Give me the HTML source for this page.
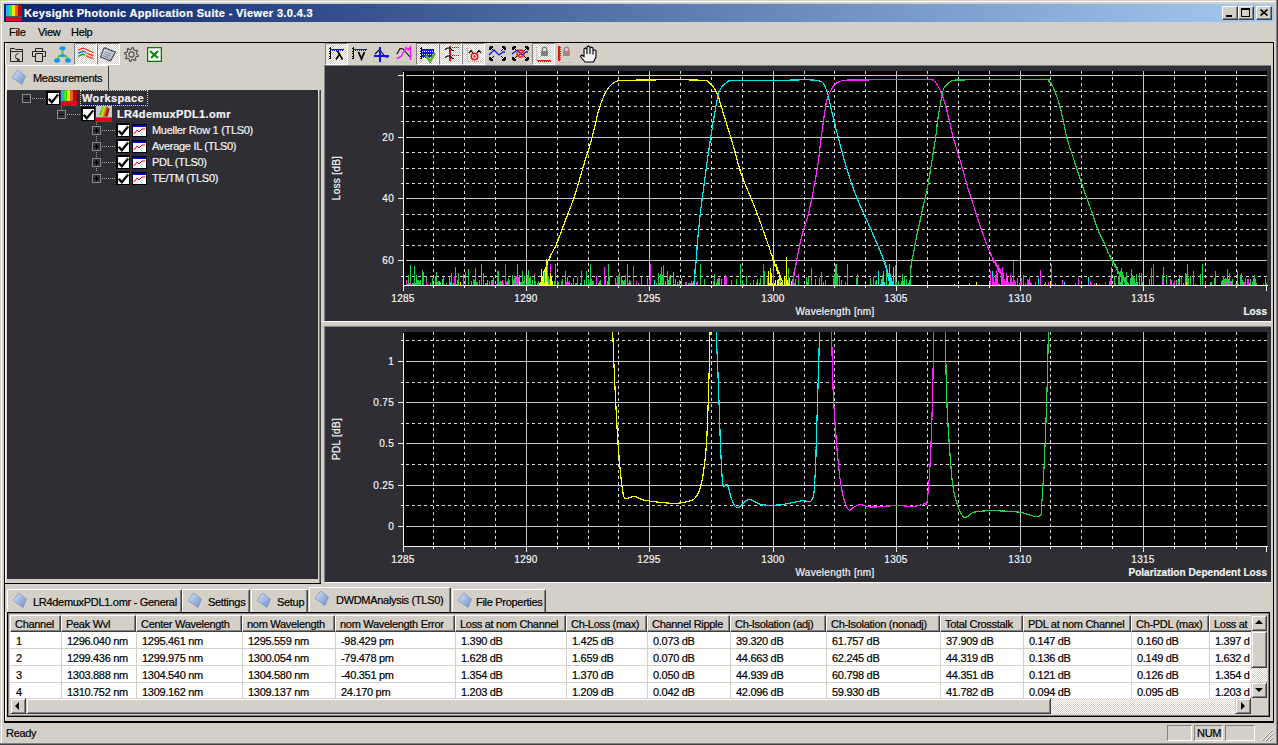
<!DOCTYPE html><html><head><meta charset="utf-8"><style>
*{margin:0;padding:0;box-sizing:border-box}
html,body{width:1278px;height:745px;overflow:hidden;background:#d4d0c8;font-family:"Liberation Sans", sans-serif;font-size:11px;color:#000}
.t{position:absolute;white-space:nowrap;line-height:13px;letter-spacing:-0.3px;-webkit-text-stroke:0.2px currentColor}
.a{position:absolute}
</style></head><body><div style="position:absolute;left:1px;top:1px;width:1275px;height:1px;background:#fff"></div><div style="position:absolute;left:1px;top:1px;width:1px;height:742px;background:#fff"></div><div style="position:absolute;left:1276px;top:0px;width:1px;height:744px;background:#808080"></div><div style="position:absolute;left:1277px;top:0px;width:1px;height:745px;background:#404040"></div><div style="position:absolute;left:0px;top:743px;width:1277px;height:1px;background:#808080"></div><div style="position:absolute;left:0px;top:744px;width:1278px;height:1px;background:#404040"></div><div style="position:absolute;left:4px;top:4px;width:1270px;height:18px;background:linear-gradient(to right,#0a246a,#a6caf0)"></div><svg class="a" style="left:6px;top:5px" width="16" height="16" viewBox="0 0 16 16"><rect x="0" y="0" width="3" height="11" fill="#1ab4f0"/><rect x="3" y="0" width="3" height="11" fill="#3ce61e"/><rect x="6" y="0" width="3" height="11" fill="#f0e600"/><rect x="9" y="0" width="3" height="11" fill="#e8641e"/><rect x="12" y="0" width="4" height="11" fill="#b40a0a"/><rect x="0" y="11" width="16" height="1" fill="#555"/><rect x="0" y="12" width="16" height="4" fill="#e8001e"/></svg><div class="t" style="left:24px;top:7px;color:#fff;font-weight:bold;font-size:11px;letter-spacing:0.35px">Keysight Photonic Application Suite - Viewer 3.0.4.3</div><div class="a" style="left:1222px;top:6px;width:16px;height:14px;background:#d4d0c8;border-top:1px solid #fff;border-left:1px solid #fff;border-right:1px solid #404040;border-bottom:1px solid #404040;box-shadow:inset -1px -1px 0 #808080"></div><div class="a" style="left:1226px;top:15px;width:6px;height:2px;background:#000"></div><div class="a" style="left:1238px;top:6px;width:16px;height:14px;background:#d4d0c8;border-top:1px solid #fff;border-left:1px solid #fff;border-right:1px solid #404040;border-bottom:1px solid #404040;box-shadow:inset -1px -1px 0 #808080"></div><div class="a" style="left:1241px;top:8px;width:9px;height:9px;border:1px solid #000;border-top-width:2px"></div><div class="a" style="left:1256px;top:6px;width:16px;height:14px;background:#d4d0c8;border-top:1px solid #fff;border-left:1px solid #fff;border-right:1px solid #404040;border-bottom:1px solid #404040;box-shadow:inset -1px -1px 0 #808080"></div><svg class="a" style="left:1260px;top:9px" width="8" height="7"><path d="M0.5 0.5L7.5 6.5M7.5 0.5L0.5 6.5" stroke="#000" stroke-width="1.6"/></svg><div class="t" style="left:9px;top:26px;">File</div><div class="t" style="left:38px;top:26px;">View</div><div class="t" style="left:71px;top:26px;">Help</div><div style="position:absolute;left:4px;top:42px;width:1270px;height:681px;border:1px solid #000;border-bottom-width:2px"></div><div style="position:absolute;left:5px;top:612px;width:1px;height:108px;background:#fff"></div><div style="position:absolute;left:5px;top:43px;width:1px;height:22px;background:#fff"></div><div class="a" style="left:74px;top:43px;width:23px;height:22px;background-color:#fff;background-image:linear-gradient(45deg,#d4d0c8 25%,transparent 25%,transparent 75%,#d4d0c8 75%),linear-gradient(45deg,#d4d0c8 25%,transparent 25%,transparent 75%,#d4d0c8 75%);background-size:2px 2px;background-position:0 0,1px 1px;border-top:1px solid #808080;border-left:1px solid #808080;border-right:1px solid #fff;border-bottom:1px solid #fff"></div><div class="a" style="left:97px;top:43px;width:23px;height:22px;background-color:#fff;background-image:linear-gradient(45deg,#d4d0c8 25%,transparent 25%,transparent 75%,#d4d0c8 75%),linear-gradient(45deg,#d4d0c8 25%,transparent 25%,transparent 75%,#d4d0c8 75%);background-size:2px 2px;background-position:0 0,1px 1px;border-top:1px solid #808080;border-left:1px solid #808080;border-right:1px solid #fff;border-bottom:1px solid #fff"></div><svg class="a" style="left:9px;top:47px" width="15" height="15" viewBox="0 0 15 15" fill="none" stroke="#222" stroke-width="1"><path d="M1.5 14.5V1.5H5.5L6.5 2.5H13.5V14.5Z"/><path d="M1.5 4.5H13.5"/><path d="M9.5 6.5A3 3 0 1 0 9.5 12.5"/><path d="M8.5 11.5l2 1.5-2 1" fill="#000"/></svg><svg class="a" style="left:32px;top:47px" width="15" height="15" viewBox="0 0 15 15" fill="none" stroke="#222" stroke-width="1"><path d="M3.5 4.5V1.5H10.5V4.5"/><path d="M3.5 9.5H0.5V4.5H13.5V9.5H11.5"/><path d="M3.5 6.5H10.5V14.5H3.5Z" fill="#d4d0c8"/></svg><svg class="a" style="left:54px;top:46px" width="17" height="17" viewBox="0 0 17 17"><path d="M8.5 2V8M3 14L5 10H12L14 14" stroke="#4ad04a" stroke-width="2" fill="none"/><ellipse cx="8.5" cy="2.2" rx="3" ry="2" fill="#1e90f0"/><ellipse cx="8.5" cy="9.5" rx="2.6" ry="1.6" fill="#1e90f0"/><ellipse cx="3" cy="14.5" rx="3" ry="2.2" fill="#1e90f0"/><ellipse cx="14" cy="14.5" rx="3" ry="2.2" fill="#1e90f0"/></svg><svg class="a" style="left:74px;top:43px" width="23" height="21" viewBox="74 43 23 21" fill="none" stroke-width="1.3"><path d="M78 7.5L80.5 6L83 5.2L85.5 6L88 7.2L90.5 8.5L93.5 9.5" stroke="#ff3a14" transform="translate(0,43)"/><path d="M78 10.5L80.5 9.2L83 8.3L86 9.5" stroke="#1464ff" transform="translate(0,43)"/><path d="M86.5 10.2L89.5 11.5L93.5 12.5" stroke="#ff3a14" transform="translate(0,43)"/><path d="M78 13.5L80.5 12.2L83 11.3L85 12" stroke="#109a10" transform="translate(0,43)"/><path d="M85.5 12.5L88.5 13.8L91 14.8L93.5 15.5" stroke="#ff3a14" transform="translate(0,43)"/></svg><svg class="a" style="left:97px;top:43px" width="23" height="21" viewBox="0 0 23 21"><defs><linearGradient id="ng" x1="0" y1="0" x2="1" y2="1"><stop offset="0" stop-color="#f4f6fa"/><stop offset="1" stop-color="#9aa4b8"/></linearGradient></defs><path d="M7 5L18.5 9L13.5 18L3.5 14Z" fill="url(#ng)" stroke="#3c4454" stroke-width="1.1" stroke-linejoin="round"/><path d="M7.5 8.5L14 11M6.5 10.5L13 13M5.5 12.5L11 14.5" stroke="#707888" stroke-width="0.9"/><path d="M8 4.5L9 5.5M11 5.8L12 6.8M14 7L15 8" stroke="#303848" stroke-width="1.3"/></svg><svg class="a" style="left:124px;top:47px" width="15" height="15" viewBox="0 0 15 15"><path d="M12.80 7.50 L14.47 8.16 L14.19 9.56 L12.40 9.53 L11.25 11.25 L11.96 12.89 L10.78 13.69 L9.53 12.40 L7.50 12.80 L6.84 14.47 L5.44 14.19 L5.47 12.40 L3.75 11.25 L2.11 11.96 L1.31 10.78 L2.60 9.53 L2.20 7.50 L0.53 6.84 L0.81 5.44 L2.60 5.47 L3.75 3.75 L3.04 2.11 L4.22 1.31 L5.47 2.60 L7.50 2.20 L8.16 0.53 L9.56 0.81 L9.53 2.60 L11.25 3.75 L12.89 3.04 L13.69 4.22 L12.40 5.47Z" fill="#d4d0c8" stroke="#505050" stroke-width="1.1" stroke-linejoin="round"/><circle cx="7.5" cy="7.5" r="2.6" fill="#d4d0c8" stroke="#505050" stroke-width="1.1"/></svg><svg class="a" style="left:147px;top:47px" width="15" height="15" viewBox="0 0 15 15"><rect x="0.5" y="0.5" width="14" height="14" fill="#fff" stroke="#0a7a0a" stroke-width="1.6"/><path d="M3 4L11 11M11 4L4 11" stroke="#0a8a0a" stroke-width="2.2"/></svg><div class="a" style="left:6px;top:65px;width:103px;height:26px;background:#d4d0c8;border-top:1px solid #fff;border-left:1px solid #fff;border-right:1px solid #404040;border-radius:2px 2px 0 0"></div><svg class="a" style="left:11px;top:69px" width="16" height="16" viewBox="0 0 16 16"><defs><linearGradient id="dg" x1="0" y1="0" x2="1" y2="1"><stop offset="0" stop-color="#dce8f8"/><stop offset="1" stop-color="#6a8cc8"/></linearGradient></defs><path d="M1 8.5L6.7 1L14.5 7L11 15.5Z" fill="url(#dg)" stroke="#7890c0" stroke-width="0.7"/></svg><div class="t" style="left:33px;top:72px;">Measurements</div><div style="position:absolute;left:7px;top:90px;width:311px;height:489px;background:#2e2e34"></div><div style="position:absolute;left:5px;top:90px;width:1px;height:493px;background:#fff"></div><div style="position:absolute;left:318px;top:90px;width:1px;height:490px;background:#d4d0c8"></div><div style="position:absolute;left:319px;top:90px;width:1px;height:493px;background:#808080"></div><div style="position:absolute;left:320px;top:90px;width:1px;height:494px;background:#404040"></div><div style="position:absolute;left:318px;top:90px;width:1px;height:1px;background:#fff"></div><div style="position:absolute;left:4px;top:583px;width:317px;height:1px;background:#000"></div><div class="a" style="left:22px;top:94px;width:9px;height:9px;border:1px solid #8a8a8a"></div><div style="position:absolute;left:24px;top:98px;width:5px;height:1px;background:#000"></div><div class="a" style="left:32px;top:98px;width:13px;height:1px;background-image:linear-gradient(to right,#a0a0a0 50%,transparent 50%);background-size:2px 1px"></div><div class="a" style="left:46px;top:91px;width:14px;height:14px;background:#fff;border:1px solid #000;box-shadow:inset 1px 1px 0 #000"></div><svg class="a" style="left:48px;top:93px" width="11" height="11" viewBox="0 0 11 11"><path d="M0.8 5.8L3.8 9.2L10.2 1.5" stroke="#000" stroke-width="2.3" fill="none"/></svg><svg class="a" style="left:61px;top:90px" width="16" height="16" viewBox="0 0 16 16"><rect x="0" y="0" width="3" height="11" rx="1" fill="#1ab4f0"/><rect x="3" y="0" width="3" height="11" rx="1" fill="#3ce61e"/><rect x="6" y="0" width="3" height="11" rx="1" fill="#f0e600"/><rect x="9" y="0" width="3" height="11" rx="1" fill="#e8641e"/><rect x="12" y="0" width="4" height="11" rx="1" fill="#b40a0a"/><rect x="0" y="11" width="16" height="1" fill="#555"/><rect x="0" y="12" width="16" height="4" fill="#e8001e"/></svg><div class="a" style="left:80px;top:90px;width:68px;height:16px;border:1px dotted #e8d890;border-bottom-color:#e8d890;box-shadow:inset 0 -1px 0 #10206a"></div><div class="t" style="left:82px;top:92px;color:#f4f4f4;font-weight:bold;font-size:11px;letter-spacing:0.4px">Workspace</div><div class="a" style="left:61px;top:106px;width:1px;height:4px;background-image:linear-gradient(to bottom,#a0a0a0 50%,transparent 50%);background-size:1px 2px"></div><div class="a" style="left:57px;top:110px;width:9px;height:9px;border:1px solid #8a8a8a"></div><div style="position:absolute;left:59px;top:114px;width:5px;height:1px;background:#000"></div><div class="a" style="left:67px;top:114px;width:13px;height:1px;background-image:linear-gradient(to right,#a0a0a0 50%,transparent 50%);background-size:2px 1px"></div><div class="a" style="left:81px;top:107px;width:14px;height:14px;background:#fff;border:1px solid #000;box-shadow:inset 1px 1px 0 #000"></div><svg class="a" style="left:83px;top:109px" width="11" height="11" viewBox="0 0 11 11"><path d="M0.8 5.8L3.8 9.2L10.2 1.5" stroke="#000" stroke-width="2.3" fill="none"/></svg><svg class="a" style="left:96px;top:106px" width="16" height="16" viewBox="0 0 16 16"><defs><linearGradient id="rb" x1="0" y1="0" x2="1" y2="0.3"><stop offset="0" stop-color="#1890e0"/><stop offset="0.3" stop-color="#20c820"/><stop offset="0.5" stop-color="#e8e800"/><stop offset="0.72" stop-color="#d05010"/><stop offset="1" stop-color="#800000"/></linearGradient></defs><rect x="0" y="0" width="16" height="11" fill="#c8c8c8"/><path d="M3 9L6.5 0.8L11.5 0.8L13.5 3L11.5 10.5L7 10.8Z" fill="url(#rb)"/><rect x="0" y="11" width="16" height="1" fill="#607870"/><rect x="0" y="12" width="16" height="4" fill="#e8001e"/></svg><div class="t" style="left:117px;top:108px;color:#f4f4f4;font-weight:bold;font-size:11px;letter-spacing:0.35px">LR4demuxPDL1.omr</div><div class="a" style="left:96px;top:122px;width:1px;height:50px;background-image:linear-gradient(to bottom,#a0a0a0 50%,transparent 50%);background-size:1px 2px"></div><div class="a" style="left:92px;top:126px;width:9px;height:9px;border:1px solid #8a8a8a"></div><div style="position:absolute;left:94px;top:130px;width:5px;height:1px;background:#000"></div><div style="position:absolute;left:96px;top:128px;width:1px;height:5px;background:#000"></div><div class="a" style="left:102px;top:130px;width:13px;height:1px;background-image:linear-gradient(to right,#a0a0a0 50%,transparent 50%);background-size:2px 1px"></div><div class="a" style="left:116px;top:123px;width:14px;height:14px;background:#fff;border:1px solid #000;box-shadow:inset 1px 1px 0 #000"></div><svg class="a" style="left:118px;top:125px" width="11" height="11" viewBox="0 0 11 11"><path d="M0.8 5.8L3.8 9.2L10.2 1.5" stroke="#000" stroke-width="2.3" fill="none"/></svg><svg class="a" style="left:132px;top:124px" width="15" height="13" viewBox="0 0 15 13"><rect x="0" y="0" width="15" height="13" fill="#000"/><rect x="1" y="1" width="13" height="11" fill="#fff"/><rect x="1" y="1" width="13" height="2" fill="#0000e0"/><path d="M2 10L5 6L7 8L10 5L13 5" stroke="#e00000" stroke-width="1" fill="none"/></svg><div class="t" style="left:152px;top:124px;color:#f4f4f4">Mueller Row 1 (TLS0)</div><div class="a" style="left:92px;top:142px;width:9px;height:9px;border:1px solid #8a8a8a"></div><div style="position:absolute;left:94px;top:146px;width:5px;height:1px;background:#000"></div><div style="position:absolute;left:96px;top:144px;width:1px;height:5px;background:#000"></div><div class="a" style="left:102px;top:146px;width:13px;height:1px;background-image:linear-gradient(to right,#a0a0a0 50%,transparent 50%);background-size:2px 1px"></div><div class="a" style="left:116px;top:139px;width:14px;height:14px;background:#fff;border:1px solid #000;box-shadow:inset 1px 1px 0 #000"></div><svg class="a" style="left:118px;top:141px" width="11" height="11" viewBox="0 0 11 11"><path d="M0.8 5.8L3.8 9.2L10.2 1.5" stroke="#000" stroke-width="2.3" fill="none"/></svg><svg class="a" style="left:132px;top:140px" width="15" height="13" viewBox="0 0 15 13"><rect x="0" y="0" width="15" height="13" fill="#000"/><rect x="1" y="1" width="13" height="11" fill="#fff"/><rect x="1" y="1" width="13" height="2" fill="#0000e0"/><path d="M2 10L5 6L7 8L10 5L13 5" stroke="#e00000" stroke-width="1" fill="none"/></svg><div class="t" style="left:152px;top:140px;color:#f4f4f4">Average IL (TLS0)</div><div class="a" style="left:92px;top:158px;width:9px;height:9px;border:1px solid #8a8a8a"></div><div style="position:absolute;left:94px;top:162px;width:5px;height:1px;background:#000"></div><div style="position:absolute;left:96px;top:160px;width:1px;height:5px;background:#000"></div><div class="a" style="left:102px;top:162px;width:13px;height:1px;background-image:linear-gradient(to right,#a0a0a0 50%,transparent 50%);background-size:2px 1px"></div><div class="a" style="left:116px;top:155px;width:14px;height:14px;background:#fff;border:1px solid #000;box-shadow:inset 1px 1px 0 #000"></div><svg class="a" style="left:118px;top:157px" width="11" height="11" viewBox="0 0 11 11"><path d="M0.8 5.8L3.8 9.2L10.2 1.5" stroke="#000" stroke-width="2.3" fill="none"/></svg><svg class="a" style="left:132px;top:156px" width="15" height="13" viewBox="0 0 15 13"><rect x="0" y="0" width="15" height="13" fill="#000"/><rect x="1" y="1" width="13" height="11" fill="#fff"/><rect x="1" y="1" width="13" height="2" fill="#0000e0"/><path d="M2 10L5 6L7 8L10 5L13 5" stroke="#e00000" stroke-width="1" fill="none"/></svg><div class="t" style="left:152px;top:156px;color:#f4f4f4">PDL (TLS0)</div><div class="a" style="left:92px;top:174px;width:9px;height:9px;border:1px solid #8a8a8a"></div><div style="position:absolute;left:94px;top:178px;width:5px;height:1px;background:#000"></div><div style="position:absolute;left:96px;top:176px;width:1px;height:5px;background:#000"></div><div class="a" style="left:102px;top:178px;width:13px;height:1px;background-image:linear-gradient(to right,#a0a0a0 50%,transparent 50%);background-size:2px 1px"></div><div class="a" style="left:116px;top:171px;width:14px;height:14px;background:#fff;border:1px solid #000;box-shadow:inset 1px 1px 0 #000"></div><svg class="a" style="left:118px;top:173px" width="11" height="11" viewBox="0 0 11 11"><path d="M0.8 5.8L3.8 9.2L10.2 1.5" stroke="#000" stroke-width="2.3" fill="none"/></svg><svg class="a" style="left:132px;top:172px" width="15" height="13" viewBox="0 0 15 13"><rect x="0" y="0" width="15" height="13" fill="#000"/><rect x="1" y="1" width="13" height="11" fill="#fff"/><rect x="1" y="1" width="13" height="2" fill="#0000e0"/><path d="M2 10L5 6L7 8L10 5L13 5" stroke="#e00000" stroke-width="1" fill="none"/></svg><div class="t" style="left:152px;top:172px;color:#f4f4f4">TE/TM (TLS0)</div><div style="position:absolute;left:321px;top:43px;width:952px;height:22px;background:#d4d0c8"></div><div class="a" style="left:325px;top:43px;width:23px;height:22px;background-color:#fff;background-image:linear-gradient(45deg,#d4d0c8 25%,transparent 25%,transparent 75%,#d4d0c8 75%),linear-gradient(45deg,#d4d0c8 25%,transparent 25%,transparent 75%,#d4d0c8 75%);background-size:2px 2px;background-position:0 0,1px 1px;border-top:1px solid #808080;border-left:1px solid #808080;border-right:1px solid #fff;border-bottom:1px solid #fff"></div><div class="a" style="left:416px;top:43px;width:23px;height:22px;background-color:#fff;background-image:linear-gradient(45deg,#d4d0c8 25%,transparent 25%,transparent 75%,#d4d0c8 75%),linear-gradient(45deg,#d4d0c8 25%,transparent 25%,transparent 75%,#d4d0c8 75%);background-size:2px 2px;background-position:0 0,1px 1px;border-top:1px solid #808080;border-left:1px solid #808080;border-right:1px solid #fff;border-bottom:1px solid #fff"></div><div class="a" style="left:439px;top:43px;width:23px;height:22px;background-color:#fff;background-image:linear-gradient(45deg,#d4d0c8 25%,transparent 25%,transparent 75%,#d4d0c8 75%),linear-gradient(45deg,#d4d0c8 25%,transparent 25%,transparent 75%,#d4d0c8 75%);background-size:2px 2px;background-position:0 0,1px 1px;border-top:1px solid #808080;border-left:1px solid #808080;border-right:1px solid #fff;border-bottom:1px solid #fff"></div><div class="a" style="left:462px;top:43px;width:23px;height:22px;background-color:#fff;background-image:linear-gradient(45deg,#d4d0c8 25%,transparent 25%,transparent 75%,#d4d0c8 75%),linear-gradient(45deg,#d4d0c8 25%,transparent 25%,transparent 75%,#d4d0c8 75%);background-size:2px 2px;background-position:0 0,1px 1px;border-top:1px solid #808080;border-left:1px solid #808080;border-right:1px solid #fff;border-bottom:1px solid #fff"></div><div class="a" style="left:532px;top:43px;width:23px;height:22px;background-color:#fff;background-image:linear-gradient(45deg,#d4d0c8 25%,transparent 25%,transparent 75%,#d4d0c8 75%),linear-gradient(45deg,#d4d0c8 25%,transparent 25%,transparent 75%,#d4d0c8 75%);background-size:2px 2px;background-position:0 0,1px 1px;border-top:1px solid #808080;border-left:1px solid #808080;border-right:1px solid #fff;border-bottom:1px solid #fff"></div><svg class="a" style="left:327px;top:44px" width="22" height="20" viewBox="0 0 22 20" shape-rendering="crispEdges"><path d="M3.5 3V15" stroke="#000" stroke-width="1.2"/><path d="M2 4.5h1M2 7h1M2 9.5h1M2 12h1M2 14.5h1" stroke="#000"/><rect x="4" y="4.5" width="13" height="1.5" fill="#1010f0"/><rect x="5" y="6.0" width="1" height="1" fill="#1010f0"/><rect x="7" y="6.0" width="1" height="1" fill="#1010f0"/><rect x="9" y="6.0" width="1" height="1" fill="#1010f0"/><rect x="11" y="6.0" width="1" height="1" fill="#1010f0"/><rect x="13" y="6.0" width="1" height="1" fill="#1010f0"/><rect x="15" y="6.0" width="1" height="1" fill="#1010f0"/><path d="M9.5 7.5H11L15.5 15.5M12.3 10.5L9 15.5" stroke="#000" stroke-width="1.7" fill="none" shape-rendering="auto"/></svg><svg class="a" style="left:350px;top:44px" width="22" height="20" viewBox="0 0 22 20" shape-rendering="crispEdges"><path d="M3.5 3V15" stroke="#000" stroke-width="1.2"/><path d="M2 4.5h1M2 7h1M2 9.5h1M2 12h1M2 14.5h1" stroke="#000"/><rect x="4" y="4.5" width="13" height="1.5" fill="#1010f0"/><rect x="5" y="6.0" width="1" height="1" fill="#1010f0"/><rect x="7" y="6.0" width="1" height="1" fill="#1010f0"/><rect x="9" y="6.0" width="1" height="1" fill="#1010f0"/><rect x="11" y="6.0" width="1" height="1" fill="#1010f0"/><rect x="13" y="6.0" width="1" height="1" fill="#1010f0"/><rect x="15" y="6.0" width="1" height="1" fill="#1010f0"/><path d="M8.5 8L11.5 15L14.5 8" stroke="#000" stroke-width="1.8" fill="none" shape-rendering="auto"/></svg><svg class="a" style="left:371px;top:44px" width="22" height="20" viewBox="0 0 22 20" shape-rendering="crispEdges"><path d="M2.5 9V18.5H18" stroke="#b8b8b8" stroke-dasharray="1 1" fill="none"/><path d="M4 10L8.5 5.5L14 12.5L17 13.5" stroke="#000" stroke-width="1.1" fill="none" shape-rendering="auto"/><rect x="8" y="3" width="1.5" height="15" fill="#1010f0"/><rect x="3" y="11" width="15" height="1.5" fill="#1010f0"/></svg><svg class="a" style="left:394px;top:44px" width="22" height="20" viewBox="0 0 22 20" shape-rendering="crispEdges"><path d="M2.5 9V18.5H18" stroke="#b8b8b8" stroke-dasharray="1 1" fill="none"/><path d="M3 10L6 4.5L9 5L16 13" stroke="#000" stroke-width="1.1" fill="none" shape-rendering="auto"/><path d="M3 14.5L7 12.5L9.5 8L12 3.5L14 6L16.5 3V16" stroke="#ff10ff" stroke-width="1.5" fill="none" shape-rendering="auto"/></svg><svg class="a" style="left:418px;top:44px" width="22" height="20" viewBox="0 0 22 20" shape-rendering="crispEdges"><path d="M3.5 3V15" stroke="#000" stroke-width="1.2"/><path d="M2 4.5h1M2 7h1M2 9.5h1M2 12h1M2 14.5h1" stroke="#000"/><rect x="4" y="5" width="12" height="1.5" fill="#1010f0"/><rect x="5" y="6.5" width="1" height="1" fill="#1010f0"/><rect x="7" y="6.5" width="1" height="1" fill="#1010f0"/><rect x="9" y="6.5" width="1" height="1" fill="#1010f0"/><rect x="11" y="6.5" width="1" height="1" fill="#1010f0"/><rect x="13" y="6.5" width="1" height="1" fill="#1010f0"/><rect x="15" y="6.5" width="1" height="1" fill="#1010f0"/><rect x="4" y="8" width="12" height="1.5" fill="#1010f0"/><rect x="5" y="9.5" width="1" height="1" fill="#1010f0"/><rect x="7" y="9.5" width="1" height="1" fill="#1010f0"/><rect x="9" y="9.5" width="1" height="1" fill="#1010f0"/><rect x="11" y="9.5" width="1" height="1" fill="#1010f0"/><rect x="13" y="9.5" width="1" height="1" fill="#1010f0"/><rect x="15" y="9.5" width="1" height="1" fill="#1010f0"/><rect x="4" y="11" width="12" height="1.5" fill="#1010f0"/><rect x="5" y="12.5" width="1" height="1" fill="#1010f0"/><rect x="7" y="12.5" width="1" height="1" fill="#1010f0"/><rect x="9" y="12.5" width="1" height="1" fill="#1010f0"/><rect x="11" y="12.5" width="1" height="1" fill="#1010f0"/><rect x="13" y="12.5" width="1" height="1" fill="#1010f0"/><rect x="15" y="12.5" width="1" height="1" fill="#1010f0"/><path d="M8 11.5L12 17.5L17 9" stroke="#50b030" stroke-width="2.4" fill="none" shape-rendering="auto"/></svg><svg class="a" style="left:441px;top:44px" width="22" height="20" viewBox="0 0 22 20" shape-rendering="crispEdges"><rect x="8" y="2" width="1.5" height="15" fill="#f01010"/><path d="M9 3.5h9M9 11.5h9" stroke="#f01010" stroke-dasharray="1 1"/><path d="M4 5.5L6.5 4L9 4L11.5 6.5L13 6.5M4 13.5L6.5 12L9 12L11.5 14.5L13 14.5" stroke="#000" stroke-width="1.1" fill="none" shape-rendering="auto"/></svg><svg class="a" style="left:464px;top:44px" width="22" height="20" viewBox="0 0 22 20" shape-rendering="crispEdges"><path d="M3.5 4V17.5H18" stroke="#b8b8b8" stroke-dasharray="1 1" fill="none"/><path d="M5 9L7 6.5L9 9M13 9L15 6.5L17 9" stroke="#000" stroke-width="1.2" fill="none" shape-rendering="auto"/><circle cx="10.5" cy="12.5" r="3.2" fill="#fff" stroke="#f01010" stroke-width="1.6" shape-rendering="auto"/><circle cx="10.5" cy="12.5" r="1.2" fill="#f01010" shape-rendering="auto"/></svg><svg class="a" style="left:487px;top:44px" width="22" height="20" viewBox="0 0 22 20" shape-rendering="crispEdges"><path d="M2.5 8V18.5H18" stroke="#b8b8b8" stroke-dasharray="1 1" fill="none"/><path d="M3 3h3M3 3v3M4 4l3 3M18 3h-3M18 3v3M17 4l-3 3M3 16h3M3 16v-3M4 15l3-3M18 16h-3M18 16v-3M17 15l-3-3" stroke="#000" stroke-width="1.4" fill="none"/><path d="M2 11L7 6L12 11L16 8L18 8" stroke="#1010f0" stroke-width="1.3" fill="none" shape-rendering="auto"/></svg><svg class="a" style="left:510px;top:44px" width="22" height="20" viewBox="0 0 22 20" shape-rendering="crispEdges"><path d="M2.5 8V18.5H18" stroke="#b8b8b8" stroke-dasharray="1 1" fill="none"/><path d="M3 3h3M3 3v3M4 4l3 3M18 3h-3M18 3v3M17 4l-3 3M3 16h3M3 16v-3M4 15l3-3M18 16h-3M18 16v-3M17 15l-3-3" stroke="#000" stroke-width="1.4" fill="none"/><path d="M2 10L7 6L12 11L16 8L18 8" stroke="#1010f0" stroke-width="1.3" fill="none" shape-rendering="auto"/><circle cx="10.5" cy="9.5" r="3.6" fill="none" stroke="#f01010" stroke-width="1.5" shape-rendering="auto"/><path d="M8 12L13 7" stroke="#f01010" stroke-width="1.5" shape-rendering="auto"/></svg><svg class="a" style="left:534px;top:44px" width="22" height="20" viewBox="0 0 22 20" shape-rendering="crispEdges"><path d="M2.5 3V16" stroke="#b8b8b8" stroke-dasharray="1 1"/><rect x="7" y="7" width="7" height="5" fill="#808080"/><path d="M8.3 7V5.5A2.2 2.2 0 0 1 12.7 5.5V7" stroke="#808080" stroke-width="1.5" fill="none" shape-rendering="auto"/><rect x="3" y="15.5" width="14" height="1.5" fill="#f01010"/><rect x="4" y="17.0" width="1" height="1" fill="#f01010"/><rect x="6" y="17.0" width="1" height="1" fill="#f01010"/><rect x="8" y="17.0" width="1" height="1" fill="#f01010"/><rect x="10" y="17.0" width="1" height="1" fill="#f01010"/><rect x="12" y="17.0" width="1" height="1" fill="#f01010"/><rect x="14" y="17.0" width="1" height="1" fill="#f01010"/><rect x="16" y="17.0" width="1" height="1" fill="#f01010"/></svg><svg class="a" style="left:556px;top:44px" width="22" height="20" viewBox="0 0 22 20" shape-rendering="crispEdges"><path d="M4 18.5H18" stroke="#b8b8b8" stroke-dasharray="1 1"/><rect x="2" y="2" width="1.5" height="15" fill="#f01010"/><rect x="3.5" y="3" width="1" height="1" fill="#f01010"/><rect x="3.5" y="5" width="1" height="1" fill="#f01010"/><rect x="3.5" y="7" width="1" height="1" fill="#f01010"/><rect x="3.5" y="9" width="1" height="1" fill="#f01010"/><rect x="3.5" y="11" width="1" height="1" fill="#f01010"/><rect x="3.5" y="13" width="1" height="1" fill="#f01010"/><rect x="3.5" y="15" width="1" height="1" fill="#f01010"/><rect x="7" y="7" width="7" height="5" fill="#909090"/><path d="M8.3 7V5.5A2.2 2.2 0 0 1 12.7 5.5V7" stroke="#909090" stroke-width="1.5" fill="none" shape-rendering="auto"/></svg><svg class="a" style="left:578px;top:44px" width="22" height="20" viewBox="0 0 22 20" shape-rendering="crispEdges"><path d="M7 18L2.5 12.5L3.5 11L6 12.5V5L7.5 4L9 5V10V3L10.5 2L12 3V10V4L13.5 3.2L15 4V10.5V6.5L16.5 5.8L18 6.5V13L15.5 18Z" fill="#f0f0f0" stroke="#000" stroke-width="1.1" shape-rendering="auto"/></svg><svg class="a" style="left:0;top:0" width="1278" height="745" viewBox="0 0 1278 745"><rect x="324" y="65" width="947" height="256" fill="#808080"/><rect x="325" y="66" width="946" height="256" fill="#fff"/><rect x="325" y="66" width="946" height="255" fill="#2e2e34"/><rect x="403" y="71" width="864" height="214" fill="#000"/><defs><clipPath id="c66"><rect x="404" y="71" width="864" height="214"/></clipPath></defs><g shape-rendering="crispEdges"><rect x="406" y="75" width="861" height="1" fill="#c8c8c8"/><line x1="406" y1="91.5" x2="1267" y2="91.5" stroke="#d8d8d8" stroke-width="1" stroke-dasharray="3 3"/><line x1="406" y1="106.5" x2="1267" y2="106.5" stroke="#d8d8d8" stroke-width="1" stroke-dasharray="3 3"/><line x1="406" y1="121.5" x2="1267" y2="121.5" stroke="#d8d8d8" stroke-width="1" stroke-dasharray="3 3"/><rect x="406" y="137" width="861" height="1" fill="#c8c8c8"/><line x1="406" y1="152.5" x2="1267" y2="152.5" stroke="#d8d8d8" stroke-width="1" stroke-dasharray="3 3"/><line x1="406" y1="168.5" x2="1267" y2="168.5" stroke="#d8d8d8" stroke-width="1" stroke-dasharray="3 3"/><line x1="406" y1="183.5" x2="1267" y2="183.5" stroke="#d8d8d8" stroke-width="1" stroke-dasharray="3 3"/><rect x="406" y="198" width="861" height="1" fill="#c8c8c8"/><line x1="406" y1="214.5" x2="1267" y2="214.5" stroke="#d8d8d8" stroke-width="1" stroke-dasharray="3 3"/><line x1="406" y1="229.5" x2="1267" y2="229.5" stroke="#d8d8d8" stroke-width="1" stroke-dasharray="3 3"/><line x1="406" y1="245.5" x2="1267" y2="245.5" stroke="#d8d8d8" stroke-width="1" stroke-dasharray="3 3"/><rect x="406" y="260" width="861" height="1" fill="#c8c8c8"/><line x1="406" y1="276.5" x2="1267" y2="276.5" stroke="#d8d8d8" stroke-width="1" stroke-dasharray="3 3"/><line x1="433.5" y1="71" x2="433.5" y2="285" stroke="#d8d8d8" stroke-width="1" stroke-dasharray="3 3"/><line x1="464.5" y1="71" x2="464.5" y2="285" stroke="#d8d8d8" stroke-width="1" stroke-dasharray="3 3"/><line x1="495.5" y1="71" x2="495.5" y2="285" stroke="#d8d8d8" stroke-width="1" stroke-dasharray="3 3"/><rect x="526" y="71" width="1" height="214" fill="#c8c8c8"/><line x1="557.5" y1="71" x2="557.5" y2="285" stroke="#d8d8d8" stroke-width="1" stroke-dasharray="3 3"/><line x1="588.5" y1="71" x2="588.5" y2="285" stroke="#d8d8d8" stroke-width="1" stroke-dasharray="3 3"/><line x1="618.5" y1="71" x2="618.5" y2="285" stroke="#d8d8d8" stroke-width="1" stroke-dasharray="3 3"/><rect x="649" y="71" width="1" height="214" fill="#c8c8c8"/><line x1="680.5" y1="71" x2="680.5" y2="285" stroke="#d8d8d8" stroke-width="1" stroke-dasharray="3 3"/><line x1="711.5" y1="71" x2="711.5" y2="285" stroke="#d8d8d8" stroke-width="1" stroke-dasharray="3 3"/><line x1="742.5" y1="71" x2="742.5" y2="285" stroke="#d8d8d8" stroke-width="1" stroke-dasharray="3 3"/><rect x="773" y="71" width="1" height="214" fill="#c8c8c8"/><line x1="804.5" y1="71" x2="804.5" y2="285" stroke="#d8d8d8" stroke-width="1" stroke-dasharray="3 3"/><line x1="834.5" y1="71" x2="834.5" y2="285" stroke="#d8d8d8" stroke-width="1" stroke-dasharray="3 3"/><line x1="865.5" y1="71" x2="865.5" y2="285" stroke="#d8d8d8" stroke-width="1" stroke-dasharray="3 3"/><rect x="896" y="71" width="1" height="214" fill="#c8c8c8"/><line x1="927.5" y1="71" x2="927.5" y2="285" stroke="#d8d8d8" stroke-width="1" stroke-dasharray="3 3"/><line x1="958.5" y1="71" x2="958.5" y2="285" stroke="#d8d8d8" stroke-width="1" stroke-dasharray="3 3"/><line x1="989.5" y1="71" x2="989.5" y2="285" stroke="#d8d8d8" stroke-width="1" stroke-dasharray="3 3"/><rect x="1020" y="71" width="1" height="214" fill="#c8c8c8"/><line x1="1050.5" y1="71" x2="1050.5" y2="285" stroke="#d8d8d8" stroke-width="1" stroke-dasharray="3 3"/><line x1="1081.5" y1="71" x2="1081.5" y2="285" stroke="#d8d8d8" stroke-width="1" stroke-dasharray="3 3"/><line x1="1112.5" y1="71" x2="1112.5" y2="285" stroke="#d8d8d8" stroke-width="1" stroke-dasharray="3 3"/><rect x="1143" y="71" width="1" height="214" fill="#c8c8c8"/><line x1="1174.5" y1="71" x2="1174.5" y2="285" stroke="#d8d8d8" stroke-width="1" stroke-dasharray="3 3"/><line x1="1205.5" y1="71" x2="1205.5" y2="285" stroke="#d8d8d8" stroke-width="1" stroke-dasharray="3 3"/><line x1="1236.5" y1="71" x2="1236.5" y2="285" stroke="#d8d8d8" stroke-width="1" stroke-dasharray="3 3"/></g><g clip-path="url(#c66)"><g shape-rendering="crispEdges"><rect x="677" y="282" width="1" height="3" fill="#20d040"/><rect x="506" y="282" width="1" height="3" fill="#ff20ff"/><rect x="837" y="274" width="1" height="11" fill="#20d040"/><rect x="537" y="283" width="1" height="2" fill="#20d040"/><rect x="581" y="271" width="1" height="14" fill="#20d040"/><rect x="856" y="278" width="1" height="7" fill="#20d040"/><rect x="604" y="267" width="1" height="18" fill="#ff20ff"/><rect x="1248" y="279" width="1" height="6" fill="#ff20ff"/><rect x="1052" y="284" width="1" height="1" fill="#ff20ff"/><rect x="1031" y="283" width="1" height="2" fill="#ff20ff"/><rect x="721" y="279" width="1" height="6" fill="#20d040"/><rect x="884" y="282" width="1" height="3" fill="#20d040"/><rect x="910" y="281" width="1" height="4" fill="#20d040"/><rect x="753" y="280" width="1" height="5" fill="#20d040"/><rect x="515" y="276" width="1" height="9" fill="#20d040"/><rect x="1050" y="284" width="1" height="1" fill="#ff20ff"/><rect x="498" y="271" width="1" height="14" fill="#20d040"/><rect x="673" y="272" width="1" height="13" fill="#20d040"/><rect x="821" y="272" width="1" height="13" fill="#20d040"/><rect x="647" y="278" width="1" height="7" fill="#20d040"/><rect x="417" y="280" width="1" height="5" fill="#20d040"/><rect x="456" y="284" width="1" height="1" fill="#20d040"/><rect x="1200" y="274" width="1" height="11" fill="#20d040"/><rect x="487" y="283" width="1" height="2" fill="#ff20ff"/><rect x="508" y="278" width="1" height="7" fill="#20d040"/><rect x="415" y="283" width="1" height="2" fill="#20d040"/><rect x="545" y="280" width="1" height="5" fill="#20d040"/><rect x="571" y="283" width="1" height="2" fill="#20d040"/><rect x="1232" y="279" width="1" height="6" fill="#20d040"/><rect x="1014" y="283" width="1" height="2" fill="#ff20ff"/><rect x="410" y="265" width="1" height="20" fill="#20d040"/><rect x="696" y="282" width="1" height="3" fill="#ff20ff"/><rect x="521" y="282" width="1" height="3" fill="#20d040"/><rect x="505" y="272" width="1" height="13" fill="#20d040"/><rect x="1249" y="283" width="1" height="2" fill="#20d040"/><rect x="617" y="284" width="1" height="1" fill="#20d040"/><rect x="719" y="278" width="1" height="7" fill="#20d040"/><rect x="590" y="264" width="1" height="21" fill="#20d040"/><rect x="565" y="271" width="1" height="14" fill="#20d040"/><rect x="792" y="279" width="1" height="6" fill="#20d040"/><rect x="1091" y="283" width="1" height="2" fill="#ff20ff"/><rect x="875" y="281" width="1" height="4" fill="#20d040"/><rect x="954" y="284" width="1" height="1" fill="#ffff00"/><rect x="1229" y="273" width="1" height="12" fill="#20d040"/><rect x="1028" y="280" width="1" height="5" fill="#ff20ff"/><rect x="588" y="279" width="1" height="6" fill="#20d040"/><rect x="1170" y="279" width="1" height="6" fill="#20d040"/><rect x="407" y="284" width="1" height="1" fill="#20d040"/><rect x="627" y="264" width="1" height="21" fill="#20d040"/><rect x="693" y="281" width="1" height="4" fill="#20d040"/><rect x="1105" y="282" width="1" height="3" fill="#ff20ff"/><rect x="432" y="278" width="1" height="7" fill="#20d040"/><rect x="1240" y="275" width="1" height="10" fill="#20d040"/><rect x="523" y="284" width="1" height="1" fill="#ffff00"/><rect x="477" y="282" width="1" height="3" fill="#20d040"/><rect x="629" y="280" width="1" height="5" fill="#ff20ff"/><rect x="628" y="283" width="1" height="2" fill="#20d040"/><rect x="1187" y="264" width="1" height="21" fill="#20d040"/><rect x="815" y="279" width="1" height="6" fill="#20d040"/><rect x="1131" y="269" width="1" height="16" fill="#20d040"/><rect x="825" y="280" width="1" height="5" fill="#20d040"/><rect x="629" y="280" width="1" height="5" fill="#20d040"/><rect x="1250" y="281" width="1" height="4" fill="#00e8f0"/><rect x="477" y="282" width="1" height="3" fill="#ff20ff"/><rect x="1205" y="281" width="1" height="4" fill="#20d040"/><rect x="725" y="275" width="1" height="10" fill="#ff20ff"/><rect x="416" y="282" width="1" height="3" fill="#ff20ff"/><rect x="550" y="278" width="1" height="7" fill="#20d040"/><rect x="522" y="271" width="1" height="14" fill="#20d040"/><rect x="475" y="268" width="1" height="17" fill="#20d040"/><rect x="463" y="274" width="1" height="11" fill="#20d040"/><rect x="694" y="281" width="1" height="4" fill="#20d040"/><rect x="1153" y="264" width="1" height="21" fill="#ff20ff"/><rect x="586" y="271" width="1" height="14" fill="#20d040"/><rect x="622" y="280" width="1" height="5" fill="#20d040"/><rect x="679" y="280" width="1" height="5" fill="#20d040"/><rect x="1178" y="279" width="1" height="6" fill="#ffff00"/><rect x="841" y="280" width="1" height="5" fill="#20d040"/><rect x="465" y="272" width="1" height="13" fill="#20d040"/><rect x="1244" y="283" width="1" height="2" fill="#20d040"/><rect x="493" y="277" width="1" height="8" fill="#ff20ff"/><rect x="539" y="283" width="1" height="2" fill="#ff20ff"/><rect x="450" y="282" width="1" height="3" fill="#00e8f0"/><rect x="638" y="283" width="1" height="2" fill="#20d040"/><rect x="1226" y="279" width="1" height="6" fill="#20d040"/><rect x="900" y="284" width="1" height="1" fill="#20d040"/><rect x="422" y="270" width="1" height="15" fill="#20d040"/><rect x="531" y="284" width="1" height="1" fill="#20d040"/><rect x="554" y="283" width="1" height="2" fill="#ff20ff"/><rect x="520" y="282" width="1" height="3" fill="#20d040"/><rect x="458" y="273" width="1" height="12" fill="#20d040"/><rect x="1252" y="282" width="1" height="3" fill="#20d040"/><rect x="573" y="281" width="1" height="4" fill="#ff20ff"/><rect x="491" y="280" width="1" height="5" fill="#ff20ff"/><rect x="670" y="275" width="1" height="10" fill="#20d040"/><rect x="532" y="280" width="1" height="5" fill="#20d040"/><rect x="794" y="283" width="1" height="2" fill="#20d040"/><rect x="685" y="282" width="1" height="3" fill="#ff20ff"/><rect x="740" y="264" width="1" height="21" fill="#20d040"/><rect x="452" y="284" width="1" height="1" fill="#20d040"/><rect x="1253" y="278" width="1" height="7" fill="#20d040"/><rect x="764" y="271" width="1" height="14" fill="#20d040"/><rect x="544" y="271" width="1" height="14" fill="#ff20ff"/><rect x="530" y="276" width="1" height="9" fill="#20d040"/><rect x="927" y="284" width="1" height="1" fill="#00e8f0"/><rect x="882" y="275" width="1" height="10" fill="#20d040"/><rect x="414" y="266" width="1" height="19" fill="#20d040"/><rect x="777" y="280" width="1" height="5" fill="#ff20ff"/><rect x="808" y="277" width="1" height="8" fill="#20d040"/><rect x="457" y="280" width="1" height="5" fill="#20d040"/><rect x="1254" y="275" width="1" height="10" fill="#20d040"/><rect x="548" y="276" width="1" height="9" fill="#20d040"/><rect x="743" y="284" width="1" height="1" fill="#20d040"/><rect x="587" y="284" width="1" height="1" fill="#ff20ff"/><rect x="1186" y="274" width="1" height="11" fill="#20d040"/><rect x="1243" y="282" width="1" height="3" fill="#20d040"/><rect x="1045" y="282" width="1" height="3" fill="#ff20ff"/><rect x="731" y="280" width="1" height="5" fill="#20d040"/><rect x="630" y="281" width="1" height="4" fill="#20d040"/><rect x="771" y="282" width="1" height="3" fill="#ff20ff"/><rect x="700" y="264" width="1" height="21" fill="#20d040"/><rect x="437" y="282" width="1" height="3" fill="#20d040"/><rect x="492" y="280" width="1" height="5" fill="#20d040"/><rect x="543" y="281" width="1" height="4" fill="#20d040"/><rect x="1007" y="276" width="1" height="9" fill="#00e8f0"/><rect x="507" y="283" width="1" height="2" fill="#ff20ff"/><rect x="834" y="274" width="1" height="11" fill="#20d040"/><rect x="736" y="282" width="1" height="3" fill="#ff20ff"/><rect x="435" y="276" width="1" height="9" fill="#20d040"/><rect x="663" y="265" width="1" height="20" fill="#20d040"/><rect x="409" y="283" width="1" height="2" fill="#20d040"/><rect x="453" y="283" width="1" height="2" fill="#20d040"/><rect x="901" y="281" width="1" height="4" fill="#20d040"/><rect x="471" y="281" width="1" height="4" fill="#20d040"/><rect x="1075" y="283" width="1" height="2" fill="#ff20ff"/><rect x="793" y="281" width="1" height="4" fill="#20d040"/><rect x="444" y="284" width="1" height="1" fill="#20d040"/><rect x="528" y="270" width="1" height="15" fill="#20d040"/><rect x="617" y="276" width="1" height="9" fill="#ff20ff"/><rect x="649" y="280" width="1" height="5" fill="#20d040"/><rect x="835" y="264" width="1" height="21" fill="#20d040"/><rect x="527" y="275" width="1" height="10" fill="#20d040"/><rect x="439" y="281" width="1" height="4" fill="#00e8f0"/><rect x="544" y="271" width="1" height="14" fill="#20d040"/><rect x="763" y="276" width="1" height="9" fill="#20d040"/><rect x="871" y="284" width="1" height="1" fill="#20d040"/><rect x="763" y="264" width="1" height="21" fill="#ff20ff"/><rect x="780" y="275" width="1" height="10" fill="#20d040"/><rect x="1179" y="275" width="1" height="10" fill="#00e8f0"/><rect x="674" y="284" width="1" height="1" fill="#20d040"/><rect x="599" y="281" width="1" height="4" fill="#20d040"/><rect x="1050" y="282" width="1" height="3" fill="#ffff00"/><rect x="592" y="281" width="1" height="4" fill="#20d040"/><rect x="545" y="276" width="1" height="9" fill="#00e8f0"/><rect x="1094" y="283" width="1" height="2" fill="#ff20ff"/><rect x="615" y="278" width="1" height="7" fill="#20d040"/><rect x="823" y="282" width="1" height="3" fill="#20d040"/><rect x="514" y="278" width="1" height="7" fill="#20d040"/><rect x="1215" y="271" width="1" height="14" fill="#20d040"/><rect x="1238" y="284" width="1" height="1" fill="#20d040"/><rect x="784" y="278" width="1" height="7" fill="#20d040"/><rect x="584" y="280" width="1" height="5" fill="#20d040"/><rect x="857" y="274" width="1" height="11" fill="#20d040"/><rect x="436" y="272" width="1" height="13" fill="#20d040"/><rect x="878" y="273" width="1" height="12" fill="#20d040"/><rect x="423" y="272" width="1" height="13" fill="#20d040"/><rect x="771" y="283" width="1" height="2" fill="#20d040"/><rect x="1142" y="282" width="1" height="3" fill="#20d040"/><rect x="463" y="281" width="1" height="4" fill="#ff20ff"/><rect x="662" y="275" width="1" height="10" fill="#20d040"/><rect x="697" y="281" width="1" height="4" fill="#20d040"/><rect x="876" y="280" width="1" height="5" fill="#20d040"/><rect x="1214" y="278" width="1" height="7" fill="#20d040"/><rect x="806" y="277" width="1" height="8" fill="#20d040"/><rect x="519" y="275" width="1" height="10" fill="#20d040"/><rect x="549" y="279" width="1" height="6" fill="#20d040"/><rect x="819" y="278" width="1" height="7" fill="#20d040"/><rect x="767" y="278" width="1" height="7" fill="#20d040"/><rect x="726" y="276" width="1" height="9" fill="#ff20ff"/><rect x="455" y="267" width="1" height="18" fill="#20d040"/><rect x="906" y="279" width="1" height="6" fill="#20d040"/><rect x="1223" y="276" width="1" height="9" fill="#20d040"/><rect x="1242" y="280" width="1" height="5" fill="#20d040"/><rect x="1141" y="273" width="1" height="12" fill="#ff20ff"/><rect x="1227" y="269" width="1" height="16" fill="#20d040"/><rect x="547" y="265" width="1" height="20" fill="#20d040"/><rect x="487" y="280" width="1" height="5" fill="#20d040"/><rect x="621" y="276" width="1" height="9" fill="#20d040"/><rect x="992" y="271" width="1" height="14" fill="#00e8f0"/><rect x="1266" y="283" width="1" height="2" fill="#20d040"/><rect x="1186" y="282" width="1" height="3" fill="#ffff00"/><rect x="1062" y="280" width="1" height="5" fill="#ff20ff"/><rect x="1139" y="273" width="1" height="12" fill="#20d040"/><rect x="565" y="284" width="1" height="1" fill="#ff20ff"/><rect x="1119" y="276" width="1" height="9" fill="#ff20ff"/><rect x="442" y="279" width="1" height="6" fill="#20d040"/><rect x="713" y="281" width="1" height="4" fill="#20d040"/><rect x="569" y="281" width="1" height="4" fill="#20d040"/><rect x="433" y="283" width="1" height="2" fill="#20d040"/><rect x="785" y="278" width="1" height="7" fill="#ff20ff"/><rect x="568" y="282" width="1" height="3" fill="#ff20ff"/><rect x="1211" y="282" width="1" height="3" fill="#20d040"/><rect x="903" y="281" width="1" height="4" fill="#20d040"/><rect x="473" y="279" width="1" height="6" fill="#ff20ff"/><rect x="600" y="280" width="1" height="5" fill="#20d040"/><rect x="524" y="276" width="1" height="9" fill="#20d040"/><rect x="624" y="280" width="1" height="5" fill="#20d040"/><rect x="1088" y="277" width="1" height="8" fill="#00e8f0"/><rect x="770" y="282" width="1" height="3" fill="#ff20ff"/><rect x="798" y="274" width="1" height="11" fill="#ff20ff"/><rect x="489" y="281" width="1" height="4" fill="#20d040"/><rect x="507" y="281" width="1" height="4" fill="#20d040"/><rect x="601" y="284" width="1" height="1" fill="#20d040"/><rect x="686" y="282" width="1" height="3" fill="#ff20ff"/><rect x="1231" y="281" width="1" height="4" fill="#20d040"/><rect x="406" y="280" width="1" height="5" fill="#ff20ff"/><rect x="1247" y="279" width="1" height="6" fill="#ff20ff"/><rect x="807" y="282" width="1" height="3" fill="#20d040"/><rect x="408" y="275" width="1" height="10" fill="#20d040"/><rect x="427" y="284" width="1" height="1" fill="#20d040"/><rect x="557" y="281" width="1" height="4" fill="#00e8f0"/><rect x="870" y="278" width="1" height="7" fill="#20d040"/><rect x="1030" y="282" width="1" height="3" fill="#ff20ff"/><rect x="779" y="275" width="1" height="10" fill="#20d040"/><rect x="654" y="280" width="1" height="5" fill="#00e8f0"/><rect x="1126" y="272" width="1" height="13" fill="#20d040"/><rect x="440" y="282" width="1" height="3" fill="#20d040"/><rect x="1178" y="280" width="1" height="5" fill="#20d040"/><rect x="618" y="275" width="1" height="10" fill="#20d040"/><rect x="426" y="277" width="1" height="8" fill="#20d040"/><rect x="760" y="278" width="1" height="7" fill="#20d040"/><rect x="1183" y="284" width="1" height="1" fill="#ff20ff"/><rect x="660" y="277" width="1" height="8" fill="#ff20ff"/><rect x="500" y="283" width="1" height="2" fill="#ff20ff"/><rect x="750" y="283" width="1" height="2" fill="#20d040"/><rect x="1137" y="282" width="1" height="3" fill="#20d040"/><rect x="608" y="273" width="1" height="12" fill="#ff20ff"/><rect x="713" y="282" width="1" height="3" fill="#ff20ff"/><rect x="542" y="281" width="1" height="4" fill="#ff20ff"/><rect x="593" y="281" width="1" height="4" fill="#ff20ff"/><rect x="1132" y="280" width="1" height="5" fill="#20d040"/><rect x="902" y="274" width="1" height="11" fill="#20d040"/><rect x="1110" y="278" width="1" height="7" fill="#ff20ff"/><rect x="1044" y="284" width="1" height="1" fill="#ffff00"/><rect x="725" y="279" width="1" height="6" fill="#20d040"/><rect x="1244" y="282" width="1" height="3" fill="#ff20ff"/><rect x="1078" y="278" width="1" height="7" fill="#ff20ff"/><rect x="616" y="283" width="1" height="2" fill="#ff20ff"/><rect x="580" y="283" width="1" height="2" fill="#00e8f0"/><rect x="497" y="271" width="1" height="14" fill="#ff20ff"/><rect x="491" y="282" width="1" height="3" fill="#20d040"/><rect x="486" y="283" width="1" height="2" fill="#20d040"/><rect x="619" y="272" width="1" height="13" fill="#20d040"/><rect x="1178" y="283" width="1" height="2" fill="#ff20ff"/><rect x="607" y="281" width="1" height="4" fill="#20d040"/><rect x="1173" y="283" width="1" height="2" fill="#20d040"/><rect x="665" y="281" width="1" height="4" fill="#20d040"/><rect x="1163" y="267" width="1" height="18" fill="#20d040"/><rect x="753" y="284" width="1" height="1" fill="#ff20ff"/><rect x="641" y="277" width="1" height="8" fill="#20d040"/><rect x="633" y="266" width="1" height="19" fill="#ff20ff"/><rect x="675" y="279" width="1" height="6" fill="#20d040"/><rect x="656" y="283" width="1" height="2" fill="#20d040"/><rect x="1126" y="282" width="1" height="3" fill="#ff20ff"/><rect x="526" y="284" width="1" height="1" fill="#20d040"/><rect x="1193" y="271" width="1" height="14" fill="#20d040"/><rect x="833" y="278" width="1" height="7" fill="#20d040"/><rect x="1051" y="264" width="1" height="21" fill="#ff20ff"/><rect x="589" y="283" width="1" height="2" fill="#20d040"/><rect x="561" y="284" width="1" height="1" fill="#20d040"/><rect x="460" y="282" width="1" height="3" fill="#ffff00"/><rect x="426" y="281" width="1" height="4" fill="#ff20ff"/><rect x="502" y="280" width="1" height="5" fill="#ff20ff"/><rect x="1235" y="284" width="1" height="1" fill="#20d040"/><rect x="1228" y="279" width="1" height="6" fill="#20d040"/><rect x="529" y="278" width="1" height="7" fill="#20d040"/><rect x="636" y="281" width="1" height="4" fill="#ff20ff"/><rect x="534" y="274" width="1" height="11" fill="#ff20ff"/><rect x="625" y="275" width="1" height="10" fill="#ff20ff"/><rect x="744" y="284" width="1" height="1" fill="#ff20ff"/><rect x="697" y="283" width="1" height="2" fill="#ff20ff"/><rect x="742" y="280" width="1" height="5" fill="#20d040"/><rect x="493" y="277" width="1" height="8" fill="#20d040"/><rect x="658" y="273" width="1" height="12" fill="#20d040"/><rect x="847" y="264" width="1" height="21" fill="#20d040"/><rect x="678" y="284" width="1" height="1" fill="#20d040"/><rect x="681" y="278" width="1" height="7" fill="#00e8f0"/><rect x="481" y="264" width="1" height="21" fill="#20d040"/><rect x="881" y="279" width="1" height="6" fill="#20d040"/><rect x="756" y="282" width="1" height="3" fill="#20d040"/><rect x="1245" y="279" width="1" height="6" fill="#20d040"/><rect x="896" y="282" width="1" height="3" fill="#20d040"/><rect x="573" y="278" width="1" height="7" fill="#20d040"/><rect x="500" y="281" width="1" height="4" fill="#20d040"/><rect x="1151" y="268" width="1" height="17" fill="#ff20ff"/><rect x="724" y="277" width="1" height="8" fill="#ff20ff"/><rect x="757" y="279" width="1" height="6" fill="#20d040"/><rect x="660" y="274" width="1" height="11" fill="#20d040"/><rect x="512" y="275" width="1" height="10" fill="#20d040"/><rect x="499" y="282" width="1" height="3" fill="#ff20ff"/><rect x="1224" y="279" width="1" height="6" fill="#20d040"/><rect x="413" y="283" width="1" height="2" fill="#20d040"/><rect x="505" y="264" width="1" height="21" fill="#ff20ff"/><rect x="591" y="279" width="1" height="6" fill="#20d040"/><rect x="1176" y="280" width="1" height="5" fill="#20d040"/><rect x="479" y="284" width="1" height="1" fill="#00e8f0"/><rect x="558" y="282" width="1" height="3" fill="#20d040"/><rect x="1153" y="282" width="1" height="3" fill="#20d040"/><rect x="718" y="278" width="1" height="7" fill="#ff20ff"/><rect x="907" y="284" width="1" height="1" fill="#20d040"/><rect x="516" y="276" width="1" height="9" fill="#ff20ff"/><rect x="438" y="283" width="1" height="2" fill="#00e8f0"/><rect x="567" y="277" width="1" height="8" fill="#20d040"/><rect x="608" y="264" width="1" height="21" fill="#20d040"/><rect x="412" y="283" width="1" height="2" fill="#20d040"/><rect x="535" y="281" width="1" height="4" fill="#ff20ff"/><rect x="517" y="264" width="1" height="21" fill="#20d040"/><rect x="538" y="282" width="1" height="3" fill="#ff20ff"/><rect x="650" y="264" width="1" height="21" fill="#ff20ff"/><rect x="1265" y="278" width="1" height="7" fill="#20d040"/><rect x="1190" y="276" width="1" height="9" fill="#20d040"/><rect x="575" y="283" width="1" height="2" fill="#00e8f0"/><rect x="1181" y="282" width="1" height="3" fill="#20d040"/><rect x="550" y="264" width="1" height="21" fill="#ff20ff"/><rect x="471" y="282" width="1" height="3" fill="#ff20ff"/><rect x="492" y="282" width="1" height="3" fill="#ff20ff"/><rect x="476" y="282" width="1" height="3" fill="#20d040"/><rect x="605" y="277" width="1" height="8" fill="#20d040"/><rect x="551" y="277" width="1" height="8" fill="#20d040"/><rect x="538" y="281" width="1" height="4" fill="#20d040"/><rect x="483" y="283" width="1" height="2" fill="#00e8f0"/><rect x="669" y="276" width="1" height="9" fill="#20d040"/><rect x="549" y="283" width="1" height="2" fill="#ff20ff"/><rect x="1185" y="273" width="1" height="12" fill="#20d040"/><rect x="976" y="282" width="1" height="3" fill="#ffff00"/><rect x="746" y="276" width="1" height="9" fill="#20d040"/><rect x="516" y="283" width="1" height="2" fill="#20d040"/><rect x="479" y="280" width="1" height="5" fill="#20d040"/><rect x="769" y="283" width="1" height="2" fill="#ff20ff"/><rect x="1250" y="279" width="1" height="6" fill="#20d040"/><rect x="566" y="282" width="1" height="3" fill="#ff20ff"/><rect x="1149" y="279" width="1" height="6" fill="#20d040"/><rect x="1055" y="283" width="1" height="2" fill="#ff20ff"/><rect x="895" y="265" width="1" height="20" fill="#20d040"/><rect x="1174" y="280" width="1" height="5" fill="#ff20ff"/><rect x="455" y="278" width="1" height="7" fill="#ff20ff"/><rect x="1171" y="280" width="1" height="5" fill="#20d040"/><rect x="1188" y="278" width="1" height="7" fill="#20d040"/><rect x="811" y="268" width="1" height="17" fill="#20d040"/><rect x="1162" y="275" width="1" height="10" fill="#20d040"/><rect x="1245" y="278" width="1" height="7" fill="#ff20ff"/><rect x="554" y="281" width="1" height="4" fill="#20d040"/><rect x="692" y="283" width="1" height="2" fill="#20d040"/><rect x="1237" y="279" width="1" height="6" fill="#00e8f0"/><rect x="716" y="283" width="1" height="2" fill="#20d040"/><rect x="667" y="271" width="1" height="14" fill="#20d040"/><rect x="736" y="279" width="1" height="6" fill="#20d040"/><rect x="483" y="273" width="1" height="12" fill="#20d040"/><rect x="836" y="264" width="1" height="21" fill="#20d040"/><rect x="1263" y="284" width="1" height="1" fill="#ff20ff"/><rect x="514" y="283" width="1" height="2" fill="#ff20ff"/><rect x="438" y="281" width="1" height="4" fill="#20d040"/><rect x="416" y="275" width="1" height="10" fill="#20d040"/><rect x="789" y="279" width="1" height="6" fill="#20d040"/><rect x="1226" y="282" width="1" height="3" fill="#ff20ff"/><rect x="689" y="283" width="1" height="2" fill="#ff20ff"/><rect x="1222" y="281" width="1" height="4" fill="#ff20ff"/><rect x="661" y="267" width="1" height="18" fill="#20d040"/><rect x="1035" y="282" width="1" height="3" fill="#ff20ff"/><rect x="690" y="283" width="1" height="2" fill="#ff20ff"/><rect x="704" y="279" width="1" height="6" fill="#20d040"/><rect x="561" y="281" width="1" height="4" fill="#ff20ff"/><rect x="1088" y="284" width="1" height="1" fill="#ff20ff"/><rect x="449" y="277" width="1" height="8" fill="#20d040"/><rect x="714" y="274" width="1" height="11" fill="#20d040"/><rect x="576" y="283" width="1" height="2" fill="#20d040"/><rect x="501" y="281" width="1" height="4" fill="#20d040"/><rect x="889" y="281" width="1" height="4" fill="#20d040"/><rect x="1256" y="283" width="1" height="2" fill="#20d040"/><rect x="1064" y="282" width="1" height="3" fill="#00e8f0"/><rect x="845" y="282" width="1" height="3" fill="#20d040"/><rect x="519" y="281" width="1" height="4" fill="#ffff00"/><rect x="668" y="280" width="1" height="5" fill="#20d040"/><rect x="474" y="280" width="1" height="5" fill="#20d040"/><rect x="503" y="283" width="1" height="2" fill="#20d040"/><rect x="546" y="278" width="1" height="7" fill="#20d040"/><rect x="691" y="281" width="1" height="4" fill="#20d040"/><rect x="419" y="281" width="1" height="4" fill="#20d040"/><rect x="1040" y="270" width="1" height="15" fill="#ff20ff"/><rect x="839" y="277" width="1" height="8" fill="#20d040"/><rect x="886" y="269" width="1" height="16" fill="#20d040"/><rect x="788" y="268" width="1" height="17" fill="#20d040"/><rect x="1151" y="279" width="1" height="6" fill="#20d040"/><rect x="873" y="277" width="1" height="8" fill="#20d040"/><rect x="892" y="282" width="1" height="3" fill="#20d040"/><rect x="791" y="284" width="1" height="1" fill="#ff20ff"/><rect x="423" y="281" width="1" height="4" fill="#ff20ff"/><rect x="598" y="283" width="1" height="2" fill="#20d040"/><rect x="773" y="271" width="1" height="14" fill="#ff20ff"/><rect x="888" y="284" width="1" height="1" fill="#20d040"/><rect x="1195" y="284" width="1" height="1" fill="#20d040"/><rect x="418" y="280" width="1" height="5" fill="#20d040"/><rect x="451" y="273" width="1" height="12" fill="#20d040"/><rect x="562" y="279" width="1" height="6" fill="#20d040"/><rect x="417" y="284" width="1" height="1" fill="#ff20ff"/><rect x="454" y="276" width="1" height="9" fill="#ff20ff"/><rect x="1162" y="281" width="1" height="4" fill="#ff20ff"/><rect x="1222" y="280" width="1" height="5" fill="#20d040"/><rect x="513" y="280" width="1" height="5" fill="#20d040"/><rect x="1181" y="277" width="1" height="8" fill="#ff20ff"/><rect x="795" y="279" width="1" height="6" fill="#20d040"/><rect x="577" y="277" width="1" height="8" fill="#ff20ff"/><rect x="1021" y="278" width="1" height="7" fill="#ff20ff"/><rect x="1170" y="281" width="1" height="4" fill="#ff20ff"/><rect x="1090" y="281" width="1" height="4" fill="#ff20ff"/><rect x="623" y="281" width="1" height="4" fill="#20d040"/><rect x="575" y="283" width="1" height="2" fill="#20d040"/><rect x="718" y="280" width="1" height="5" fill="#20d040"/><rect x="628" y="283" width="1" height="2" fill="#ff20ff"/><rect x="1230" y="281" width="1" height="4" fill="#ff20ff"/><rect x="798" y="280" width="1" height="5" fill="#20d040"/><rect x="523" y="281" width="1" height="4" fill="#ff20ff"/><rect x="609" y="276" width="1" height="9" fill="#20d040"/><rect x="1237" y="271" width="1" height="14" fill="#20d040"/><rect x="1241" y="273" width="1" height="12" fill="#20d040"/><rect x="898" y="281" width="1" height="4" fill="#20d040"/><rect x="446" y="283" width="1" height="2" fill="#20d040"/><rect x="1038" y="278" width="1" height="7" fill="#00e8f0"/><rect x="1166" y="275" width="1" height="10" fill="#20d040"/><rect x="623" y="284" width="1" height="1" fill="#ff20ff"/><rect x="509" y="280" width="1" height="5" fill="#20d040"/><rect x="1210" y="282" width="1" height="3" fill="#20d040"/><rect x="786" y="268" width="1" height="17" fill="#20d040"/><rect x="555" y="264" width="1" height="21" fill="#20d040"/><rect x="1134" y="278" width="1" height="7" fill="#20d040"/><rect x="485" y="283" width="1" height="2" fill="#20d040"/><rect x="1236" y="284" width="1" height="1" fill="#20d040"/><rect x="1202" y="264" width="1" height="21" fill="#20d040"/><rect x="775" y="280" width="1" height="5" fill="#ff20ff"/><rect x="420" y="280" width="1" height="5" fill="#20d040"/><rect x="509" y="280" width="1" height="5" fill="#ff20ff"/><rect x="410" y="282" width="1" height="3" fill="#ff20ff"/><rect x="759" y="283" width="1" height="2" fill="#20d040"/><rect x="1241" y="282" width="1" height="3" fill="#ff20ff"/><rect x="496" y="284" width="1" height="1" fill="#ff20ff"/><rect x="596" y="276" width="1" height="9" fill="#ff20ff"/><rect x="411" y="284" width="1" height="1" fill="#ff20ff"/><rect x="534" y="276" width="1" height="9" fill="#20d040"/><rect x="1096" y="283" width="1" height="2" fill="#ffff00"/><rect x="904" y="276" width="1" height="9" fill="#20d040"/><rect x="717" y="279" width="1" height="6" fill="#20d040"/><rect x="989" y="283" width="1" height="2" fill="#ffff00"/><rect x="1255" y="279" width="1" height="6" fill="#20d040"/><rect x="785" y="279" width="1" height="6" fill="#20d040"/><rect x="969" y="283" width="1" height="2" fill="#00e8f0"/><rect x="1225" y="278" width="1" height="7" fill="#20d040"/><rect x="430" y="283" width="1" height="2" fill="#20d040"/><rect x="518" y="277" width="1" height="8" fill="#ff20ff"/><rect x="1048" y="282" width="1" height="3" fill="#ff20ff"/><rect x="1221" y="281" width="1" height="4" fill="#20d040"/><rect x="468" y="269" width="1" height="16" fill="#20d040"/><rect x="1183" y="283" width="1" height="2" fill="#20d040"/><rect x="659" y="283" width="1" height="2" fill="#20d040"/><rect x="1099" y="284" width="1" height="1" fill="#ff20ff"/><rect x="681" y="280" width="1" height="5" fill="#20d040"/><rect x="688" y="283" width="1" height="2" fill="#20d040"/><rect x="908" y="283" width="1" height="2" fill="#20d040"/><rect x="443" y="277" width="1" height="8" fill="#20d040"/></g><g shape-rendering="crispEdges"><rect x="541" y="269" width="1" height="16" fill="#ffff00"/><rect x="542" y="276" width="1" height="9" fill="#ffff00"/><rect x="543" y="275" width="1" height="10" fill="#ffff00"/><rect x="544" y="283" width="1" height="2" fill="#ffff00"/><rect x="545" y="269" width="1" height="16" fill="#ffff00"/><rect x="546" y="259" width="1" height="26" fill="#ffff00"/><rect x="547" y="282" width="1" height="3" fill="#ffff00"/><rect x="548" y="284" width="1" height="1" fill="#ffff00"/><rect x="549" y="285" width="1" height="0" fill="#ffff00"/><rect x="550" y="273" width="1" height="12" fill="#ffff00"/><rect x="551" y="276" width="1" height="9" fill="#ffff00"/><rect x="552" y="281" width="1" height="4" fill="#ffff00"/></g><g shape-rendering="crispEdges"><rect x="768" y="271" width="1" height="14" fill="#ffff00"/><rect x="769" y="283" width="1" height="2" fill="#ffff00"/><rect x="770" y="268" width="1" height="17" fill="#ffff00"/><rect x="771" y="273" width="1" height="12" fill="#ffff00"/><rect x="772" y="283" width="1" height="2" fill="#ffff00"/><rect x="774" y="283" width="1" height="2" fill="#ffff00"/><rect x="775" y="280" width="1" height="5" fill="#ffff00"/><rect x="777" y="280" width="1" height="5" fill="#ffff00"/><rect x="778" y="279" width="1" height="6" fill="#ffff00"/><rect x="780" y="283" width="1" height="2" fill="#ffff00"/><rect x="781" y="282" width="1" height="3" fill="#ffff00"/><rect x="782" y="284" width="1" height="1" fill="#ffff00"/><rect x="784" y="276" width="1" height="9" fill="#ffff00"/><rect x="785" y="285" width="1" height="0" fill="#ffff00"/><rect x="786" y="257" width="1" height="28" fill="#ffff00"/><rect x="787" y="280" width="1" height="5" fill="#ffff00"/><rect x="788" y="283" width="1" height="2" fill="#ffff00"/><rect x="789" y="278" width="1" height="7" fill="#ffff00"/><rect x="791" y="281" width="1" height="4" fill="#ffff00"/></g><g shape-rendering="crispEdges"><rect x="878" y="271" width="1" height="14" fill="#00e8f0"/><rect x="880" y="284" width="1" height="1" fill="#00e8f0"/><rect x="881" y="282" width="1" height="3" fill="#00e8f0"/><rect x="882" y="282" width="1" height="3" fill="#00e8f0"/><rect x="883" y="271" width="1" height="14" fill="#00e8f0"/><rect x="884" y="283" width="1" height="2" fill="#00e8f0"/><rect x="889" y="264" width="1" height="21" fill="#00e8f0"/><rect x="890" y="274" width="1" height="11" fill="#00e8f0"/><rect x="891" y="278" width="1" height="7" fill="#00e8f0"/><rect x="892" y="281" width="1" height="4" fill="#00e8f0"/><rect x="893" y="267" width="1" height="18" fill="#00e8f0"/></g><g shape-rendering="crispEdges"><rect x="990" y="271" width="1" height="14" fill="#ff20ff"/><rect x="992" y="277" width="1" height="8" fill="#ff20ff"/><rect x="993" y="277" width="1" height="8" fill="#ff20ff"/><rect x="994" y="282" width="1" height="3" fill="#ff20ff"/><rect x="995" y="275" width="1" height="10" fill="#ff20ff"/><rect x="996" y="270" width="1" height="15" fill="#ff20ff"/><rect x="997" y="273" width="1" height="12" fill="#ff20ff"/><rect x="998" y="283" width="1" height="2" fill="#ff20ff"/><rect x="999" y="284" width="1" height="1" fill="#ff20ff"/><rect x="1001" y="272" width="1" height="13" fill="#ff20ff"/><rect x="1002" y="267" width="1" height="18" fill="#ff20ff"/><rect x="1003" y="273" width="1" height="12" fill="#ff20ff"/><rect x="1004" y="279" width="1" height="6" fill="#ff20ff"/><rect x="1005" y="281" width="1" height="4" fill="#ff20ff"/><rect x="1006" y="273" width="1" height="12" fill="#ff20ff"/><rect x="1007" y="283" width="1" height="2" fill="#ff20ff"/><rect x="1008" y="282" width="1" height="3" fill="#ff20ff"/><rect x="1009" y="283" width="1" height="2" fill="#ff20ff"/><rect x="1010" y="274" width="1" height="11" fill="#ff20ff"/><rect x="1011" y="278" width="1" height="7" fill="#ff20ff"/><rect x="1012" y="282" width="1" height="3" fill="#ff20ff"/><rect x="1013" y="261" width="1" height="24" fill="#ff20ff"/><rect x="1014" y="280" width="1" height="5" fill="#ff20ff"/><rect x="1015" y="282" width="1" height="3" fill="#ff20ff"/><rect x="1017" y="278" width="1" height="7" fill="#ff20ff"/><rect x="1019" y="283" width="1" height="2" fill="#ff20ff"/><rect x="1020" y="281" width="1" height="4" fill="#ff20ff"/><rect x="1021" y="283" width="1" height="2" fill="#ff20ff"/><rect x="1023" y="275" width="1" height="10" fill="#ff20ff"/><rect x="1024" y="285" width="1" height="0" fill="#ff20ff"/><rect x="1025" y="283" width="1" height="2" fill="#ff20ff"/><rect x="1027" y="279" width="1" height="6" fill="#ff20ff"/><rect x="1029" y="277" width="1" height="8" fill="#ff20ff"/></g><g shape-rendering="crispEdges"><rect x="1109" y="281" width="1" height="4" fill="#20d040"/><rect x="1111" y="267" width="1" height="18" fill="#20d040"/><rect x="1114" y="276" width="1" height="9" fill="#20d040"/><rect x="1115" y="283" width="1" height="2" fill="#20d040"/><rect x="1118" y="276" width="1" height="9" fill="#20d040"/><rect x="1119" y="281" width="1" height="4" fill="#20d040"/><rect x="1120" y="282" width="1" height="3" fill="#20d040"/><rect x="1121" y="268" width="1" height="17" fill="#20d040"/><rect x="1122" y="273" width="1" height="12" fill="#20d040"/><rect x="1124" y="284" width="1" height="1" fill="#20d040"/><rect x="1125" y="277" width="1" height="8" fill="#20d040"/><rect x="1126" y="279" width="1" height="6" fill="#20d040"/><rect x="1127" y="282" width="1" height="3" fill="#20d040"/><rect x="1128" y="283" width="1" height="2" fill="#20d040"/><rect x="1130" y="278" width="1" height="7" fill="#20d040"/><rect x="1131" y="275" width="1" height="10" fill="#20d040"/><rect x="1132" y="275" width="1" height="10" fill="#20d040"/><rect x="1133" y="276" width="1" height="9" fill="#20d040"/><rect x="1134" y="280" width="1" height="5" fill="#20d040"/><rect x="1135" y="283" width="1" height="2" fill="#20d040"/><rect x="1136" y="274" width="1" height="11" fill="#20d040"/><rect x="1138" y="285" width="1" height="0" fill="#20d040"/><rect x="1141" y="277" width="1" height="8" fill="#20d040"/></g><path d="M536.0 295.6 L536.2 298.0 L536.3 295.9 L536.5 296.8 L536.8 294.6 L537.0 298.7 L537.2 295.4 L537.5 296.0 L537.8 296.5 L538.1 292.1 L538.4 290.9 L538.7 287.2 L539.0 291.4 L539.4 284.6 L539.7 285.8 L540.0 283.2 L540.4 286.6 L540.7 283.3 L541.0 282.6 L541.4 281.7 L541.7 283.1 L542.1 283.2 L542.4 277.3 L542.7 280.4 L543.0 278.1 L543.3 277.0 L543.6 278.2 L543.9 271.7 L544.2 271.6 L544.5 271.8 L544.8 269.8 L545.2 268.9 L545.5 267.5 L545.8 270.7 L546.1 270.0 L546.4 268.5 L546.7 267.1 L547.0 264.4 L547.3 263.1 L547.7 262.7 L548.0 260.4 L548.3 260.1 L548.6 260.6 L548.9 259.6 L549.2 259.6 L549.5 258.5 L549.8 256.5 L550.0 257.8 L550.3 256.0 L550.6 255.5 L551.0 254.4 L551.4 253.6 L551.8 253.6 L552.1 252.9 L552.4 251.4 L552.8 251.5 L553.1 250.8 L553.5 250.2 L553.8 249.4 L554.1 249.0 L554.5 248.3 L554.8 247.6 L555.2 246.8 L555.6 246.0 L556.1 245.0 L556.5 244.0 L556.8 243.4 L557.0 242.7 L557.3 242.0 L557.6 241.2 L557.9 240.5 L558.2 239.7 L558.5 238.9 L558.8 238.1 L559.1 237.3 L559.5 236.4 L559.8 235.6 L560.1 234.7 L560.4 233.8 L560.8 232.9 L561.1 232.0 L561.4 231.1 L561.8 230.2 L562.1 229.3 L562.4 228.4 L562.8 227.5 L563.1 226.6 L563.4 225.7 L563.8 224.8 L564.1 223.9 L564.4 223.0 L564.8 222.1 L565.1 221.3 L565.4 220.4 L565.7 219.6 L566.0 218.7 L566.3 217.9 L566.7 217.1 L567.0 216.3 L567.3 215.4 L567.6 214.6 L567.9 213.8 L568.2 213.0 L568.5 212.2 L568.9 211.4 L569.2 210.6 L569.5 209.8 L569.8 209.0 L570.1 208.2 L570.4 207.3 L570.7 206.5 L571.1 205.7 L571.4 204.8 L571.7 204.0 L572.0 203.1 L572.3 202.2 L572.6 201.4 L572.9 200.5 L573.3 199.6 L573.6 198.7 L573.9 197.7 L574.2 196.8 L574.5 195.9 L574.8 195.1 L575.1 194.2 L575.3 193.3 L575.6 192.4 L575.9 191.5 L576.2 190.5 L576.5 189.6 L576.8 188.7 L577.1 187.7 L577.4 186.8 L577.6 185.8 L577.9 184.8 L578.2 183.9 L578.5 182.9 L578.8 181.9 L579.1 181.0 L579.4 180.0 L579.7 179.0 L579.9 178.0 L580.2 177.0 L580.5 176.0 L580.8 175.1 L581.1 174.1 L581.4 173.1 L581.7 172.1 L582.0 171.1 L582.2 170.2 L582.5 169.2 L582.8 168.3 L583.1 167.3 L583.4 166.3 L583.7 165.4 L584.0 164.4 L584.3 163.5 L584.6 162.5 L584.8 161.6 L585.1 160.6 L585.4 159.7 L585.7 158.7 L586.0 157.8 L586.3 156.8 L586.6 155.9 L586.9 154.9 L587.2 154.0 L587.5 153.0 L587.8 152.1 L588.1 151.1 L588.4 150.2 L588.7 149.2 L589.0 148.3 L589.2 147.3 L589.5 146.4 L589.8 145.4 L590.1 144.5 L590.4 143.5 L590.7 142.6 L590.9 141.6 L591.2 140.7 L591.5 139.7 L591.7 138.8 L592.0 137.8 L592.3 136.7 L592.6 135.7 L592.8 134.6 L593.1 133.5 L593.4 132.4 L593.7 131.3 L593.9 130.1 L594.2 129.0 L594.5 127.9 L594.7 126.8 L595.0 125.7 L595.2 124.5 L595.5 123.4 L595.7 122.3 L596.0 121.2 L596.2 120.1 L596.5 119.0 L596.8 118.0 L597.0 116.9 L597.3 115.9 L597.5 114.8 L597.8 113.8 L598.0 112.9 L598.3 111.9 L598.5 111.0 L598.8 110.0 L599.0 109.2 L599.3 108.3 L599.6 107.2 L600.0 106.2 L600.3 105.2 L600.6 104.2 L600.9 103.3 L601.3 102.4 L601.6 101.5 L601.9 100.6 L602.3 99.8 L602.6 99.0 L602.9 98.2 L603.2 97.4 L603.6 96.6 L603.9 95.9 L604.2 95.2 L604.6 94.5 L604.9 93.8 L605.3 93.1 L605.6 92.5 L606.0 91.8 L606.3 91.2 L606.7 90.6 L607.1 90.0 L607.5 89.4 L607.8 88.8 L608.2 88.3 L608.6 87.7 L608.9 87.2 L609.3 86.7 L609.7 86.3 L610.1 85.8 L610.5 85.4 L610.9 85.0 L611.3 84.6 L611.7 84.2 L612.1 83.9 L612.5 83.5 L613.0 83.2 L613.4 82.9 L613.9 82.6 L614.4 82.3 L615.0 82.1 L615.5 81.8 L615.9 81.6 L616.3 81.5 L616.6 81.3 L616.9 81.2 L617.2 81.1 L617.5 81.0 L617.8 80.9 L618.1 80.8 L618.4 80.7 L618.7 80.7 L619.0 80.6 L619.3 80.6 L619.6 80.5 L620.0 80.5 L620.4 80.5 L620.8 80.4 L621.2 80.4 L621.7 80.4 L622.2 80.4 L622.7 80.4 L623.3 80.4 L623.9 80.3 L624.6 80.3 L625.3 80.3 L626.1 80.3 L627.0 80.3 L627.9 80.3 L628.9 80.2 L630.0 80.2 L630.3 80.2 L630.7 80.2 L631.0 80.2 L631.4 80.2 L631.7 80.2 L632.1 80.1 L632.5 80.1 L632.9 80.1 L633.3 80.1 L633.7 80.1 L634.1 80.1 L634.5 80.1 L634.9 80.1 L635.4 80.1 L635.8 80.1 L636.3 80.1 L636.7 80.0 L637.2 80.0 L637.7 80.0 L638.1 80.0 L638.6 80.0 L639.1 80.0 L639.6 80.0 L640.1 80.0 L640.6 80.0 L641.1 80.0 L641.6 80.0 L642.2 80.0 L642.7 80.0 L643.2 80.0 L643.7 80.0 L644.3 79.9 L644.8 79.9 L645.4 79.9 L645.9 79.9 L646.5 79.9 L647.0 79.9 L647.6 79.9 L648.1 79.9 L648.7 79.9 L649.3 79.9 L649.8 79.9 L650.4 79.9 L651.0 79.9 L651.5 79.9 L652.1 79.9 L652.7 79.9 L653.3 79.9 L653.8 79.9 L654.4 79.9 L655.0 79.9 L655.6 79.9 L656.1 79.9 L656.7 79.8 L657.3 79.8 L657.9 79.8 L658.4 79.8 L659.0 79.8 L659.6 79.8 L660.2 79.8 L660.7 79.8 L661.3 79.8 L661.9 79.8 L662.4 79.8 L663.0 79.8 L663.6 79.8 L664.1 79.8 L664.7 79.8 L665.2 79.8 L665.8 79.8 L666.3 79.8 L666.9 79.8 L667.4 79.8 L668.0 79.8 L668.5 79.8 L669.0 79.8 L669.5 79.8 L670.1 79.8 L670.6 79.8 L671.1 79.8 L671.6 79.8 L672.1 79.8 L672.6 79.8 L673.1 79.8 L673.6 79.8 L674.0 79.8 L674.5 79.8 L675.0 79.8 L675.4 79.8 L675.9 79.8 L676.3 79.8 L676.8 79.8 L677.2 79.8 L677.6 79.8 L678.0 79.8 L678.5 79.8 L678.9 79.8 L679.2 79.8 L679.6 79.8 L680.0 79.8 L680.8 79.8 L681.5 79.8 L682.2 79.8 L683.0 79.8 L683.7 79.8 L684.4 79.8 L685.1 79.8 L685.7 79.8 L686.4 79.8 L687.0 79.8 L687.7 79.8 L688.3 79.8 L688.9 79.9 L689.5 79.9 L690.1 79.9 L690.6 79.9 L691.2 79.9 L691.7 79.9 L692.3 79.9 L692.8 79.9 L693.3 79.9 L693.8 79.9 L694.3 79.9 L694.8 79.9 L695.3 80.0 L695.8 80.0 L696.2 80.0 L696.7 80.0 L697.1 80.0 L697.5 80.0 L698.0 80.0 L698.4 80.1 L698.8 80.1 L699.2 80.1 L699.6 80.1 L699.9 80.1 L700.3 80.1 L700.7 80.2 L701.0 80.2 L701.4 80.2 L701.7 80.2 L702.1 80.2 L702.4 80.3 L702.7 80.3 L703.1 80.3 L703.4 80.3 L703.7 80.4 L704.0 80.4 L705.2 80.5 L706.1 80.6 L706.7 80.8 L707.2 80.9 L707.6 81.1 L707.8 81.2 L708.0 81.4 L708.2 81.6 L708.3 81.9 L708.6 82.2 L709.0 82.5 L709.4 82.8 L709.8 83.2 L710.3 83.6 L710.7 84.0 L711.1 84.4 L711.6 84.9 L712.0 85.4 L712.4 85.9 L712.8 86.4 L713.2 86.9 L713.6 87.4 L714.0 88.0 L714.4 88.5 L714.7 89.1 L715.0 89.6 L715.3 90.1 L715.7 90.6 L716.0 91.2 L716.3 91.8 L716.6 92.5 L716.9 93.2 L717.2 94.0 L717.6 95.0 L718.0 96.0 L718.2 96.7 L718.5 97.4 L718.7 98.1 L719.0 98.8 L719.2 99.6 L719.5 100.4 L719.7 101.2 L720.0 102.0 L720.2 102.9 L720.5 103.8 L720.8 104.7 L721.1 105.7 L721.4 106.6 L721.7 107.7 L722.0 108.7 L722.3 109.8 L722.6 110.9 L723.0 112.0 L723.3 113.2 L723.7 114.4 L723.9 115.2 L724.2 115.9 L724.4 116.7 L724.7 117.5 L724.9 118.4 L725.2 119.2 L725.4 120.1 L725.7 121.0 L726.0 121.9 L726.3 122.8 L726.5 123.7 L726.8 124.6 L727.1 125.6 L727.4 126.5 L727.7 127.5 L728.0 128.4 L728.3 129.4 L728.6 130.4 L728.9 131.4 L729.2 132.3 L729.5 133.3 L729.8 134.3 L730.1 135.3 L730.4 136.3 L730.7 137.3 L731.0 138.3 L731.3 139.2 L731.6 140.2 L731.9 141.2 L732.2 142.2 L732.4 143.1 L732.7 144.1 L733.0 145.0 L733.3 145.9 L733.5 146.9 L733.8 147.8 L734.1 148.7 L734.3 149.7 L734.6 150.6 L734.9 151.5 L735.1 152.5 L735.4 153.4 L735.6 154.4 L735.9 155.3 L736.1 156.2 L736.4 157.2 L736.7 158.1 L736.9 159.1 L737.2 160.0 L737.4 160.9 L737.7 161.9 L737.9 162.8 L738.2 163.8 L738.5 164.7 L738.7 165.7 L739.0 166.6 L739.3 167.5 L739.6 168.5 L739.9 169.4 L740.1 170.4 L740.4 171.3 L740.7 172.2 L741.0 173.2 L741.4 174.1 L741.7 175.1 L742.0 176.0 L742.3 176.8 L742.5 177.5 L742.8 178.3 L743.1 179.1 L743.4 179.9 L743.7 180.6 L744.0 181.4 L744.3 182.2 L744.6 182.9 L744.9 183.7 L745.2 184.4 L745.5 185.2 L745.8 186.0 L746.2 186.7 L746.5 187.5 L746.8 188.3 L747.1 189.0 L747.4 189.8 L747.8 190.5 L748.1 191.3 L748.4 192.1 L748.7 192.8 L749.1 193.6 L749.4 194.4 L749.7 195.2 L750.1 195.9 L750.4 196.7 L750.7 197.5 L751.1 198.3 L751.4 199.0 L751.7 199.8 L752.0 200.6 L752.4 201.4 L752.7 202.2 L753.0 203.0 L753.3 203.8 L753.7 204.6 L754.0 205.4 L754.3 206.2 L754.6 207.0 L754.9 207.8 L755.2 208.6 L755.5 209.4 L755.8 210.3 L756.2 211.1 L756.5 212.0 L756.8 212.8 L757.1 213.7 L757.5 214.6 L757.8 215.4 L758.1 216.3 L758.4 217.2 L758.8 218.1 L759.1 219.0 L759.4 219.9 L759.8 220.8 L760.1 221.7 L760.4 222.6 L760.7 223.5 L761.1 224.3 L761.4 225.2 L761.7 226.1 L762.0 227.0 L762.3 227.9 L762.6 228.7 L762.9 229.6 L763.2 230.4 L763.5 231.3 L763.8 232.1 L764.1 232.9 L764.4 233.7 L764.7 234.5 L765.0 235.3 L765.3 236.1 L765.5 236.8 L765.8 237.6 L766.0 238.3 L766.3 239.0 L766.5 239.7 L766.8 240.4 L767.0 241.0 L767.4 242.2 L767.8 243.4 L768.2 244.5 L768.5 245.5 L768.9 246.5 L769.2 247.5 L769.5 248.4 L769.8 249.1 L770.0 250.1 L770.3 250.6 L770.5 251.4 L770.8 252.8 L771.0 252.9 L771.2 254.4 L771.5 254.3 L771.7 254.5 L772.0 255.8 L772.2 255.9 L772.5 256.6 L772.7 258.7 L773.0 259.6 L773.3 258.8 L773.6 261.5 L773.9 261.6 L774.2 260.6 L774.6 261.3 L774.9 264.5 L775.2 266.2 L775.5 266.6 L775.8 266.3 L776.1 264.3 L776.4 268.5 L776.7 265.6 L777.0 270.4 L777.3 267.1 L777.7 273.3 L778.0 271.1 L778.3 270.3 L778.7 270.3 L779.0 272.4 L779.3 276.4 L779.5 274.0 L779.8 273.3 L780.1 279.6 L780.4 275.9 L780.7 277.0 L781.0 278.4 L781.3 279.0 L781.6 280.9 L781.9 280.6 L782.3 281.3 L782.6 283.3 L782.9 286.6 L783.2 292.0 L783.5 292.4 L783.8 291.2 L784.1 289.1 L784.3 296.3 L784.6 292.0 L784.8 294.9 L785.1 296.1 L785.3 295.8 L785.5 295.0 L785.7 301.1 L785.9 295.3 L786.0 297.7" fill="none" stroke="#ffff00" stroke-width="1.2" stroke-linejoin="round" shape-rendering="crispEdges"/><path d="M692.0 300.5 L692.1 296.5 L692.2 293.7 L692.3 293.3 L692.5 297.6 L692.6 294.9 L692.8 292.5 L693.0 295.0 L693.2 292.0 L693.4 286.7 L693.6 284.9 L693.9 288.3 L694.1 282.0 L694.4 280.4 L694.5 277.8 L694.6 281.3 L694.7 277.5 L694.8 277.9 L694.9 273.5 L695.0 274.2 L695.1 268.8 L695.2 267.9 L695.4 267.7 L695.5 266.3 L695.6 268.2 L695.7 263.2 L695.8 263.1 L696.0 262.7 L696.1 259.9 L696.2 259.3 L696.3 257.0 L696.5 255.4 L696.6 252.8 L696.7 251.4 L696.9 250.2 L697.0 248.3 L697.1 246.6 L697.3 244.9 L697.4 243.2 L697.5 241.5 L697.7 239.8 L697.8 238.1 L698.0 236.5 L698.1 234.8 L698.3 233.2 L698.4 231.6 L698.6 230.0 L698.7 228.5 L698.9 227.0 L699.0 225.5 L699.2 224.0 L699.3 222.6 L699.5 221.1 L699.6 219.7 L699.8 218.3 L699.9 216.8 L700.1 215.4 L700.3 214.0 L700.4 212.6 L700.6 211.1 L700.8 209.7 L700.9 208.3 L701.1 206.9 L701.3 205.5 L701.5 204.1 L701.6 202.7 L701.8 201.3 L702.0 200.0 L702.2 198.6 L702.4 197.2 L702.5 195.9 L702.7 194.5 L702.9 193.1 L703.1 191.8 L703.3 190.5 L703.4 189.1 L703.6 187.8 L703.8 186.4 L704.0 185.1 L704.1 183.8 L704.3 182.5 L704.5 181.2 L704.7 179.9 L704.9 178.6 L705.0 177.3 L705.2 176.0 L705.4 174.6 L705.6 173.2 L705.8 171.8 L706.0 170.4 L706.1 169.1 L706.3 167.7 L706.5 166.3 L706.7 164.9 L706.9 163.6 L707.1 162.2 L707.3 160.9 L707.5 159.5 L707.6 158.2 L707.8 156.9 L708.0 155.6 L708.2 154.2 L708.4 152.9 L708.6 151.6 L708.8 150.3 L709.0 149.1 L709.2 147.8 L709.3 146.5 L709.5 145.2 L709.7 144.0 L709.9 142.7 L710.1 141.5 L710.3 140.2 L710.5 139.0 L710.7 137.8 L710.8 136.6 L711.0 135.4 L711.2 134.2 L711.4 133.0 L711.6 131.6 L711.8 130.3 L712.1 128.9 L712.3 127.5 L712.5 126.2 L712.7 124.8 L712.9 123.4 L713.2 122.0 L713.4 120.7 L713.6 119.3 L713.9 118.0 L714.1 116.6 L714.3 115.3 L714.5 114.0 L714.8 112.7 L715.0 111.5 L715.2 110.2 L715.4 109.0 L715.6 107.8 L715.8 106.7 L716.0 105.6 L716.2 104.5 L716.4 103.4 L716.6 102.4 L716.8 101.4 L717.0 100.5 L717.2 99.6 L717.3 98.8 L717.5 98.0 L717.9 96.0 L718.3 94.5 L718.6 93.2 L718.9 92.3 L719.2 91.6 L719.4 91.0 L719.7 90.6 L719.9 90.1 L720.2 89.6 L720.5 89.0 L720.9 88.3 L721.2 87.7 L721.6 87.1 L721.9 86.6 L722.3 86.2 L722.7 85.7 L723.1 85.3 L723.5 84.9 L724.0 84.5 L724.4 84.2 L724.8 83.8 L725.3 83.5 L725.7 83.2 L726.2 82.9 L726.6 82.7 L727.1 82.4 L727.6 82.1 L728.1 81.9 L728.5 81.7 L729.0 81.5 L729.3 81.3 L729.3 81.1 L729.2 81.0 L729.0 80.8 L728.9 80.7 L729.0 80.6 L729.5 80.5 L730.4 80.4 L731.8 80.4 L734.0 80.3 L734.3 80.3 L734.6 80.3 L734.9 80.3 L735.2 80.3 L735.5 80.3 L735.9 80.3 L736.2 80.3 L736.5 80.3 L736.9 80.2 L737.3 80.2 L737.7 80.2 L738.0 80.2 L738.4 80.2 L738.9 80.2 L739.3 80.2 L739.7 80.2 L740.1 80.2 L740.6 80.2 L741.0 80.2 L741.4 80.2 L741.9 80.2 L742.4 80.2 L742.8 80.2 L743.3 80.2 L743.8 80.2 L744.3 80.2 L744.8 80.2 L745.3 80.2 L745.8 80.2 L746.3 80.2 L746.8 80.2 L747.3 80.2 L747.9 80.2 L748.4 80.2 L748.9 80.2 L749.5 80.2 L750.0 80.2 L750.6 80.2 L751.1 80.2 L751.7 80.2 L752.2 80.2 L752.8 80.2 L753.3 80.2 L753.9 80.2 L754.5 80.2 L755.0 80.2 L755.6 80.2 L756.2 80.2 L756.8 80.2 L757.3 80.2 L757.9 80.2 L758.5 80.2 L759.1 80.2 L759.6 80.2 L760.2 80.2 L760.8 80.2 L761.4 80.2 L761.9 80.2 L762.5 80.2 L763.1 80.2 L763.7 80.2 L764.2 80.2 L764.8 80.2 L765.4 80.2 L766.0 80.2 L766.5 80.2 L767.1 80.2 L767.7 80.2 L768.2 80.2 L768.8 80.2 L769.3 80.2 L769.9 80.2 L770.4 80.2 L771.0 80.2 L771.5 80.2 L772.1 80.2 L772.6 80.2 L773.1 80.2 L773.7 80.2 L774.2 80.2 L774.7 80.2 L775.2 80.2 L775.7 80.2 L776.2 80.2 L776.7 80.2 L777.2 80.2 L777.7 80.2 L778.2 80.2 L778.6 80.2 L779.1 80.2 L779.5 80.2 L780.0 80.2 L780.6 80.2 L781.1 80.2 L781.7 80.2 L782.3 80.2 L782.9 80.2 L783.5 80.2 L784.0 80.2 L784.6 80.2 L785.2 80.2 L785.8 80.2 L786.3 80.1 L786.9 80.1 L787.5 80.1 L788.1 80.1 L788.7 80.1 L789.2 80.1 L789.8 80.1 L790.4 80.1 L791.0 80.0 L791.5 80.0 L792.1 80.0 L792.7 80.0 L793.3 80.0 L793.8 80.0 L794.4 80.0 L794.9 79.9 L795.5 79.9 L796.1 79.9 L796.6 79.9 L797.2 79.9 L797.7 79.9 L798.3 79.9 L798.8 79.9 L799.4 79.8 L799.9 79.8 L800.4 79.8 L801.0 79.8 L801.5 79.8 L802.0 79.8 L802.6 79.8 L803.1 79.8 L803.6 79.8 L804.1 79.8 L804.6 79.8 L805.1 79.8 L805.6 79.8 L806.1 79.8 L806.6 79.8 L807.0 79.8 L807.5 79.8 L808.0 79.8 L808.4 79.8 L808.9 79.8 L809.4 79.8 L809.8 79.8 L810.2 79.9 L810.7 79.9 L811.1 79.9 L811.5 79.9 L811.9 79.9 L812.3 80.0 L812.7 80.0 L813.1 80.0 L813.5 80.1 L813.9 80.1 L814.3 80.1 L814.6 80.2 L815.0 80.2 L815.3 80.2 L815.6 80.3 L816.0 80.3 L816.3 80.4 L817.3 80.6 L818.3 80.8 L819.1 81.0 L819.8 81.2 L820.4 81.4 L821.0 81.6 L821.5 81.8 L822.0 82.1 L822.3 82.3 L822.7 82.6 L823.0 82.9 L823.3 83.3 L823.5 83.6 L823.7 84.1 L824.0 84.5 L824.2 85.0 L824.4 85.5 L824.7 86.0 L824.9 86.6 L825.3 87.3 L825.6 88.0 L825.9 88.7 L826.2 89.4 L826.6 90.2 L826.9 91.1 L827.2 92.0 L827.4 92.9 L827.7 93.9 L828.0 94.9 L828.3 95.9 L828.5 97.0 L828.8 98.1 L829.0 99.1 L829.3 100.2 L829.5 101.4 L829.8 102.5 L830.0 103.6 L830.2 104.7 L830.5 105.8 L830.7 106.9 L831.0 107.9 L831.2 109.0 L831.5 110.0 L831.7 111.0 L832.0 112.1 L832.2 113.1 L832.5 114.1 L832.7 115.1 L832.9 116.0 L833.2 117.0 L833.4 118.0 L833.6 118.9 L833.8 119.9 L834.0 120.8 L834.3 121.8 L834.5 122.8 L834.7 123.8 L835.0 124.8 L835.2 125.9 L835.5 127.0 L835.8 128.1 L836.0 129.2 L836.3 130.4 L836.7 131.7 L837.0 133.0 L837.2 133.8 L837.4 134.6 L837.7 135.5 L837.9 136.4 L838.1 137.3 L838.4 138.2 L838.6 139.1 L838.9 140.1 L839.1 141.0 L839.4 142.0 L839.6 143.0 L839.9 144.0 L840.2 145.0 L840.4 146.0 L840.7 147.1 L841.0 148.1 L841.3 149.1 L841.5 150.2 L841.8 151.2 L842.1 152.2 L842.4 153.3 L842.7 154.3 L843.0 155.3 L843.2 156.4 L843.5 157.4 L843.8 158.4 L844.1 159.4 L844.4 160.4 L844.7 161.4 L844.9 162.4 L845.2 163.3 L845.5 164.3 L845.8 165.2 L846.0 166.1 L846.3 167.0 L846.6 168.0 L846.9 169.0 L847.2 169.9 L847.5 170.9 L847.8 171.9 L848.1 172.8 L848.4 173.7 L848.7 174.7 L849.0 175.6 L849.2 176.5 L849.5 177.4 L849.8 178.3 L850.1 179.2 L850.4 180.1 L850.7 181.0 L851.0 181.9 L851.3 182.7 L851.6 183.6 L851.9 184.5 L852.2 185.3 L852.5 186.2 L852.8 187.1 L853.1 187.9 L853.4 188.8 L853.7 189.6 L854.0 190.5 L854.3 191.3 L854.6 192.2 L855.0 193.0 L855.3 193.9 L855.6 194.7 L855.9 195.5 L856.2 196.3 L856.5 197.1 L856.8 197.8 L857.2 198.6 L857.5 199.4 L857.8 200.1 L858.1 200.9 L858.4 201.7 L858.8 202.4 L859.1 203.2 L859.4 203.9 L859.7 204.7 L860.1 205.4 L860.4 206.1 L860.7 206.9 L861.1 207.6 L861.4 208.3 L861.7 209.1 L862.1 209.8 L862.4 210.6 L862.7 211.3 L863.1 212.0 L863.4 212.8 L863.7 213.5 L864.1 214.2 L864.4 215.0 L864.7 215.7 L865.1 216.4 L865.4 217.2 L865.7 217.9 L866.1 218.7 L866.4 219.4 L866.7 220.2 L867.1 220.9 L867.4 221.7 L867.7 222.4 L868.1 223.2 L868.4 224.0 L868.8 224.8 L869.1 225.6 L869.5 226.4 L869.8 227.1 L870.2 227.9 L870.5 228.7 L870.9 229.5 L871.2 230.3 L871.6 231.1 L871.9 231.9 L872.3 232.7 L872.6 233.4 L872.9 234.2 L873.3 235.0 L873.6 235.7 L873.9 236.5 L874.3 237.2 L874.6 237.9 L874.9 238.7 L875.2 239.4 L875.5 240.1 L875.8 240.8 L876.1 241.4 L876.4 242.1 L876.7 242.7 L876.9 243.4 L877.2 244.0 L877.6 245.0 L878.0 246.0 L878.4 246.9 L878.8 247.8 L879.2 248.6 L879.5 249.4 L879.8 250.4 L880.1 250.8 L880.4 252.0 L880.7 252.6 L881.0 253.2 L881.3 254.3 L881.6 254.6 L881.9 255.0 L882.2 256.5 L882.5 257.1 L882.8 257.6 L883.1 259.0 L883.4 259.3 L883.7 261.3 L884.0 261.0 L884.3 263.3 L884.6 262.5 L884.9 264.9 L885.2 262.4 L885.5 267.6 L885.8 264.6 L886.1 266.9 L886.4 267.1 L886.7 271.2 L887.0 271.4 L887.3 270.9 L887.6 269.5 L887.9 273.1 L888.2 277.0 L888.4 278.0 L888.7 274.8 L888.9 281.0 L889.2 276.4 L889.4 282.6 L889.6 276.9 L889.9 277.9 L890.2 284.2 L890.5 283.4 L890.7 287.6 L890.9 288.3 L891.1 287.6 L891.3 294.9 L891.4 289.3 L891.6 293.0 L891.7 296.5 L891.8 298.1 L891.9 296.8 L892.0 297.2" fill="none" stroke="#00e8f0" stroke-width="1.2" stroke-linejoin="round" shape-rendering="crispEdges"/><path d="M790.0 296.4 L790.1 301.0 L790.2 296.9 L790.4 294.7 L790.5 299.3 L790.6 297.7 L790.8 297.6 L790.9 294.1 L791.1 296.6 L791.3 290.9 L791.4 293.8 L791.6 293.2 L791.8 289.2 L792.0 287.3 L792.2 287.1 L792.4 286.4 L792.6 281.6 L792.8 286.4 L793.0 283.0 L793.3 283.3 L793.5 281.4 L793.7 274.7 L794.0 272.3 L794.2 272.8 L794.4 275.3 L794.7 274.9 L794.9 269.0 L795.1 268.4 L795.4 265.2 L795.6 265.8 L795.9 263.6 L796.1 264.5 L796.3 263.1 L796.6 262.8 L796.8 258.7 L797.1 258.1 L797.3 256.7 L797.6 256.5 L797.8 254.8 L798.0 253.9 L798.3 251.9 L798.5 251.1 L798.7 250.3 L798.9 249.2 L799.2 248.1 L799.4 247.0 L799.6 246.0 L799.8 245.0 L800.0 244.0 L800.3 242.7 L800.6 241.5 L800.8 240.3 L801.1 239.2 L801.4 238.0 L801.7 236.9 L801.9 235.9 L802.2 234.9 L802.5 233.8 L802.8 232.9 L803.0 231.9 L803.3 230.9 L803.6 230.0 L803.8 229.1 L804.1 228.2 L804.4 227.3 L804.7 226.4 L804.9 225.6 L805.2 224.7 L805.5 223.8 L805.7 223.0 L806.0 222.1 L806.3 221.3 L806.5 220.4 L806.8 219.5 L807.0 218.6 L807.3 217.7 L807.6 216.8 L807.8 215.9 L808.1 215.0 L808.3 214.0 L808.6 213.1 L808.8 212.1 L809.1 211.0 L809.3 210.0 L809.5 208.9 L809.8 207.9 L810.0 206.8 L810.3 205.7 L810.5 204.5 L810.8 203.4 L811.0 202.3 L811.2 201.1 L811.5 199.9 L811.7 198.8 L812.0 197.6 L812.2 196.4 L812.4 195.2 L812.7 194.1 L812.9 192.9 L813.1 191.7 L813.4 190.5 L813.6 189.3 L813.8 188.1 L814.0 186.9 L814.2 185.7 L814.5 184.5 L814.7 183.4 L814.9 182.2 L815.1 181.0 L815.3 179.9 L815.5 178.7 L815.7 177.6 L815.9 176.5 L816.1 175.4 L816.3 174.3 L816.5 173.2 L816.7 172.1 L816.8 171.0 L817.0 170.0 L817.2 168.5 L817.5 167.1 L817.7 165.6 L817.9 164.2 L818.1 162.8 L818.3 161.5 L818.5 160.1 L818.6 158.8 L818.8 157.5 L819.0 156.2 L819.1 154.9 L819.3 153.6 L819.4 152.3 L819.6 151.0 L819.7 149.7 L819.9 148.4 L820.0 147.1 L820.2 145.9 L820.3 144.5 L820.5 143.2 L820.7 141.9 L820.8 140.5 L821.0 139.2 L821.2 137.8 L821.4 136.5 L821.5 135.2 L821.7 133.9 L821.9 132.6 L822.1 131.2 L822.3 129.8 L822.5 128.4 L822.7 126.9 L822.9 125.5 L823.0 124.1 L823.2 122.6 L823.4 121.2 L823.6 119.8 L823.8 118.4 L824.0 117.0 L824.2 115.6 L824.4 114.3 L824.6 112.9 L824.8 111.6 L825.0 110.4 L825.2 109.2 L825.3 108.0 L825.5 106.9 L825.7 105.8 L825.9 104.8 L826.0 103.9 L826.2 103.0 L826.6 101.2 L826.9 99.7 L827.2 98.5 L827.5 97.4 L827.8 96.6 L828.1 95.8 L828.4 95.1 L828.7 94.5 L829.0 93.9 L829.3 93.4 L829.6 92.7 L830.0 92.0 L830.3 91.3 L830.7 90.6 L831.1 89.9 L831.4 89.3 L831.8 88.7 L832.2 88.1 L832.6 87.5 L832.9 86.9 L833.3 86.4 L833.8 85.9 L834.2 85.4 L834.6 84.9 L835.0 84.5 L835.4 84.1 L835.8 83.7 L836.3 83.4 L836.7 83.0 L837.1 82.7 L837.5 82.5 L838.0 82.2 L838.4 82.0 L838.9 81.8 L839.4 81.6 L839.9 81.4 L840.4 81.2 L841.0 81.0 L841.4 80.9 L841.6 80.8 L841.9 80.7 L842.0 80.6 L842.1 80.5 L842.3 80.5 L842.4 80.4 L842.5 80.3 L842.8 80.3 L843.0 80.3 L843.4 80.2 L843.9 80.2 L844.4 80.2 L845.2 80.1 L846.1 80.1 L847.2 80.1 L848.5 80.0 L850.0 80.0 L850.3 80.0 L850.6 80.0 L850.9 80.0 L851.3 80.0 L851.6 80.0 L851.9 80.0 L852.3 80.0 L852.7 80.0 L853.0 80.0 L853.4 79.9 L853.8 79.9 L854.2 79.9 L854.6 79.9 L855.0 79.9 L855.5 79.9 L855.9 79.9 L856.3 79.9 L856.8 79.9 L857.2 79.9 L857.7 79.9 L858.2 79.9 L858.6 79.9 L859.1 79.9 L859.6 79.9 L860.1 79.9 L860.6 79.9 L861.1 79.9 L861.6 79.9 L862.1 79.9 L862.6 79.9 L863.1 79.9 L863.7 79.9 L864.2 79.9 L864.7 79.9 L865.3 79.9 L865.8 79.9 L866.4 79.9 L866.9 79.9 L867.5 79.9 L868.0 79.9 L868.6 79.9 L869.1 79.8 L869.7 79.8 L870.3 79.8 L870.8 79.8 L871.4 79.8 L872.0 79.8 L872.6 79.8 L873.1 79.8 L873.7 79.8 L874.3 79.8 L874.9 79.8 L875.4 79.8 L876.0 79.8 L876.6 79.8 L877.2 79.8 L877.8 79.8 L878.3 79.8 L878.9 79.8 L879.5 79.8 L880.1 79.8 L880.6 79.8 L881.2 79.8 L881.8 79.8 L882.4 79.8 L882.9 79.8 L883.5 79.8 L884.1 79.8 L884.6 79.8 L885.2 79.8 L885.8 79.8 L886.3 79.8 L886.9 79.8 L887.4 79.8 L888.0 79.8 L888.5 79.8 L889.0 79.8 L889.6 79.8 L890.1 79.8 L890.6 79.8 L891.2 79.8 L891.7 79.8 L892.2 79.8 L892.7 79.8 L893.2 79.8 L893.7 79.8 L894.2 79.8 L894.7 79.8 L895.2 79.8 L895.6 79.8 L896.1 79.8 L896.6 79.8 L897.0 79.8 L897.5 79.8 L897.9 79.8 L898.3 79.8 L898.8 79.8 L899.2 79.8 L899.6 79.8 L900.0 79.8 L900.7 79.8 L901.3 79.8 L902.0 79.8 L902.7 79.8 L903.3 79.8 L904.0 79.8 L904.6 79.8 L905.3 79.8 L905.9 79.8 L906.5 79.8 L907.1 79.8 L907.8 79.8 L908.4 79.8 L909.0 79.8 L909.6 79.8 L910.2 79.8 L910.8 79.7 L911.4 79.7 L912.0 79.7 L912.5 79.7 L913.1 79.7 L913.7 79.7 L914.2 79.7 L914.8 79.7 L915.3 79.7 L915.9 79.7 L916.4 79.7 L916.9 79.7 L917.4 79.7 L918.0 79.7 L918.5 79.7 L919.0 79.7 L919.5 79.7 L920.0 79.7 L920.4 79.7 L920.9 79.7 L921.4 79.7 L921.8 79.7 L922.3 79.7 L922.7 79.7 L923.2 79.7 L923.6 79.7 L924.0 79.7 L924.4 79.7 L924.8 79.7 L925.2 79.7 L925.6 79.7 L926.0 79.7 L926.4 79.7 L926.8 79.7 L927.1 79.7 L927.5 79.7 L927.8 79.7 L928.2 79.8 L928.5 79.8 L928.8 79.8 L929.1 79.8 L929.4 79.8 L929.7 79.8 L931.5 79.9 L932.6 79.9 L933.2 80.0 L933.5 80.1 L933.5 80.2 L933.5 80.4 L933.7 80.7 L934.0 81.0 L934.4 81.3 L934.8 81.6 L935.2 82.0 L935.5 82.3 L935.9 82.8 L936.3 83.2 L936.7 83.8 L937.1 84.4 L937.5 85.2 L938.0 86.0 L938.3 86.6 L938.6 87.1 L938.9 87.8 L939.2 88.4 L939.6 89.1 L939.9 89.9 L940.3 90.6 L940.6 91.4 L941.0 92.2 L941.3 93.0 L941.6 93.9 L942.0 94.7 L942.3 95.6 L942.7 96.4 L943.0 97.3 L943.3 98.1 L943.6 99.0 L943.9 99.9 L944.2 100.8 L944.5 101.7 L944.8 102.6 L945.0 103.6 L945.3 104.5 L945.6 105.4 L945.8 106.4 L946.1 107.4 L946.3 108.4 L946.6 109.4 L946.9 110.5 L947.1 111.5 L947.4 112.7 L947.7 113.8 L948.0 115.0 L948.2 115.9 L948.5 116.9 L948.7 117.9 L948.9 118.9 L949.2 120.0 L949.4 121.0 L949.6 122.1 L949.9 123.2 L950.1 124.3 L950.4 125.4 L950.6 126.6 L950.9 127.7 L951.1 128.9 L951.4 130.0 L951.7 131.1 L951.9 132.3 L952.2 133.4 L952.5 134.5 L952.7 135.6 L953.0 136.7 L953.3 137.8 L953.6 138.7 L953.8 139.7 L954.1 140.6 L954.3 141.5 L954.6 142.4 L954.9 143.4 L955.2 144.3 L955.4 145.2 L955.7 146.1 L956.0 147.0 L956.3 147.9 L956.6 148.9 L956.9 149.8 L957.1 150.7 L957.4 151.6 L957.7 152.5 L958.0 153.4 L958.3 154.4 L958.6 155.3 L958.9 156.2 L959.2 157.2 L959.4 158.1 L959.7 159.0 L960.0 160.0 L960.3 161.0 L960.6 161.9 L960.8 162.9 L961.1 163.9 L961.4 164.8 L961.6 165.8 L961.9 166.8 L962.2 167.8 L962.4 168.8 L962.7 169.7 L963.0 170.7 L963.3 171.7 L963.5 172.7 L963.8 173.7 L964.1 174.7 L964.3 175.7 L964.6 176.7 L964.9 177.7 L965.2 178.7 L965.5 179.7 L965.7 180.7 L966.0 181.6 L966.3 182.6 L966.6 183.6 L966.9 184.5 L967.2 185.5 L967.5 186.4 L967.7 187.4 L968.0 188.3 L968.3 189.3 L968.6 190.2 L968.9 191.1 L969.2 192.1 L969.5 193.0 L969.8 194.0 L970.1 194.9 L970.4 195.9 L970.7 196.8 L971.0 197.7 L971.3 198.7 L971.6 199.6 L971.9 200.5 L972.2 201.5 L972.5 202.4 L972.8 203.3 L973.1 204.2 L973.4 205.2 L973.7 206.1 L974.0 207.0 L974.3 207.9 L974.6 208.8 L974.9 209.8 L975.2 210.7 L975.5 211.6 L975.8 212.6 L976.1 213.5 L976.4 214.4 L976.7 215.4 L977.0 216.3 L977.3 217.2 L977.6 218.2 L977.9 219.1 L978.2 220.0 L978.5 220.9 L978.8 221.8 L979.1 222.7 L979.4 223.6 L979.7 224.4 L979.9 225.3 L980.2 226.1 L980.5 226.9 L980.8 227.7 L981.0 228.5 L981.3 229.3 L981.7 230.3 L982.0 231.3 L982.3 232.3 L982.7 233.2 L983.0 234.2 L983.3 235.0 L983.6 235.9 L983.9 236.8 L984.2 237.6 L984.5 238.4 L984.8 239.3 L985.1 240.1 L985.4 240.9 L985.7 241.7 L986.0 242.5 L986.4 243.3 L986.7 244.2 L987.0 245.0 L987.3 245.8 L987.6 246.6 L987.9 247.4 L988.3 248.2 L988.6 249.0 L988.9 249.7 L989.2 250.7 L989.5 251.8 L989.9 251.8 L990.2 252.3 L990.5 253.4 L990.9 255.2 L991.2 254.3 L991.5 255.1 L991.8 256.5 L992.2 257.2 L992.5 259.2 L992.9 257.4 L993.2 261.0 L993.5 259.6 L993.9 262.6 L994.3 262.3 L994.6 261.0 L995.0 261.6 L995.4 265.7 L995.8 263.1 L996.2 264.0 L996.5 266.7 L996.9 265.2 L997.3 269.2 L997.7 265.4 L998.0 265.7 L998.4 271.1 L998.7 268.7 L999.1 271.2 L999.4 269.0 L999.7 272.5 L1000.0 271.2 L1000.4 269.5 L1000.8 272.5 L1001.2 273.7 L1001.6 276.8 L1001.9 277.0 L1002.2 277.6 L1002.5 276.6 L1002.8 277.7 L1003.1 276.8 L1003.4 277.8 L1003.7 279.8 L1004.0 279.1 L1004.2 279.3 L1004.4 281.7 L1004.7 281.2 L1004.9 282.8 L1005.1 284.7 L1005.3 284.5 L1005.5 285.2 L1005.8 291.0 L1005.9 288.4 L1006.1 290.5 L1006.3 292.4 L1006.5 295.6 L1006.6 295.6 L1006.8 294.5 L1006.9 299.5 L1007.0 300.7" fill="none" stroke="#ff20ff" stroke-width="1.2" stroke-linejoin="round" shape-rendering="crispEdges"/><path d="M908.0 295.1 L908.1 297.3 L908.2 295.4 L908.3 297.0 L908.4 294.5 L908.6 294.4 L908.7 291.3 L908.9 288.0 L909.1 286.0 L909.2 283.2 L909.4 287.5 L909.6 284.1 L909.7 280.6 L909.9 281.0 L910.0 282.6 L910.2 278.3 L910.3 273.4 L910.4 271.6 L910.5 272.4 L910.6 274.2 L910.7 271.1 L910.8 269.8 L911.0 265.2 L911.2 267.1 L911.5 263.5 L911.6 261.9 L911.8 261.8 L912.0 261.1 L912.1 258.9 L912.3 258.5 L912.5 258.7 L912.7 257.3 L912.9 256.6 L913.1 255.0 L913.3 254.8 L913.5 252.6 L913.7 251.2 L914.0 250.3 L914.2 249.2 L914.4 248.0 L914.7 246.7 L914.9 245.4 L915.2 244.1 L915.5 242.7 L915.7 241.4 L916.0 240.0 L916.2 239.0 L916.4 238.0 L916.6 237.0 L916.8 235.9 L917.0 234.9 L917.3 233.8 L917.5 232.6 L917.7 231.5 L918.0 230.4 L918.2 229.2 L918.5 228.1 L918.7 226.9 L919.0 225.7 L919.2 224.6 L919.5 223.4 L919.7 222.2 L920.0 221.1 L920.2 219.9 L920.5 218.7 L920.7 217.6 L921.0 216.4 L921.2 215.3 L921.4 214.2 L921.7 213.1 L921.9 212.0 L922.1 211.0 L922.4 209.9 L922.6 208.9 L922.8 208.0 L923.0 207.0 L923.3 205.7 L923.6 204.5 L923.8 203.3 L924.1 202.3 L924.3 201.2 L924.6 200.3 L924.8 199.3 L925.0 198.4 L925.2 197.5 L925.5 196.6 L925.7 195.6 L925.9 194.7 L926.1 193.7 L926.4 192.7 L926.6 191.6 L926.9 190.5 L927.1 189.3 L927.4 188.0 L927.6 186.7 L927.9 185.2 L928.2 183.6 L928.4 182.6 L928.6 181.6 L928.8 180.5 L928.9 179.4 L929.1 178.2 L929.4 177.0 L929.6 175.7 L929.8 174.4 L930.0 173.1 L930.2 171.8 L930.4 170.4 L930.7 169.0 L930.9 167.6 L931.1 166.2 L931.3 164.8 L931.6 163.4 L931.8 161.9 L932.0 160.5 L932.2 159.0 L932.5 157.6 L932.7 156.2 L932.9 154.8 L933.1 153.4 L933.3 152.0 L933.6 150.6 L933.8 149.3 L934.0 147.9 L934.2 146.7 L934.4 145.4 L934.5 144.2 L934.7 143.0 L934.9 141.9 L935.1 140.8 L935.2 139.7 L935.4 138.7 L935.5 137.8 L935.8 135.6 L936.1 133.7 L936.3 132.0 L936.5 130.5 L936.6 129.1 L936.8 127.9 L936.9 126.7 L937.0 125.6 L937.1 124.5 L937.2 123.4 L937.4 122.3 L937.6 121.0 L937.8 119.6 L938.0 118.0 L938.2 117.0 L938.3 115.8 L938.5 114.7 L938.7 113.5 L938.9 112.2 L939.2 111.0 L939.4 109.7 L939.6 108.3 L939.8 107.0 L940.1 105.7 L940.3 104.3 L940.5 103.0 L940.8 101.7 L941.0 100.4 L941.2 99.2 L941.5 97.9 L941.7 96.8 L941.9 95.6 L942.2 94.6 L942.4 93.6 L942.6 92.6 L942.8 91.8 L943.0 91.0 L943.4 89.6 L943.8 88.5 L944.2 87.7 L944.5 87.0 L944.9 86.5 L945.2 86.1 L945.6 85.7 L945.9 85.5 L946.3 85.2 L946.6 84.9 L947.0 84.5 L947.4 84.0 L947.9 83.6 L948.3 83.2 L948.7 82.8 L949.1 82.5 L949.5 82.3 L950.0 82.0 L950.5 81.7 L951.0 81.5 L951.3 81.3 L951.5 81.1 L951.5 81.0 L951.5 80.8 L951.5 80.7 L951.6 80.6 L951.8 80.5 L952.2 80.3 L952.9 80.2 L953.8 80.2 L955.2 80.1 L957.0 80.0 L957.3 80.0 L957.6 80.0 L957.9 80.0 L958.2 80.0 L958.5 80.0 L958.9 79.9 L959.2 79.9 L959.6 79.9 L959.9 79.9 L960.3 79.9 L960.7 79.9 L961.1 79.9 L961.5 79.9 L961.9 79.9 L962.3 79.9 L962.7 79.9 L963.1 79.9 L963.5 79.9 L964.0 79.9 L964.4 79.9 L964.9 79.9 L965.3 79.9 L965.8 79.8 L966.3 79.8 L966.7 79.8 L967.2 79.8 L967.7 79.8 L968.2 79.8 L968.7 79.8 L969.2 79.8 L969.7 79.8 L970.2 79.8 L970.7 79.8 L971.2 79.8 L971.8 79.8 L972.3 79.8 L972.8 79.8 L973.3 79.8 L973.9 79.8 L974.4 79.8 L975.0 79.8 L975.5 79.8 L976.1 79.8 L976.6 79.8 L977.2 79.8 L977.7 79.8 L978.3 79.8 L978.8 79.8 L979.4 79.8 L980.0 79.8 L980.5 79.8 L981.1 79.8 L981.7 79.8 L982.2 79.8 L982.8 79.8 L983.4 79.8 L984.0 79.8 L984.5 79.8 L985.1 79.8 L985.7 79.8 L986.2 79.8 L986.8 79.8 L987.4 79.8 L988.0 79.8 L988.5 79.8 L989.1 79.8 L989.7 79.8 L990.2 79.8 L990.8 79.8 L991.4 79.8 L991.9 79.8 L992.5 79.8 L993.0 79.8 L993.6 79.8 L994.1 79.8 L994.7 79.8 L995.2 79.8 L995.8 79.8 L996.3 79.8 L996.9 79.8 L997.4 79.8 L997.9 79.8 L998.4 79.8 L999.0 79.8 L999.5 79.8 L1000.0 79.8 L1000.5 79.8 L1001.0 79.8 L1001.5 79.8 L1002.0 79.8 L1002.5 79.8 L1003.0 79.8 L1003.5 79.8 L1004.1 79.8 L1004.6 79.8 L1005.1 79.8 L1005.7 79.8 L1006.2 79.8 L1006.8 79.8 L1007.3 79.8 L1007.9 79.8 L1008.4 79.8 L1009.0 79.8 L1009.5 79.8 L1010.1 79.8 L1010.7 79.8 L1011.2 79.8 L1011.8 79.7 L1012.4 79.7 L1012.9 79.7 L1013.5 79.7 L1014.1 79.7 L1014.6 79.7 L1015.2 79.7 L1015.8 79.7 L1016.4 79.7 L1016.9 79.7 L1017.5 79.7 L1018.1 79.7 L1018.7 79.7 L1019.2 79.7 L1019.8 79.7 L1020.4 79.7 L1021.0 79.7 L1021.5 79.7 L1022.1 79.7 L1022.7 79.7 L1023.2 79.7 L1023.8 79.7 L1024.4 79.7 L1024.9 79.7 L1025.5 79.7 L1026.1 79.7 L1026.6 79.7 L1027.2 79.7 L1027.7 79.7 L1028.2 79.7 L1028.8 79.7 L1029.3 79.7 L1029.9 79.7 L1030.4 79.7 L1030.9 79.7 L1031.4 79.7 L1031.9 79.7 L1032.5 79.7 L1033.0 79.7 L1033.5 79.7 L1034.0 79.7 L1034.5 79.7 L1034.9 79.7 L1035.4 79.7 L1035.9 79.7 L1036.4 79.7 L1036.8 79.7 L1037.3 79.7 L1037.7 79.7 L1038.2 79.7 L1038.6 79.7 L1039.0 79.7 L1039.4 79.7 L1039.8 79.7 L1040.3 79.7 L1040.6 79.7 L1041.0 79.7 L1041.4 79.7 L1041.8 79.7 L1042.2 79.7 L1042.5 79.7 L1042.9 79.7 L1043.2 79.8 L1043.5 79.8 L1043.8 79.8 L1044.1 79.8 L1044.4 79.8 L1044.7 79.8 L1045.0 79.8 L1047.5 79.9 L1048.9 80.0 L1049.5 80.1 L1049.6 80.3 L1049.3 80.5 L1049.0 80.8 L1048.8 81.1 L1049.0 81.5 L1049.4 81.9 L1049.8 82.2 L1050.2 82.6 L1050.6 83.1 L1050.9 83.5 L1051.3 84.1 L1051.7 84.7 L1052.1 85.4 L1052.6 86.1 L1053.0 87.0 L1053.3 87.6 L1053.6 88.3 L1053.9 88.9 L1054.2 89.7 L1054.5 90.4 L1054.8 91.2 L1055.2 92.1 L1055.5 92.9 L1055.8 93.8 L1056.2 94.6 L1056.5 95.5 L1056.8 96.4 L1057.1 97.3 L1057.4 98.2 L1057.7 99.1 L1058.0 100.0 L1058.3 100.9 L1058.6 101.8 L1058.8 102.7 L1059.1 103.7 L1059.4 104.6 L1059.6 105.5 L1059.9 106.4 L1060.1 107.4 L1060.4 108.3 L1060.6 109.3 L1060.9 110.4 L1061.2 111.5 L1061.4 112.6 L1061.7 113.8 L1062.0 115.0 L1062.2 116.0 L1062.4 117.0 L1062.7 118.0 L1062.9 119.1 L1063.1 120.2 L1063.3 121.3 L1063.6 122.4 L1063.8 123.6 L1064.0 124.8 L1064.3 126.0 L1064.5 127.1 L1064.7 128.3 L1065.0 129.6 L1065.2 130.8 L1065.5 132.0 L1065.8 133.2 L1066.0 134.3 L1066.3 135.5 L1066.6 136.7 L1066.9 137.8 L1067.1 138.7 L1067.4 139.6 L1067.6 140.5 L1067.9 141.4 L1068.2 142.3 L1068.4 143.1 L1068.7 144.0 L1069.0 144.9 L1069.3 145.8 L1069.6 146.7 L1069.8 147.5 L1070.1 148.4 L1070.4 149.3 L1070.7 150.2 L1071.0 151.0 L1071.3 151.9 L1071.6 152.8 L1071.9 153.7 L1072.2 154.6 L1072.5 155.5 L1072.8 156.4 L1073.1 157.3 L1073.4 158.2 L1073.7 159.1 L1074.0 160.0 L1074.3 160.9 L1074.6 161.8 L1074.8 162.7 L1075.1 163.6 L1075.4 164.5 L1075.7 165.4 L1076.0 166.3 L1076.3 167.2 L1076.6 168.1 L1076.9 169.0 L1077.1 169.9 L1077.4 170.8 L1077.7 171.7 L1078.0 172.6 L1078.3 173.6 L1078.6 174.5 L1078.9 175.4 L1079.2 176.3 L1079.5 177.2 L1079.8 178.1 L1080.1 179.1 L1080.4 180.0 L1080.7 180.9 L1081.0 181.8 L1081.3 182.7 L1081.6 183.6 L1081.9 184.5 L1082.2 185.3 L1082.5 186.2 L1082.8 187.1 L1083.1 188.0 L1083.4 188.8 L1083.7 189.7 L1084.0 190.6 L1084.4 191.5 L1084.7 192.3 L1085.0 193.2 L1085.3 194.1 L1085.6 194.9 L1085.9 195.8 L1086.3 196.7 L1086.6 197.6 L1086.9 198.4 L1087.2 199.3 L1087.5 200.2 L1087.8 201.0 L1088.2 201.9 L1088.5 202.7 L1088.8 203.6 L1089.1 204.4 L1089.4 205.3 L1089.7 206.2 L1090.0 207.0 L1090.3 207.9 L1090.6 208.8 L1090.9 209.7 L1091.2 210.6 L1091.5 211.4 L1091.8 212.3 L1092.2 213.2 L1092.5 214.1 L1092.8 215.0 L1093.1 215.9 L1093.4 216.8 L1093.7 217.7 L1094.0 218.6 L1094.3 219.5 L1094.6 220.4 L1094.9 221.2 L1095.2 222.1 L1095.4 222.9 L1095.7 223.8 L1096.0 224.6 L1096.3 225.4 L1096.6 226.2 L1096.9 227.0 L1097.2 227.8 L1097.5 228.6 L1097.8 229.3 L1098.1 230.2 L1098.5 231.0 L1098.8 231.8 L1099.2 232.7 L1099.5 233.5 L1099.9 234.2 L1100.2 235.0 L1100.6 235.8 L1100.9 236.5 L1101.3 237.2 L1101.6 238.0 L1102.0 238.7 L1102.3 239.4 L1102.6 240.1 L1103.0 240.8 L1103.3 241.5 L1103.6 242.1 L1104.0 242.8 L1104.3 243.5 L1104.6 244.2 L1104.9 244.8 L1105.2 245.5 L1105.6 246.4 L1106.0 247.2 L1106.3 248.0 L1106.7 248.9 L1107.0 249.8 L1107.4 250.5 L1107.7 251.0 L1108.0 252.3 L1108.3 252.9 L1108.7 253.1 L1109.0 254.1 L1109.3 254.8 L1109.7 254.7 L1110.0 257.1 L1110.4 255.9 L1110.7 256.6 L1111.1 259.1 L1111.4 259.7 L1111.8 260.4 L1112.1 259.0 L1112.5 260.8 L1112.9 263.5 L1113.2 261.7 L1113.6 262.1 L1114.0 263.1 L1114.3 266.5 L1114.7 264.1 L1115.1 264.9 L1115.5 266.8 L1115.8 267.7 L1116.2 267.6 L1116.6 266.3 L1116.9 269.5 L1117.3 267.2 L1117.6 273.3 L1118.0 272.4 L1118.4 272.0 L1118.8 273.4 L1119.3 272.7 L1119.7 276.1 L1120.1 273.8 L1120.6 276.0 L1121.0 271.6 L1121.4 273.8 L1121.8 275.4 L1122.2 277.6 L1122.6 272.5 L1123.0 277.5 L1123.4 280.3 L1123.7 275.8 L1124.0 277.9 L1124.3 279.9 L1124.6 282.8 L1124.9 280.1 L1125.1 282.1 L1125.3 286.1 L1125.6 287.8 L1125.8 284.2 L1126.0 288.9 L1126.1 291.1 L1126.3 288.2 L1126.4 291.9 L1126.6 294.4 L1126.7 296.5 L1126.8 294.6 L1126.9 299.3 L1127.0 298.0" fill="none" stroke="#20d040" stroke-width="1.2" stroke-linejoin="round" shape-rendering="crispEdges"/></g><g shape-rendering="crispEdges"><rect x="403" y="72" width="1" height="219" fill="#f0f0f0"/><rect x="403" y="285" width="865" height="1" fill="#f0f0f0"/><rect x="398" y="75" width="5" height="1" fill="#f0f0f0"/><rect x="401" y="91" width="2" height="1" fill="#f0f0f0"/><rect x="401" y="106" width="2" height="1" fill="#f0f0f0"/><rect x="401" y="121" width="2" height="1" fill="#f0f0f0"/><rect x="398" y="137" width="5" height="1" fill="#f0f0f0"/><rect x="401" y="152" width="2" height="1" fill="#f0f0f0"/><rect x="401" y="168" width="2" height="1" fill="#f0f0f0"/><rect x="401" y="183" width="2" height="1" fill="#f0f0f0"/><rect x="398" y="198" width="5" height="1" fill="#f0f0f0"/><rect x="401" y="214" width="2" height="1" fill="#f0f0f0"/><rect x="401" y="229" width="2" height="1" fill="#f0f0f0"/><rect x="401" y="245" width="2" height="1" fill="#f0f0f0"/><rect x="398" y="260" width="5" height="1" fill="#f0f0f0"/><rect x="401" y="276" width="2" height="1" fill="#f0f0f0"/><rect x="403" y="286" width="1" height="5" fill="#f0f0f0"/><rect x="433" y="286" width="1" height="2" fill="#f0f0f0"/><rect x="464" y="286" width="1" height="2" fill="#f0f0f0"/><rect x="495" y="286" width="1" height="2" fill="#f0f0f0"/><rect x="526" y="286" width="1" height="5" fill="#f0f0f0"/><rect x="557" y="286" width="1" height="2" fill="#f0f0f0"/><rect x="588" y="286" width="1" height="2" fill="#f0f0f0"/><rect x="618" y="286" width="1" height="2" fill="#f0f0f0"/><rect x="649" y="286" width="1" height="5" fill="#f0f0f0"/><rect x="680" y="286" width="1" height="2" fill="#f0f0f0"/><rect x="711" y="286" width="1" height="2" fill="#f0f0f0"/><rect x="742" y="286" width="1" height="2" fill="#f0f0f0"/><rect x="773" y="286" width="1" height="5" fill="#f0f0f0"/><rect x="804" y="286" width="1" height="2" fill="#f0f0f0"/><rect x="834" y="286" width="1" height="2" fill="#f0f0f0"/><rect x="865" y="286" width="1" height="2" fill="#f0f0f0"/><rect x="896" y="286" width="1" height="5" fill="#f0f0f0"/><rect x="927" y="286" width="1" height="2" fill="#f0f0f0"/><rect x="958" y="286" width="1" height="2" fill="#f0f0f0"/><rect x="989" y="286" width="1" height="2" fill="#f0f0f0"/><rect x="1020" y="286" width="1" height="5" fill="#f0f0f0"/><rect x="1050" y="286" width="1" height="2" fill="#f0f0f0"/><rect x="1081" y="286" width="1" height="2" fill="#f0f0f0"/><rect x="1112" y="286" width="1" height="2" fill="#f0f0f0"/><rect x="1143" y="286" width="1" height="5" fill="#f0f0f0"/><rect x="1174" y="286" width="1" height="2" fill="#f0f0f0"/><rect x="1205" y="286" width="1" height="2" fill="#f0f0f0"/><rect x="1236" y="286" width="1" height="2" fill="#f0f0f0"/><rect x="1266" y="286" width="1" height="5" fill="#f0f0f0"/></g></svg><div class="t" style="left:343px;top:132px;width:51px;text-align:right;color:#f4f4f4;font-size:10px;letter-spacing:0.3px;line-height:12px;">20</div><div class="t" style="left:343px;top:193px;width:51px;text-align:right;color:#f4f4f4;font-size:10px;letter-spacing:0.3px;line-height:12px;">40</div><div class="t" style="left:343px;top:255px;width:51px;text-align:right;color:#f4f4f4;font-size:10px;letter-spacing:0.3px;line-height:12px;">60</div><div class="t" style="left:373px;top:293px;width:60px;text-align:center;color:#f4f4f4;font-size:10px;letter-spacing:0.3px;line-height:12px;">1285</div><div class="t" style="left:496px;top:293px;width:60px;text-align:center;color:#f4f4f4;font-size:10px;letter-spacing:0.3px;line-height:12px;">1290</div><div class="t" style="left:619px;top:293px;width:60px;text-align:center;color:#f4f4f4;font-size:10px;letter-spacing:0.3px;line-height:12px;">1295</div><div class="t" style="left:743px;top:293px;width:60px;text-align:center;color:#f4f4f4;font-size:10px;letter-spacing:0.3px;line-height:12px;">1300</div><div class="t" style="left:866px;top:293px;width:60px;text-align:center;color:#f4f4f4;font-size:10px;letter-spacing:0.3px;line-height:12px;">1305</div><div class="t" style="left:990px;top:293px;width:60px;text-align:center;color:#f4f4f4;font-size:10px;letter-spacing:0.3px;line-height:12px;">1310</div><div class="t" style="left:1113px;top:293px;width:60px;text-align:center;color:#f4f4f4;font-size:10px;letter-spacing:0.3px;line-height:12px;">1315</div><div class="t" style="left:735px;top:306px;width:200px;text-align:center;color:#f4f4f4;font-size:10px;letter-spacing:0.3px;line-height:12px;">Wavelength [nm]</div><div class="t" style="left:866px;top:306px;width:401px;text-align:right;color:#f4f4f4;font-size:10px;letter-spacing:0.3px;line-height:12px;;font-weight:bold;letter-spacing:0.05px">Loss</div><div class="t" style="left:237px;top:172px;width:200px;text-align:center;color:#f4f4f4;font-size:10px;letter-spacing:0.3px;line-height:12px;;transform:rotate(-90deg)">Loss [dB]</div><div style="position:absolute;left:321px;top:321px;width:950px;height:1px;background:#fff"></div><svg class="a" style="left:0;top:0" width="1278" height="745" viewBox="0 0 1278 745"><rect x="324" y="326" width="947" height="256" fill="#808080"/><rect x="325" y="327" width="946" height="256" fill="#fff"/><rect x="325" y="327" width="946" height="255" fill="#2e2e34"/><rect x="403" y="332" width="864" height="214" fill="#000"/><defs><clipPath id="c327"><rect x="404" y="332" width="864" height="214"/></clipPath></defs><g shape-rendering="crispEdges"><rect x="406" y="526" width="861" height="1" fill="#c8c8c8"/><line x1="406" y1="505.5" x2="1267" y2="505.5" stroke="#d8d8d8" stroke-width="1" stroke-dasharray="3 3"/><rect x="406" y="485" width="861" height="1" fill="#c8c8c8"/><line x1="406" y1="464.5" x2="1267" y2="464.5" stroke="#d8d8d8" stroke-width="1" stroke-dasharray="3 3"/><rect x="406" y="443" width="861" height="1" fill="#c8c8c8"/><line x1="406" y1="423.5" x2="1267" y2="423.5" stroke="#d8d8d8" stroke-width="1" stroke-dasharray="3 3"/><rect x="406" y="402" width="861" height="1" fill="#c8c8c8"/><line x1="406" y1="382.5" x2="1267" y2="382.5" stroke="#d8d8d8" stroke-width="1" stroke-dasharray="3 3"/><rect x="406" y="361" width="861" height="1" fill="#c8c8c8"/><line x1="406" y1="340.5" x2="1267" y2="340.5" stroke="#d8d8d8" stroke-width="1" stroke-dasharray="3 3"/><line x1="433.5" y1="332" x2="433.5" y2="546" stroke="#d8d8d8" stroke-width="1" stroke-dasharray="3 3"/><line x1="464.5" y1="332" x2="464.5" y2="546" stroke="#d8d8d8" stroke-width="1" stroke-dasharray="3 3"/><line x1="495.5" y1="332" x2="495.5" y2="546" stroke="#d8d8d8" stroke-width="1" stroke-dasharray="3 3"/><rect x="526" y="332" width="1" height="214" fill="#c8c8c8"/><line x1="557.5" y1="332" x2="557.5" y2="546" stroke="#d8d8d8" stroke-width="1" stroke-dasharray="3 3"/><line x1="588.5" y1="332" x2="588.5" y2="546" stroke="#d8d8d8" stroke-width="1" stroke-dasharray="3 3"/><line x1="618.5" y1="332" x2="618.5" y2="546" stroke="#d8d8d8" stroke-width="1" stroke-dasharray="3 3"/><rect x="649" y="332" width="1" height="214" fill="#c8c8c8"/><line x1="680.5" y1="332" x2="680.5" y2="546" stroke="#d8d8d8" stroke-width="1" stroke-dasharray="3 3"/><line x1="711.5" y1="332" x2="711.5" y2="546" stroke="#d8d8d8" stroke-width="1" stroke-dasharray="3 3"/><line x1="742.5" y1="332" x2="742.5" y2="546" stroke="#d8d8d8" stroke-width="1" stroke-dasharray="3 3"/><rect x="773" y="332" width="1" height="214" fill="#c8c8c8"/><line x1="804.5" y1="332" x2="804.5" y2="546" stroke="#d8d8d8" stroke-width="1" stroke-dasharray="3 3"/><line x1="834.5" y1="332" x2="834.5" y2="546" stroke="#d8d8d8" stroke-width="1" stroke-dasharray="3 3"/><line x1="865.5" y1="332" x2="865.5" y2="546" stroke="#d8d8d8" stroke-width="1" stroke-dasharray="3 3"/><rect x="896" y="332" width="1" height="214" fill="#c8c8c8"/><line x1="927.5" y1="332" x2="927.5" y2="546" stroke="#d8d8d8" stroke-width="1" stroke-dasharray="3 3"/><line x1="958.5" y1="332" x2="958.5" y2="546" stroke="#d8d8d8" stroke-width="1" stroke-dasharray="3 3"/><line x1="989.5" y1="332" x2="989.5" y2="546" stroke="#d8d8d8" stroke-width="1" stroke-dasharray="3 3"/><rect x="1020" y="332" width="1" height="214" fill="#c8c8c8"/><line x1="1050.5" y1="332" x2="1050.5" y2="546" stroke="#d8d8d8" stroke-width="1" stroke-dasharray="3 3"/><line x1="1081.5" y1="332" x2="1081.5" y2="546" stroke="#d8d8d8" stroke-width="1" stroke-dasharray="3 3"/><line x1="1112.5" y1="332" x2="1112.5" y2="546" stroke="#d8d8d8" stroke-width="1" stroke-dasharray="3 3"/><rect x="1143" y="332" width="1" height="214" fill="#c8c8c8"/><line x1="1174.5" y1="332" x2="1174.5" y2="546" stroke="#d8d8d8" stroke-width="1" stroke-dasharray="3 3"/><line x1="1205.5" y1="332" x2="1205.5" y2="546" stroke="#d8d8d8" stroke-width="1" stroke-dasharray="3 3"/><line x1="1236.5" y1="332" x2="1236.5" y2="546" stroke="#d8d8d8" stroke-width="1" stroke-dasharray="3 3"/></g><g clip-path="url(#c327)"><path d="M612.4 320.0 L612.4 321.1 L612.4 322.3 L612.5 323.9 L612.5 326.0 L612.6 328.8 L612.7 332.5 L612.7 333.7 L612.8 335.0 L612.8 336.4 L612.9 337.8 L612.9 339.3 L613.0 340.8 L613.1 342.4 L613.1 344.0 L613.2 345.7 L613.2 347.5 L613.3 349.3 L613.4 351.2 L613.5 353.1 L613.5 355.1 L613.6 357.1 L613.7 359.2 L613.8 361.3 L613.9 363.5 L614.0 365.7 L614.1 368.0 L614.2 370.3 L614.3 371.7 L614.3 373.1 L614.4 374.6 L614.5 376.1 L614.5 377.7 L614.6 379.3 L614.7 380.9 L614.8 382.6 L614.8 384.3 L614.9 386.0 L615.0 387.8 L615.1 389.5 L615.2 391.3 L615.3 393.1 L615.3 394.9 L615.4 396.8 L615.5 398.6 L615.6 400.4 L615.7 402.2 L615.8 404.1 L615.9 405.9 L616.0 407.7 L616.1 409.5 L616.1 411.3 L616.2 413.1 L616.3 414.8 L616.4 416.6 L616.5 418.3 L616.6 419.9 L616.7 421.6 L616.8 423.2 L616.9 424.8 L616.9 426.3 L617.0 427.8 L617.1 429.3 L617.2 430.7 L617.3 432.7 L617.4 434.6 L617.6 436.5 L617.7 438.3 L617.8 440.2 L617.9 441.9 L618.0 443.7 L618.2 445.4 L618.3 447.0 L618.4 448.7 L618.5 450.3 L618.6 451.8 L618.8 453.4 L618.9 454.9 L619.0 456.4 L619.1 457.9 L619.2 459.3 L619.4 460.7 L619.5 462.1 L619.6 463.5 L619.7 464.8 L619.8 466.1 L620.0 467.4 L620.1 468.7 L620.2 470.0 L620.4 471.7 L620.5 473.4 L620.7 475.1 L620.9 476.7 L621.0 478.3 L621.2 479.8 L621.4 481.3 L621.5 482.8 L621.7 484.2 L621.9 485.5 L622.0 486.8 L622.2 488.0 L622.4 489.2 L622.5 490.3 L622.7 491.3 L622.9 492.3 L623.0 493.2 L623.2 494.0 L623.6 495.6 L623.9 496.7 L624.3 497.4 L624.7 497.9 L625.0 498.2 L625.4 498.4 L625.8 498.5 L626.2 498.7 L626.7 498.8 L627.2 498.8 L627.7 498.6 L628.2 498.3 L628.8 498.0 L629.4 497.7 L630.0 497.5 L630.5 497.4 L630.9 497.2 L631.4 497.0 L631.8 496.9 L632.3 496.7 L632.8 496.6 L633.4 496.4 L634.0 496.4 L634.6 496.4 L635.3 496.5 L635.7 496.6 L636.0 496.7 L636.3 496.8 L636.7 497.0 L637.0 497.2 L637.3 497.3 L637.6 497.5 L637.9 497.8 L638.3 498.0 L638.7 498.2 L639.1 498.5 L639.6 498.7 L640.1 498.9 L640.6 499.2 L641.2 499.4 L641.9 499.6 L642.7 499.8 L643.5 500.0 L644.4 500.2 L644.7 500.3 L645.1 500.3 L645.5 500.4 L645.8 500.5 L646.2 500.5 L646.6 500.6 L647.1 500.6 L647.5 500.7 L647.9 500.8 L648.4 500.8 L648.9 500.9 L649.3 501.0 L649.8 501.1 L650.3 501.1 L650.8 501.2 L651.3 501.3 L651.8 501.3 L652.4 501.4 L652.9 501.5 L653.4 501.5 L654.0 501.6 L654.5 501.7 L655.1 501.7 L655.6 501.8 L656.2 501.9 L656.7 501.9 L657.3 502.0 L657.9 502.1 L658.4 502.1 L659.0 502.2 L659.5 502.2 L660.1 502.3 L660.7 502.4 L661.2 502.4 L661.8 502.5 L662.3 502.5 L662.9 502.6 L663.4 502.6 L664.0 502.7 L664.5 502.7 L665.0 502.8 L665.5 502.8 L666.1 502.9 L666.6 502.9 L667.1 502.9 L667.6 503.0 L668.0 503.0 L668.5 503.0 L669.0 503.1 L669.4 503.1 L669.9 503.1 L670.3 503.1 L670.7 503.2 L671.1 503.2 L671.5 503.2 L672.2 503.2 L672.9 503.2 L673.5 503.2 L674.2 503.2 L674.8 503.2 L675.4 503.2 L676.0 503.2 L676.5 503.2 L677.1 503.2 L677.6 503.1 L678.2 503.1 L678.7 503.1 L679.2 503.0 L679.7 503.0 L680.2 502.9 L680.6 502.9 L681.1 502.8 L681.6 502.7 L682.0 502.7 L682.5 502.6 L682.9 502.5 L683.3 502.4 L683.7 502.3 L684.2 502.3 L684.6 502.2 L685.0 502.1 L685.4 502.0 L685.8 501.9 L686.2 501.8 L686.6 501.7 L687.2 501.6 L687.8 501.4 L688.3 501.3 L688.9 501.2 L689.4 501.0 L689.9 500.9 L690.4 500.8 L690.8 500.6 L691.3 500.5 L691.7 500.3 L692.2 500.1 L692.6 499.9 L693.0 499.7 L693.4 499.4 L693.8 499.1 L694.2 498.8 L694.6 498.5 L694.9 498.1 L695.3 497.7 L695.7 497.2 L696.1 496.7 L696.5 496.2 L696.8 495.6 L697.2 495.1 L697.5 494.5 L697.9 493.9 L698.2 493.3 L698.5 492.6 L698.8 491.9 L699.1 491.2 L699.4 490.4 L699.7 489.6 L700.0 488.7 L700.3 487.8 L700.6 486.8 L700.9 485.7 L701.1 484.5 L701.4 483.3 L701.7 482.0 L701.9 481.0 L702.1 480.0 L702.3 479.0 L702.5 478.0 L702.7 476.9 L702.9 475.8 L703.0 474.7 L703.2 473.6 L703.4 472.4 L703.6 471.2 L703.8 469.9 L704.0 468.7 L704.1 467.4 L704.3 466.1 L704.5 464.7 L704.7 463.3 L704.8 461.9 L705.0 460.4 L705.1 458.9 L705.3 457.4 L705.5 455.9 L705.6 454.3 L705.7 452.7 L705.9 451.0 L706.0 449.3 L706.2 447.6 L706.3 445.8 L706.4 444.4 L706.5 442.9 L706.6 441.3 L706.7 439.8 L706.8 438.1 L706.9 436.5 L707.0 434.8 L707.0 433.1 L707.1 431.4 L707.2 429.6 L707.3 427.8 L707.4 426.0 L707.4 424.1 L707.5 422.3 L707.6 420.4 L707.6 418.5 L707.7 416.6 L707.8 414.7 L707.8 412.8 L707.9 410.9 L708.0 409.0 L708.0 407.1 L708.1 405.2 L708.1 403.4 L708.2 401.5 L708.3 399.6 L708.3 397.8 L708.4 395.9 L708.4 394.1 L708.5 392.3 L708.5 390.5 L708.6 388.8 L708.6 387.1 L708.7 385.4 L708.8 383.4 L708.8 381.3 L708.9 379.2 L708.9 377.1 L709.0 375.0 L709.1 372.8 L709.1 370.7 L709.2 368.6 L709.2 366.4 L709.3 364.3 L709.3 362.2 L709.4 360.1 L709.4 358.0 L709.4 356.0 L709.5 353.9 L709.5 352.0 L709.6 350.0 L709.6 348.1 L709.6 346.3 L709.7 344.5 L709.7 342.7 L709.7 341.0 L709.8 339.4 L709.8 337.9 L709.8 336.4 L709.9 335.0 L709.9 333.7 L709.9 332.5 L710.0 327.9 L710.0 324.9 L710.0 322.9 L710.0 321.7 L710.0 320.9 L710.0 320.0" fill="none" stroke="#ffff00" stroke-width="1.2" stroke-linejoin="round" shape-rendering="crispEdges"/><path d="M716.0 320.0 L716.0 320.9 L716.0 321.7 L716.0 322.9 L716.0 324.9 L716.0 327.9 L716.2 332.5 L716.2 333.6 L716.3 334.8 L716.3 336.1 L716.4 337.5 L716.5 338.9 L716.5 340.4 L716.6 341.9 L716.6 343.5 L716.7 345.2 L716.8 346.9 L716.9 348.6 L716.9 350.4 L717.0 352.2 L717.1 354.1 L717.2 356.0 L717.3 357.9 L717.3 359.8 L717.4 361.8 L717.5 363.7 L717.6 365.7 L717.7 367.7 L717.8 369.7 L717.9 371.7 L717.9 373.7 L718.0 375.7 L718.1 377.7 L718.2 379.6 L718.3 381.6 L718.3 383.5 L718.4 385.4 L718.5 387.1 L718.5 388.8 L718.6 390.5 L718.6 392.3 L718.7 394.1 L718.8 395.9 L718.8 397.7 L718.9 399.6 L719.0 401.4 L719.0 403.3 L719.1 405.2 L719.1 407.1 L719.2 409.0 L719.3 410.9 L719.3 412.8 L719.4 414.7 L719.4 416.5 L719.5 418.4 L719.6 420.3 L719.6 422.2 L719.7 424.0 L719.7 425.8 L719.8 427.7 L719.9 429.5 L719.9 431.2 L720.0 433.0 L720.0 434.7 L720.1 436.4 L720.2 438.1 L720.2 439.7 L720.3 441.3 L720.4 442.8 L720.4 444.3 L720.5 445.8 L720.6 448.0 L720.7 450.2 L720.8 452.4 L720.9 454.5 L721.0 456.7 L721.1 458.7 L721.2 460.8 L721.3 462.7 L721.4 464.7 L721.5 466.6 L721.5 468.4 L721.7 470.2 L721.8 471.9 L721.9 473.5 L722.0 475.0 L722.1 476.5 L722.2 477.9 L722.3 479.2 L722.5 480.5 L722.6 481.6 L722.7 482.7 L722.9 483.6 L723.3 485.3 L723.8 486.1 L724.2 486.3 L724.8 486.0 L725.3 485.4 L725.8 484.9 L726.4 484.5 L726.9 484.4 L727.4 485.0 L727.7 485.6 L728.0 486.3 L728.2 487.1 L728.5 488.0 L728.8 488.9 L729.1 489.9 L729.3 491.0 L729.6 492.1 L729.9 493.2 L730.2 494.3 L730.5 495.4 L730.7 496.4 L731.0 497.4 L731.4 498.4 L731.7 499.2 L732.0 500.0 L732.3 500.8 L732.7 501.5 L733.0 502.3 L733.4 503.0 L733.7 503.7 L734.1 504.4 L734.4 505.0 L734.8 505.6 L735.2 506.1 L735.6 506.6 L736.0 507.0 L736.5 507.3 L737.0 507.5 L737.5 507.7 L738.0 507.7 L738.3 507.7 L738.7 507.5 L739.0 507.4 L739.4 507.2 L739.8 506.9 L740.2 506.6 L740.5 506.2 L740.9 505.8 L741.4 505.4 L741.8 505.0 L742.2 504.5 L742.6 504.0 L743.0 503.6 L743.5 503.1 L743.9 502.6 L744.4 502.2 L744.8 501.8 L745.3 501.4 L745.7 501.0 L746.2 500.6 L746.7 500.3 L747.2 500.1 L747.6 499.8 L748.1 499.7 L748.6 499.6 L749.0 499.6 L749.4 499.6 L749.9 499.6 L750.3 499.7 L750.7 499.8 L751.1 499.9 L751.6 500.0 L752.0 500.2 L752.4 500.4 L752.9 500.6 L753.3 500.8 L753.8 501.0 L754.2 501.3 L754.7 501.5 L755.2 501.8 L755.6 502.0 L756.1 502.3 L756.6 502.5 L757.1 502.8 L757.5 503.1 L758.0 503.3 L758.5 503.5 L759.0 503.8 L759.6 504.0 L760.1 504.1 L760.6 504.3 L761.1 504.5 L761.7 504.6 L762.2 504.7 L762.6 504.8 L763.1 504.8 L763.5 504.9 L764.0 504.9 L764.5 505.0 L764.9 505.0 L765.4 505.1 L765.9 505.1 L766.3 505.1 L766.8 505.2 L767.3 505.2 L767.8 505.2 L768.3 505.2 L768.8 505.3 L769.3 505.3 L769.8 505.3 L770.3 505.3 L770.8 505.3 L771.3 505.3 L771.8 505.2 L772.3 505.2 L772.8 505.2 L773.4 505.2 L773.9 505.2 L774.4 505.2 L774.9 505.1 L775.5 505.1 L776.0 505.1 L776.5 505.0 L777.1 505.0 L777.6 504.9 L778.1 504.9 L778.7 504.9 L779.2 504.8 L779.8 504.8 L780.3 504.7 L780.8 504.7 L781.2 504.6 L781.7 504.5 L782.2 504.5 L782.7 504.4 L783.2 504.3 L783.7 504.3 L784.2 504.2 L784.7 504.1 L785.2 504.0 L785.7 503.9 L786.3 503.8 L786.8 503.7 L787.3 503.6 L787.9 503.5 L788.4 503.4 L788.9 503.3 L789.5 503.2 L790.0 503.1 L790.5 503.0 L791.1 502.9 L791.6 502.8 L792.1 502.7 L792.6 502.5 L793.2 502.4 L793.7 502.3 L794.2 502.2 L794.7 502.1 L795.2 502.0 L795.7 501.9 L796.2 501.8 L796.7 501.7 L797.1 501.6 L797.6 501.5 L798.1 501.4 L798.5 501.3 L799.0 501.2 L799.4 501.2 L799.8 501.1 L800.2 501.0 L800.6 500.9 L801.0 500.9 L801.4 500.8 L802.1 500.7 L802.9 500.7 L803.5 500.7 L804.2 500.7 L804.8 500.8 L805.4 500.9 L806.0 501.0 L806.5 501.2 L807.1 501.3 L807.6 501.4 L808.1 501.5 L808.5 501.5 L809.0 501.6 L809.4 501.6 L809.8 501.5 L810.2 501.4 L810.6 501.2 L811.0 500.9 L811.3 500.6 L811.7 500.1 L812.0 499.6 L812.4 498.9 L812.7 498.1 L813.0 497.2 L813.2 496.4 L813.5 495.4 L813.7 494.4 L813.8 493.3 L814.0 492.1 L814.1 490.8 L814.2 489.5 L814.3 488.0 L814.4 486.3 L814.5 484.6 L814.6 482.7 L814.7 480.6 L814.9 478.4 L815.0 476.0 L815.1 474.7 L815.1 473.4 L815.2 472.1 L815.3 470.7 L815.4 469.3 L815.4 467.8 L815.5 466.3 L815.5 464.8 L815.6 463.2 L815.7 461.6 L815.7 460.0 L815.8 458.3 L815.9 456.6 L815.9 454.9 L816.0 453.1 L816.0 451.3 L816.1 449.5 L816.1 447.7 L816.2 445.8 L816.3 443.9 L816.3 442.0 L816.4 440.1 L816.4 438.1 L816.5 436.2 L816.5 434.2 L816.6 432.2 L816.7 430.1 L816.7 428.1 L816.8 426.0 L816.8 424.0 L816.9 421.9 L817.0 419.8 L817.0 417.7 L817.1 415.6 L817.2 414.0 L817.2 412.3 L817.3 410.6 L817.3 408.8 L817.4 407.0 L817.4 405.1 L817.5 403.2 L817.5 401.3 L817.6 399.3 L817.7 397.3 L817.7 395.3 L817.8 393.2 L817.8 391.2 L817.9 389.1 L818.0 387.0 L818.0 384.9 L818.1 382.7 L818.1 380.6 L818.2 378.5 L818.3 376.3 L818.3 374.2 L818.4 372.1 L818.4 370.0 L818.5 367.9 L818.6 365.8 L818.6 363.8 L818.7 361.7 L818.7 359.7 L818.8 357.8 L818.9 355.8 L818.9 353.9 L819.0 352.0 L819.0 350.2 L819.1 348.4 L819.1 346.7 L819.2 345.0 L819.2 343.3 L819.2 341.7 L819.3 340.2 L819.3 338.8 L819.4 337.4 L819.4 336.0 L819.4 334.8 L819.5 333.6 L819.5 332.5 L819.7 326.2 L819.7 322.6 L819.8 321.1 L819.7 320.6 L819.7 320.5 L819.7 320.0" fill="none" stroke="#00e8f0" stroke-width="1.2" stroke-linejoin="round" shape-rendering="crispEdges"/><path d="M831.3 320.0 L831.3 320.7 L831.3 321.2 L831.3 322.0 L831.3 323.8 L831.4 327.1 L831.5 332.5 L831.5 333.6 L831.6 334.8 L831.6 336.0 L831.6 337.4 L831.7 338.8 L831.7 340.2 L831.7 341.7 L831.8 343.3 L831.8 344.9 L831.9 346.6 L831.9 348.4 L831.9 350.1 L832.0 351.9 L832.0 353.8 L832.1 355.7 L832.1 357.6 L832.2 359.5 L832.2 361.5 L832.3 363.5 L832.3 365.5 L832.4 367.5 L832.4 369.5 L832.5 371.6 L832.6 373.6 L832.6 375.7 L832.7 377.7 L832.8 379.7 L832.8 381.7 L832.9 383.7 L833.0 385.7 L833.0 387.7 L833.1 389.6 L833.2 391.5 L833.3 393.4 L833.3 395.2 L833.4 397.0 L833.5 398.8 L833.6 400.5 L833.7 402.2 L833.8 403.8 L833.9 405.5 L834.0 407.1 L834.1 408.8 L834.2 410.5 L834.3 412.2 L834.4 413.9 L834.5 415.5 L834.6 417.2 L834.7 418.9 L834.8 420.6 L834.9 422.2 L835.0 423.9 L835.2 425.6 L835.3 427.2 L835.4 428.9 L835.5 430.5 L835.6 432.1 L835.8 433.7 L835.9 435.3 L836.0 436.9 L836.1 438.5 L836.3 440.1 L836.4 441.6 L836.5 443.1 L836.6 444.7 L836.8 446.1 L836.9 447.6 L837.0 449.1 L837.1 450.5 L837.3 451.9 L837.4 453.3 L837.5 454.6 L837.6 456.0 L837.7 457.3 L837.9 458.5 L838.0 459.8 L838.1 461.0 L838.3 462.8 L838.5 464.6 L838.6 466.3 L838.8 468.0 L839.0 469.6 L839.1 471.2 L839.3 472.7 L839.5 474.2 L839.7 475.6 L839.8 477.0 L840.0 478.3 L840.2 479.7 L840.3 480.9 L840.5 482.2 L840.7 483.4 L840.9 484.5 L841.0 485.7 L841.2 486.8 L841.4 487.9 L841.6 488.9 L841.8 490.0 L842.0 491.0 L842.2 492.0 L842.4 493.0 L842.6 494.0 L842.9 495.3 L843.2 496.5 L843.5 497.7 L843.8 498.8 L844.1 499.9 L844.4 500.9 L844.8 501.9 L845.1 502.8 L845.4 503.7 L845.8 504.6 L846.1 505.3 L846.4 506.1 L846.8 506.8 L847.1 507.4 L847.4 508.0 L847.8 508.5 L848.1 509.0 L848.4 509.4 L848.7 509.8 L849.2 510.2 L849.7 510.4 L850.2 510.4 L850.6 510.1 L851.1 509.8 L851.5 509.3 L852.0 508.8 L852.5 508.2 L853.0 507.7 L853.5 507.3 L854.0 507.0 L854.4 506.8 L854.9 506.6 L855.3 506.4 L855.7 506.2 L856.2 506.0 L856.6 505.7 L857.1 505.5 L857.5 505.3 L858.0 505.2 L858.5 505.0 L859.1 504.9 L859.6 504.8 L860.2 504.7 L860.8 504.7 L861.2 504.7 L861.6 504.8 L861.9 504.8 L862.3 504.9 L862.7 505.0 L863.0 505.1 L863.4 505.2 L863.8 505.4 L864.2 505.5 L864.6 505.6 L865.0 505.8 L865.4 505.9 L865.8 506.1 L866.3 506.2 L866.8 506.4 L867.3 506.5 L867.9 506.6 L868.5 506.7 L869.1 506.8 L869.8 506.9 L870.5 507.0 L871.3 507.0 L871.7 507.0 L872.1 507.0 L872.4 507.0 L872.9 507.0 L873.3 507.0 L873.7 507.0 L874.2 507.0 L874.6 507.0 L875.1 506.9 L875.6 506.9 L876.0 506.9 L876.5 506.9 L877.0 506.8 L877.5 506.8 L878.1 506.8 L878.6 506.7 L879.1 506.7 L879.6 506.7 L880.2 506.6 L880.7 506.6 L881.3 506.5 L881.8 506.5 L882.4 506.5 L882.9 506.4 L883.5 506.4 L884.0 506.3 L884.6 506.3 L885.2 506.2 L885.7 506.2 L886.3 506.1 L886.8 506.1 L887.4 506.1 L887.9 506.0 L888.5 506.0 L889.0 505.9 L889.6 505.9 L890.1 505.9 L890.6 505.8 L891.1 505.8 L891.7 505.8 L892.2 505.7 L892.7 505.7 L893.2 505.7 L893.7 505.7 L894.1 505.6 L894.6 505.6 L895.1 505.6 L895.5 505.6 L896.1 505.6 L896.7 505.6 L897.2 505.6 L897.8 505.6 L898.4 505.6 L899.0 505.6 L899.5 505.6 L900.1 505.7 L900.6 505.7 L901.2 505.7 L901.7 505.7 L902.3 505.8 L902.8 505.8 L903.3 505.8 L903.9 505.9 L904.4 505.9 L904.9 505.9 L905.4 506.0 L905.9 506.0 L906.4 506.0 L906.9 506.1 L907.4 506.1 L907.9 506.1 L908.3 506.1 L908.8 506.2 L909.3 506.2 L909.7 506.2 L910.2 506.2 L910.6 506.2 L911.1 506.3 L911.5 506.3 L912.0 506.3 L912.4 506.2 L912.8 506.2 L913.2 506.2 L913.6 506.2 L914.2 506.2 L914.9 506.1 L915.5 506.0 L916.1 506.0 L916.7 505.9 L917.2 505.8 L917.8 505.7 L918.3 505.6 L918.8 505.5 L919.4 505.4 L919.8 505.3 L920.3 505.1 L920.8 505.0 L921.2 504.9 L921.6 504.8 L922.1 504.6 L922.5 504.5 L922.8 504.3 L923.2 504.2 L923.6 504.1 L923.9 503.9 L924.2 503.8 L925.0 503.7 L925.6 503.9 L926.0 504.2 L926.3 504.3 L926.6 503.9 L926.8 502.6 L927.2 500.2 L927.3 499.3 L927.4 498.3 L927.6 497.3 L927.7 496.2 L927.8 495.0 L927.9 493.7 L928.1 492.4 L928.2 491.0 L928.3 489.6 L928.4 488.1 L928.6 486.6 L928.7 485.0 L928.8 483.3 L928.9 481.6 L929.1 479.9 L929.2 478.2 L929.3 476.4 L929.4 474.5 L929.5 472.7 L929.7 470.8 L929.8 468.9 L929.9 466.9 L930.0 465.0 L930.1 463.0 L930.2 461.0 L930.3 459.5 L930.4 458.0 L930.4 456.5 L930.5 454.9 L930.6 453.3 L930.6 451.7 L930.7 450.1 L930.8 448.4 L930.9 446.7 L930.9 445.0 L931.0 443.3 L931.1 441.5 L931.1 439.8 L931.2 438.0 L931.3 436.2 L931.3 434.4 L931.4 432.6 L931.5 430.7 L931.5 428.9 L931.6 427.0 L931.7 425.1 L931.7 423.3 L931.8 421.4 L931.9 419.5 L931.9 417.6 L932.0 415.7 L932.0 413.8 L932.1 411.9 L932.1 410.0 L932.2 408.1 L932.2 406.2 L932.3 404.3 L932.3 402.4 L932.4 400.5 L932.4 398.7 L932.5 396.8 L932.5 394.9 L932.6 393.0 L932.6 391.0 L932.7 389.0 L932.7 386.9 L932.8 384.8 L932.8 382.7 L932.8 380.6 L932.9 378.5 L932.9 376.3 L932.9 374.2 L933.0 372.0 L933.0 369.9 L933.1 367.7 L933.1 365.6 L933.1 363.5 L933.2 361.4 L933.2 359.3 L933.2 357.3 L933.3 355.3 L933.3 353.3 L933.3 351.3 L933.3 349.4 L933.4 347.6 L933.4 345.8 L933.4 344.0 L933.4 342.3 L933.5 340.7 L933.5 339.1 L933.5 337.7 L933.5 336.2 L933.6 334.9 L933.6 333.7 L933.6 332.5 L933.7 327.1 L933.7 323.8 L933.8 322.0 L933.8 321.2 L933.8 320.7 L933.8 320.0" fill="none" stroke="#ff20ff" stroke-width="1.2" stroke-linejoin="round" shape-rendering="crispEdges"/><path d="M945.1 320.0 L945.1 320.7 L945.1 321.2 L945.1 322.0 L945.1 323.8 L945.2 327.1 L945.3 332.5 L945.3 333.6 L945.3 334.8 L945.4 336.1 L945.4 337.5 L945.4 338.9 L945.4 340.5 L945.5 342.0 L945.5 343.7 L945.5 345.3 L945.6 347.1 L945.6 348.9 L945.6 350.7 L945.6 352.6 L945.7 354.5 L945.7 356.5 L945.7 358.4 L945.8 360.4 L945.8 362.5 L945.9 364.5 L945.9 366.6 L945.9 368.7 L946.0 370.8 L946.0 372.8 L946.1 374.9 L946.1 377.0 L946.2 379.1 L946.2 381.2 L946.3 383.2 L946.3 385.3 L946.4 387.3 L946.4 389.3 L946.5 391.3 L946.5 393.2 L946.6 395.1 L946.7 396.9 L946.7 398.7 L946.8 400.5 L946.9 402.2 L946.9 404.0 L947.0 405.7 L947.1 407.5 L947.2 409.3 L947.3 411.0 L947.4 412.8 L947.5 414.6 L947.5 416.4 L947.6 418.1 L947.7 419.9 L947.8 421.7 L947.9 423.4 L948.0 425.2 L948.1 426.9 L948.2 428.6 L948.3 430.4 L948.4 432.1 L948.6 433.8 L948.7 435.5 L948.8 437.2 L948.9 438.8 L949.0 440.5 L949.1 442.1 L949.2 443.7 L949.3 445.3 L949.4 446.8 L949.5 448.4 L949.6 449.9 L949.8 451.4 L949.9 452.8 L950.0 454.3 L950.1 455.7 L950.2 457.1 L950.3 458.4 L950.4 459.7 L950.5 461.0 L950.7 463.0 L950.8 464.9 L951.0 466.7 L951.1 468.5 L951.2 470.2 L951.4 471.8 L951.5 473.4 L951.6 474.9 L951.8 476.4 L951.9 477.8 L952.0 479.2 L952.2 480.5 L952.3 481.8 L952.5 483.1 L952.7 484.4 L952.8 485.6 L953.0 486.8 L953.2 488.0 L953.4 489.2 L953.6 490.4 L953.9 491.6 L954.1 492.8 L954.4 494.0 L954.6 495.0 L954.9 495.9 L955.1 496.9 L955.4 497.9 L955.6 498.9 L955.9 499.8 L956.2 500.8 L956.5 501.8 L956.8 502.7 L957.1 503.7 L957.4 504.6 L957.7 505.5 L958.0 506.4 L958.4 507.3 L958.7 508.2 L959.0 509.0 L959.4 509.8 L959.7 510.6 L960.1 511.4 L960.4 512.1 L960.7 512.8 L961.1 513.4 L961.4 514.0 L961.8 514.6 L962.1 515.1 L962.5 515.6 L962.8 516.1 L963.2 516.5 L963.5 516.8 L963.9 517.1 L964.3 517.4 L964.7 517.5 L965.1 517.6 L965.5 517.6 L965.9 517.5 L966.3 517.3 L966.7 517.1 L967.1 516.8 L967.6 516.5 L968.0 516.2 L968.4 515.8 L968.8 515.4 L969.3 515.1 L969.7 514.7 L970.2 514.3 L970.7 513.9 L971.2 513.5 L971.7 513.2 L972.2 512.8 L972.8 512.6 L973.4 512.4 L974.0 512.2 L974.4 512.1 L974.8 512.0 L975.2 512.0 L975.6 511.9 L976.1 511.8 L976.5 511.7 L976.9 511.7 L977.4 511.6 L977.8 511.5 L978.2 511.5 L978.7 511.4 L979.2 511.4 L979.6 511.3 L980.1 511.3 L980.6 511.2 L981.1 511.2 L981.6 511.1 L982.1 511.1 L982.6 511.0 L983.1 511.0 L983.6 511.0 L984.1 510.9 L984.7 510.9 L985.2 510.9 L985.7 510.8 L986.3 510.8 L986.8 510.8 L987.4 510.8 L988.0 510.8 L988.6 510.7 L989.1 510.7 L989.7 510.7 L990.3 510.7 L991.0 510.7 L991.6 510.7 L992.2 510.7 L992.6 510.7 L993.1 510.7 L993.5 510.7 L993.9 510.7 L994.4 510.7 L994.9 510.7 L995.3 510.7 L995.8 510.7 L996.3 510.7 L996.8 510.8 L997.3 510.8 L997.8 510.8 L998.3 510.8 L998.8 510.8 L999.3 510.8 L999.8 510.8 L1000.3 510.9 L1000.8 510.9 L1001.4 510.9 L1001.9 510.9 L1002.4 510.9 L1003.0 511.0 L1003.5 511.0 L1004.0 511.0 L1004.6 511.1 L1005.1 511.1 L1005.7 511.1 L1006.2 511.1 L1006.7 511.2 L1007.3 511.2 L1007.8 511.2 L1008.4 511.3 L1008.9 511.3 L1009.4 511.3 L1010.0 511.4 L1010.5 511.4 L1011.0 511.4 L1011.5 511.5 L1012.1 511.5 L1012.6 511.6 L1013.1 511.6 L1013.6 511.6 L1014.1 511.7 L1014.6 511.7 L1015.1 511.8 L1015.6 511.8 L1016.1 511.9 L1016.6 511.9 L1017.0 512.0 L1017.5 512.0 L1018.0 512.1 L1018.4 512.1 L1018.9 512.1 L1019.3 512.2 L1019.9 512.3 L1020.4 512.4 L1021.0 512.5 L1021.6 512.6 L1022.2 512.7 L1022.7 512.8 L1023.3 513.0 L1023.9 513.1 L1024.4 513.3 L1025.0 513.5 L1025.6 513.6 L1026.1 513.8 L1026.7 514.0 L1027.2 514.1 L1027.8 514.3 L1028.3 514.5 L1028.8 514.7 L1029.4 514.9 L1029.9 515.0 L1030.4 515.2 L1030.9 515.4 L1031.4 515.5 L1031.9 515.7 L1032.4 515.8 L1032.9 516.0 L1033.3 516.1 L1033.8 516.2 L1034.2 516.3 L1034.7 516.4 L1035.1 516.5 L1035.5 516.6 L1035.9 516.6 L1036.3 516.6 L1036.7 516.7 L1037.1 516.7 L1037.4 516.6 L1037.8 516.6 L1038.1 516.5 L1038.4 516.4 L1038.7 516.3 L1039.0 516.2 L1039.7 515.8 L1040.3 515.3 L1040.7 514.8 L1041.1 514.2 L1041.3 513.5 L1041.5 512.8 L1041.5 511.9 L1041.6 510.8 L1041.6 509.6 L1041.6 508.2 L1041.7 506.5 L1041.7 504.7 L1041.8 502.6 L1042.0 500.2 L1042.1 499.1 L1042.2 497.9 L1042.3 496.7 L1042.4 495.4 L1042.5 494.1 L1042.6 492.7 L1042.7 491.3 L1042.7 489.8 L1042.8 488.3 L1042.9 486.7 L1043.0 485.1 L1043.1 483.5 L1043.2 481.8 L1043.3 480.1 L1043.4 478.4 L1043.5 476.7 L1043.6 474.9 L1043.7 473.1 L1043.8 471.3 L1043.9 469.5 L1044.0 467.6 L1044.1 465.8 L1044.2 464.0 L1044.2 462.1 L1044.3 460.3 L1044.4 458.4 L1044.5 456.6 L1044.6 454.7 L1044.7 452.9 L1044.8 451.1 L1044.8 449.3 L1044.9 447.6 L1045.0 445.8 L1045.1 444.1 L1045.1 442.4 L1045.2 440.7 L1045.3 438.9 L1045.4 437.2 L1045.4 435.4 L1045.5 433.6 L1045.6 431.8 L1045.6 430.0 L1045.7 428.2 L1045.8 426.4 L1045.8 424.6 L1045.9 422.8 L1046.0 421.0 L1046.0 419.2 L1046.1 417.3 L1046.2 415.5 L1046.2 413.7 L1046.3 411.9 L1046.3 410.0 L1046.4 408.2 L1046.5 406.4 L1046.5 404.6 L1046.6 402.8 L1046.6 401.0 L1046.7 399.2 L1046.7 397.4 L1046.8 395.7 L1046.8 393.9 L1046.9 392.2 L1047.0 390.5 L1047.0 388.8 L1047.1 387.1 L1047.1 385.4 L1047.2 383.4 L1047.2 381.3 L1047.3 379.2 L1047.3 377.1 L1047.4 375.0 L1047.4 372.8 L1047.5 370.7 L1047.5 368.6 L1047.6 366.4 L1047.6 364.3 L1047.7 362.2 L1047.7 360.1 L1047.8 358.0 L1047.8 356.0 L1047.9 353.9 L1047.9 352.0 L1047.9 350.0 L1048.0 348.1 L1048.0 346.3 L1048.1 344.5 L1048.1 342.7 L1048.1 341.0 L1048.2 339.4 L1048.2 337.9 L1048.2 336.4 L1048.2 335.0 L1048.3 333.7 L1048.3 332.5 L1048.4 327.9 L1048.4 324.9 L1048.5 322.9 L1048.5 321.7 L1048.5 320.9 L1048.5 320.0" fill="none" stroke="#20d040" stroke-width="1.2" stroke-linejoin="round" shape-rendering="crispEdges"/></g><g shape-rendering="crispEdges"><rect x="403" y="333" width="1" height="219" fill="#f0f0f0"/><rect x="403" y="546" width="865" height="1" fill="#f0f0f0"/><rect x="398" y="526" width="5" height="1" fill="#f0f0f0"/><rect x="401" y="505" width="2" height="1" fill="#f0f0f0"/><rect x="398" y="485" width="5" height="1" fill="#f0f0f0"/><rect x="401" y="464" width="2" height="1" fill="#f0f0f0"/><rect x="398" y="443" width="5" height="1" fill="#f0f0f0"/><rect x="401" y="423" width="2" height="1" fill="#f0f0f0"/><rect x="398" y="402" width="5" height="1" fill="#f0f0f0"/><rect x="401" y="382" width="2" height="1" fill="#f0f0f0"/><rect x="398" y="361" width="5" height="1" fill="#f0f0f0"/><rect x="401" y="340" width="2" height="1" fill="#f0f0f0"/><rect x="403" y="547" width="1" height="5" fill="#f0f0f0"/><rect x="433" y="547" width="1" height="2" fill="#f0f0f0"/><rect x="464" y="547" width="1" height="2" fill="#f0f0f0"/><rect x="495" y="547" width="1" height="2" fill="#f0f0f0"/><rect x="526" y="547" width="1" height="5" fill="#f0f0f0"/><rect x="557" y="547" width="1" height="2" fill="#f0f0f0"/><rect x="588" y="547" width="1" height="2" fill="#f0f0f0"/><rect x="618" y="547" width="1" height="2" fill="#f0f0f0"/><rect x="649" y="547" width="1" height="5" fill="#f0f0f0"/><rect x="680" y="547" width="1" height="2" fill="#f0f0f0"/><rect x="711" y="547" width="1" height="2" fill="#f0f0f0"/><rect x="742" y="547" width="1" height="2" fill="#f0f0f0"/><rect x="773" y="547" width="1" height="5" fill="#f0f0f0"/><rect x="804" y="547" width="1" height="2" fill="#f0f0f0"/><rect x="834" y="547" width="1" height="2" fill="#f0f0f0"/><rect x="865" y="547" width="1" height="2" fill="#f0f0f0"/><rect x="896" y="547" width="1" height="5" fill="#f0f0f0"/><rect x="927" y="547" width="1" height="2" fill="#f0f0f0"/><rect x="958" y="547" width="1" height="2" fill="#f0f0f0"/><rect x="989" y="547" width="1" height="2" fill="#f0f0f0"/><rect x="1020" y="547" width="1" height="5" fill="#f0f0f0"/><rect x="1050" y="547" width="1" height="2" fill="#f0f0f0"/><rect x="1081" y="547" width="1" height="2" fill="#f0f0f0"/><rect x="1112" y="547" width="1" height="2" fill="#f0f0f0"/><rect x="1143" y="547" width="1" height="5" fill="#f0f0f0"/><rect x="1174" y="547" width="1" height="2" fill="#f0f0f0"/><rect x="1205" y="547" width="1" height="2" fill="#f0f0f0"/><rect x="1236" y="547" width="1" height="2" fill="#f0f0f0"/><rect x="1266" y="547" width="1" height="5" fill="#f0f0f0"/></g></svg><div class="t" style="left:343px;top:356px;width:51px;text-align:right;color:#f4f4f4;font-size:10px;letter-spacing:0.3px;line-height:12px;">1</div><div class="t" style="left:343px;top:397px;width:51px;text-align:right;color:#f4f4f4;font-size:10px;letter-spacing:0.3px;line-height:12px;">0.75</div><div class="t" style="left:343px;top:438px;width:51px;text-align:right;color:#f4f4f4;font-size:10px;letter-spacing:0.3px;line-height:12px;">0.5</div><div class="t" style="left:343px;top:480px;width:51px;text-align:right;color:#f4f4f4;font-size:10px;letter-spacing:0.3px;line-height:12px;">0.25</div><div class="t" style="left:343px;top:521px;width:51px;text-align:right;color:#f4f4f4;font-size:10px;letter-spacing:0.3px;line-height:12px;">0</div><div class="t" style="left:373px;top:554px;width:60px;text-align:center;color:#f4f4f4;font-size:10px;letter-spacing:0.3px;line-height:12px;">1285</div><div class="t" style="left:496px;top:554px;width:60px;text-align:center;color:#f4f4f4;font-size:10px;letter-spacing:0.3px;line-height:12px;">1290</div><div class="t" style="left:619px;top:554px;width:60px;text-align:center;color:#f4f4f4;font-size:10px;letter-spacing:0.3px;line-height:12px;">1295</div><div class="t" style="left:743px;top:554px;width:60px;text-align:center;color:#f4f4f4;font-size:10px;letter-spacing:0.3px;line-height:12px;">1300</div><div class="t" style="left:866px;top:554px;width:60px;text-align:center;color:#f4f4f4;font-size:10px;letter-spacing:0.3px;line-height:12px;">1305</div><div class="t" style="left:990px;top:554px;width:60px;text-align:center;color:#f4f4f4;font-size:10px;letter-spacing:0.3px;line-height:12px;">1310</div><div class="t" style="left:1113px;top:554px;width:60px;text-align:center;color:#f4f4f4;font-size:10px;letter-spacing:0.3px;line-height:12px;">1315</div><div class="t" style="left:735px;top:567px;width:200px;text-align:center;color:#f4f4f4;font-size:10px;letter-spacing:0.3px;line-height:12px;">Wavelength [nm]</div><div class="t" style="left:866px;top:567px;width:401px;text-align:right;color:#f4f4f4;font-size:10px;letter-spacing:0.3px;line-height:12px;;font-weight:bold;letter-spacing:0.05px">Polarization Dependent Loss</div><div class="t" style="left:237px;top:433px;width:200px;text-align:center;color:#f4f4f4;font-size:10px;letter-spacing:0.3px;line-height:12px;;transform:rotate(-90deg)">PDL [dB]</div><div class="a" style="left:7px;top:589px;width:175px;height:24px;background:#d4d0c8;border-top:1px solid #fff;border-left:1px solid #fff;border-right:1px solid #404040;box-shadow:inset -1px 0 0 #808080;border-radius:2px 2px 0 0"></div><svg class="a" style="left:12px;top:592px" width="16" height="16" viewBox="0 0 16 16"><path d="M1 8.5L6.7 1L14.5 7L11 15.5Z" fill="url(#dg)" stroke="#7890c0" stroke-width="0.7"/></svg><div class="t" style="left:33px;top:596px;">LR4demuxPDL1.omr - General</div><div class="a" style="left:182px;top:589px;width:68px;height:24px;background:#d4d0c8;border-top:1px solid #fff;border-left:1px solid #fff;border-right:1px solid #404040;box-shadow:inset -1px 0 0 #808080;border-radius:2px 2px 0 0"></div><svg class="a" style="left:187px;top:592px" width="16" height="16" viewBox="0 0 16 16"><path d="M1 8.5L6.7 1L14.5 7L11 15.5Z" fill="url(#dg)" stroke="#7890c0" stroke-width="0.7"/></svg><div class="t" style="left:208px;top:596px;">Settings</div><div class="a" style="left:251px;top:589px;width:57px;height:24px;background:#d4d0c8;border-top:1px solid #fff;border-left:1px solid #fff;border-right:1px solid #404040;box-shadow:inset -1px 0 0 #808080;border-radius:2px 2px 0 0"></div><svg class="a" style="left:256px;top:592px" width="16" height="16" viewBox="0 0 16 16"><path d="M1 8.5L6.7 1L14.5 7L11 15.5Z" fill="url(#dg)" stroke="#7890c0" stroke-width="0.7"/></svg><div class="t" style="left:277px;top:596px;">Setup</div><div class="a" style="left:309px;top:587px;width:142px;height:26px;background:#d4d0c8;border-top:1px solid #fff;border-left:1px solid #fff;border-right:1px solid #404040;box-shadow:inset -1px 0 0 #808080;border-radius:2px 2px 0 0"></div><svg class="a" style="left:314px;top:590px" width="16" height="16" viewBox="0 0 16 16"><path d="M1 8.5L6.7 1L14.5 7L11 15.5Z" fill="url(#dg)" stroke="#7890c0" stroke-width="0.7"/></svg><div class="t" style="left:336px;top:594px;">DWDMAnalysis (TLS0)</div><div class="a" style="left:452px;top:589px;width:94px;height:24px;background:#d4d0c8;border-top:1px solid #fff;border-left:1px solid #fff;border-right:1px solid #404040;box-shadow:inset -1px 0 0 #808080;border-radius:2px 2px 0 0"></div><svg class="a" style="left:457px;top:592px" width="16" height="16" viewBox="0 0 16 16"><path d="M1 8.5L6.7 1L14.5 7L11 15.5Z" fill="url(#dg)" stroke="#7890c0" stroke-width="0.7"/></svg><div class="t" style="left:476px;top:596px;">File Properties</div><div style="position:absolute;left:7px;top:612px;width:1263px;height:105px;background:#000"></div><div style="position:absolute;left:8px;top:613px;width:1261px;height:103px;background:#808080"></div><div style="position:absolute;left:9px;top:614px;width:1259px;height:101px;background:#d4d0c8"></div><div style="position:absolute;left:10px;top:615px;width:1241px;height:83px;background:#fff"></div><div class="a" style="left:10px;top:615px;width:1241px;height:83px;overflow:hidden"><div class="a" style="left:0px;top:0;width:51px;height:17px;background:#d4d0c8;border-top:1px solid #fff;border-left:1px solid #fff;border-right:1px solid #404040;border-bottom:1px solid #404040;box-shadow:inset -1px -1px 0 #808080"></div><div class="t" style="left:5px;top:3px">Channel</div><div class="a" style="left:51px;top:0;width:75px;height:17px;background:#d4d0c8;border-top:1px solid #fff;border-left:1px solid #fff;border-right:1px solid #404040;border-bottom:1px solid #404040;box-shadow:inset -1px -1px 0 #808080"></div><div class="t" style="left:56px;top:3px">Peak Wvl</div><div class="a" style="left:126px;top:0;width:106px;height:17px;background:#d4d0c8;border-top:1px solid #fff;border-left:1px solid #fff;border-right:1px solid #404040;border-bottom:1px solid #404040;box-shadow:inset -1px -1px 0 #808080"></div><div class="t" style="left:131px;top:3px">Center Wavelength</div><div class="a" style="left:232px;top:0;width:93px;height:17px;background:#d4d0c8;border-top:1px solid #fff;border-left:1px solid #fff;border-right:1px solid #404040;border-bottom:1px solid #404040;box-shadow:inset -1px -1px 0 #808080"></div><div class="t" style="left:237px;top:3px">nom Wavelength</div><div class="a" style="left:325px;top:0;width:120px;height:17px;background:#d4d0c8;border-top:1px solid #fff;border-left:1px solid #fff;border-right:1px solid #404040;border-bottom:1px solid #404040;box-shadow:inset -1px -1px 0 #808080"></div><div class="t" style="left:330px;top:3px">nom Wavelength Error</div><div class="a" style="left:445px;top:0;width:111px;height:17px;background:#d4d0c8;border-top:1px solid #fff;border-left:1px solid #fff;border-right:1px solid #404040;border-bottom:1px solid #404040;box-shadow:inset -1px -1px 0 #808080"></div><div class="t" style="left:450px;top:3px">Loss at nom Channel</div><div class="a" style="left:556px;top:0;width:81px;height:17px;background:#d4d0c8;border-top:1px solid #fff;border-left:1px solid #fff;border-right:1px solid #404040;border-bottom:1px solid #404040;box-shadow:inset -1px -1px 0 #808080"></div><div class="t" style="left:561px;top:3px">Ch-Loss (max)</div><div class="a" style="left:637px;top:0;width:83px;height:17px;background:#d4d0c8;border-top:1px solid #fff;border-left:1px solid #fff;border-right:1px solid #404040;border-bottom:1px solid #404040;box-shadow:inset -1px -1px 0 #808080"></div><div class="t" style="left:642px;top:3px">Channel Ripple</div><div class="a" style="left:720px;top:0;width:96px;height:17px;background:#d4d0c8;border-top:1px solid #fff;border-left:1px solid #fff;border-right:1px solid #404040;border-bottom:1px solid #404040;box-shadow:inset -1px -1px 0 #808080"></div><div class="t" style="left:725px;top:3px">Ch-Isolation (adj)</div><div class="a" style="left:816px;top:0;width:114px;height:17px;background:#d4d0c8;border-top:1px solid #fff;border-left:1px solid #fff;border-right:1px solid #404040;border-bottom:1px solid #404040;box-shadow:inset -1px -1px 0 #808080"></div><div class="t" style="left:821px;top:3px">Ch-Isolation (nonadj)</div><div class="a" style="left:930px;top:0;width:83px;height:17px;background:#d4d0c8;border-top:1px solid #fff;border-left:1px solid #fff;border-right:1px solid #404040;border-bottom:1px solid #404040;box-shadow:inset -1px -1px 0 #808080"></div><div class="t" style="left:935px;top:3px">Total Crosstalk</div><div class="a" style="left:1013px;top:0;width:108px;height:17px;background:#d4d0c8;border-top:1px solid #fff;border-left:1px solid #fff;border-right:1px solid #404040;border-bottom:1px solid #404040;box-shadow:inset -1px -1px 0 #808080"></div><div class="t" style="left:1018px;top:3px">PDL at nom Channel</div><div class="a" style="left:1121px;top:0;width:78px;height:17px;background:#d4d0c8;border-top:1px solid #fff;border-left:1px solid #fff;border-right:1px solid #404040;border-bottom:1px solid #404040;box-shadow:inset -1px -1px 0 #808080"></div><div class="t" style="left:1126px;top:3px">Ch-PDL (max)</div><div class="a" style="left:1199px;top:0;width:91px;height:17px;background:#d4d0c8;border-top:1px solid #fff;border-left:1px solid #fff;border-right:1px solid #404040;border-bottom:1px solid #404040;box-shadow:inset -1px -1px 0 #808080"></div><div class="t" style="left:1204px;top:3px">Loss at</div><div class="a" style="left:0;top:33px;width:1300px;height:1px;background:#d4d0c8"></div><div class="t" style="left:6px;top:20px">1</div><div class="t" style="left:57px;top:20px">1296.040 nm</div><div class="t" style="left:132px;top:20px">1295.461 nm</div><div class="t" style="left:238px;top:20px">1295.559 nm</div><div class="t" style="left:331px;top:20px">-98.429 pm</div><div class="t" style="left:451px;top:20px">1.390 dB</div><div class="t" style="left:562px;top:20px">1.425 dB</div><div class="t" style="left:643px;top:20px">0.073 dB</div><div class="t" style="left:726px;top:20px">39.320 dB</div><div class="t" style="left:822px;top:20px">61.757 dB</div><div class="t" style="left:936px;top:20px">37.909 dB</div><div class="t" style="left:1019px;top:20px">0.147 dB</div><div class="t" style="left:1127px;top:20px">0.160 dB</div><div class="t" style="left:1205px;top:20px">1.397 d</div><div class="a" style="left:0;top:50px;width:1300px;height:1px;background:#d4d0c8"></div><div class="t" style="left:6px;top:37px">2</div><div class="t" style="left:57px;top:37px">1299.436 nm</div><div class="t" style="left:132px;top:37px">1299.975 nm</div><div class="t" style="left:238px;top:37px">1300.054 nm</div><div class="t" style="left:331px;top:37px">-79.478 pm</div><div class="t" style="left:451px;top:37px">1.628 dB</div><div class="t" style="left:562px;top:37px">1.659 dB</div><div class="t" style="left:643px;top:37px">0.070 dB</div><div class="t" style="left:726px;top:37px">44.663 dB</div><div class="t" style="left:822px;top:37px">62.245 dB</div><div class="t" style="left:936px;top:37px">44.319 dB</div><div class="t" style="left:1019px;top:37px">0.136 dB</div><div class="t" style="left:1127px;top:37px">0.149 dB</div><div class="t" style="left:1205px;top:37px">1.632 d</div><div class="a" style="left:0;top:67px;width:1300px;height:1px;background:#d4d0c8"></div><div class="t" style="left:6px;top:54px">3</div><div class="t" style="left:57px;top:54px">1303.888 nm</div><div class="t" style="left:132px;top:54px">1304.540 nm</div><div class="t" style="left:238px;top:54px">1304.580 nm</div><div class="t" style="left:331px;top:54px">-40.351 pm</div><div class="t" style="left:451px;top:54px">1.354 dB</div><div class="t" style="left:562px;top:54px">1.370 dB</div><div class="t" style="left:643px;top:54px">0.050 dB</div><div class="t" style="left:726px;top:54px">44.939 dB</div><div class="t" style="left:822px;top:54px">60.798 dB</div><div class="t" style="left:936px;top:54px">44.351 dB</div><div class="t" style="left:1019px;top:54px">0.121 dB</div><div class="t" style="left:1127px;top:54px">0.126 dB</div><div class="t" style="left:1205px;top:54px">1.354 d</div><div class="a" style="left:0;top:84px;width:1300px;height:1px;background:#d4d0c8"></div><div class="t" style="left:6px;top:71px">4</div><div class="t" style="left:57px;top:71px">1310.752 nm</div><div class="t" style="left:132px;top:71px">1309.162 nm</div><div class="t" style="left:238px;top:71px">1309.137 nm</div><div class="t" style="left:331px;top:71px">24.170 pm</div><div class="t" style="left:451px;top:71px">1.203 dB</div><div class="t" style="left:562px;top:71px">1.209 dB</div><div class="t" style="left:643px;top:71px">0.042 dB</div><div class="t" style="left:726px;top:71px">42.096 dB</div><div class="t" style="left:822px;top:71px">59.930 dB</div><div class="t" style="left:936px;top:71px">41.782 dB</div><div class="t" style="left:1019px;top:71px">0.094 dB</div><div class="t" style="left:1127px;top:71px">0.095 dB</div><div class="t" style="left:1205px;top:71px">1.203 d</div><div class="a" style="left:51px;top:17px;width:1px;height:70px;background:#d4d0c8"></div><div class="a" style="left:126px;top:17px;width:1px;height:70px;background:#d4d0c8"></div><div class="a" style="left:232px;top:17px;width:1px;height:70px;background:#d4d0c8"></div><div class="a" style="left:325px;top:17px;width:1px;height:70px;background:#d4d0c8"></div><div class="a" style="left:445px;top:17px;width:1px;height:70px;background:#d4d0c8"></div><div class="a" style="left:556px;top:17px;width:1px;height:70px;background:#d4d0c8"></div><div class="a" style="left:637px;top:17px;width:1px;height:70px;background:#d4d0c8"></div><div class="a" style="left:720px;top:17px;width:1px;height:70px;background:#d4d0c8"></div><div class="a" style="left:816px;top:17px;width:1px;height:70px;background:#d4d0c8"></div><div class="a" style="left:930px;top:17px;width:1px;height:70px;background:#d4d0c8"></div><div class="a" style="left:1013px;top:17px;width:1px;height:70px;background:#d4d0c8"></div><div class="a" style="left:1121px;top:17px;width:1px;height:70px;background:#d4d0c8"></div><div class="a" style="left:1199px;top:17px;width:1px;height:70px;background:#d4d0c8"></div></div><div class="a" style="left:10px;top:698px;width:1241px;height:16px;background-color:#fff;background-image:linear-gradient(45deg,#d4d0c8 25%,transparent 25%,transparent 75%,#d4d0c8 75%),linear-gradient(45deg,#d4d0c8 25%,transparent 25%,transparent 75%,#d4d0c8 75%);background-size:2px 2px;background-position:0 0,1px 1px"></div><div class="a" style="left:10px;top:698px;width:16px;height:16px;background:#d4d0c8;border-top:1px solid #d4d0c8;border-left:1px solid #d4d0c8;border-right:1px solid #404040;border-bottom:1px solid #404040;box-shadow:inset 1px 1px 0 #fff,inset -1px -1px 0 #808080"></div><svg class="a" style="left:15px;top:702px" width="5" height="8"><path d="M4 0V8L0 4Z" fill="#000"/></svg><div class="a" style="left:26px;top:698px;width:1025px;height:16px;background:#d4d0c8;border-top:1px solid #d4d0c8;border-left:1px solid #d4d0c8;border-right:1px solid #404040;border-bottom:1px solid #404040;box-shadow:inset 1px 1px 0 #fff,inset -1px -1px 0 #808080"></div><div class="a" style="left:1235px;top:698px;width:16px;height:16px;background:#d4d0c8;border-top:1px solid #d4d0c8;border-left:1px solid #d4d0c8;border-right:1px solid #404040;border-bottom:1px solid #404040;box-shadow:inset 1px 1px 0 #fff,inset -1px -1px 0 #808080"></div><svg class="a" style="left:1241px;top:702px" width="5" height="8"><path d="M0 0V8L4 4Z" fill="#000"/></svg><div class="a" style="left:1251px;top:615px;width:16px;height:83px;background-color:#fff;background-image:linear-gradient(45deg,#d4d0c8 25%,transparent 25%,transparent 75%,#d4d0c8 75%),linear-gradient(45deg,#d4d0c8 25%,transparent 25%,transparent 75%,#d4d0c8 75%);background-size:2px 2px;background-position:0 0,1px 1px"></div><div class="a" style="left:1251px;top:615px;width:16px;height:16px;background:#d4d0c8;border-top:1px solid #d4d0c8;border-left:1px solid #d4d0c8;border-right:1px solid #404040;border-bottom:1px solid #404040;box-shadow:inset 1px 1px 0 #fff,inset -1px -1px 0 #808080"></div><svg class="a" style="left:1255px;top:620px" width="8" height="5"><path d="M0 4H8L4 0Z" fill="#000"/></svg><div class="a" style="left:1251px;top:631px;width:16px;height:37px;background:#d4d0c8;border-top:1px solid #d4d0c8;border-left:1px solid #d4d0c8;border-right:1px solid #404040;border-bottom:1px solid #404040;box-shadow:inset 1px 1px 0 #fff,inset -1px -1px 0 #808080"></div><div class="a" style="left:1251px;top:682px;width:16px;height:16px;background:#d4d0c8;border-top:1px solid #d4d0c8;border-left:1px solid #d4d0c8;border-right:1px solid #404040;border-bottom:1px solid #404040;box-shadow:inset 1px 1px 0 #fff,inset -1px -1px 0 #808080"></div><svg class="a" style="left:1255px;top:688px" width="8" height="5"><path d="M0 0H8L4 4Z" fill="#000"/></svg><div style="position:absolute;left:1251px;top:698px;width:16px;height:16px;background:#d4d0c8"></div><div class="t" style="left:6px;top:727px;">Ready</div><div class="a" style="left:1167px;top:725px;width:25px;height:16px;border-top:1px solid #808080;border-left:1px solid #808080;border-right:1px solid #fff;border-bottom:1px solid #fff"></div><div class="a" style="left:1194px;top:725px;width:29px;height:16px;border-top:1px solid #808080;border-left:1px solid #808080;border-right:1px solid #fff;border-bottom:1px solid #fff"></div><div class="t" style="left:1197px;top:727px;">NUM</div><div class="a" style="left:1225px;top:725px;width:30px;height:16px;border-top:1px solid #808080;border-left:1px solid #808080;border-right:1px solid #fff;border-bottom:1px solid #fff"></div><svg class="a" style="left:1260px;top:728px" width="14" height="14"><path d="M13 1L1 13M13 5L5 13M13 9L9 13" stroke="#fff" stroke-width="1"/><path d="M13 2L2 13M13 6L6 13M13 10L10 13" stroke="#808080" stroke-width="1"/></svg></body></html>
